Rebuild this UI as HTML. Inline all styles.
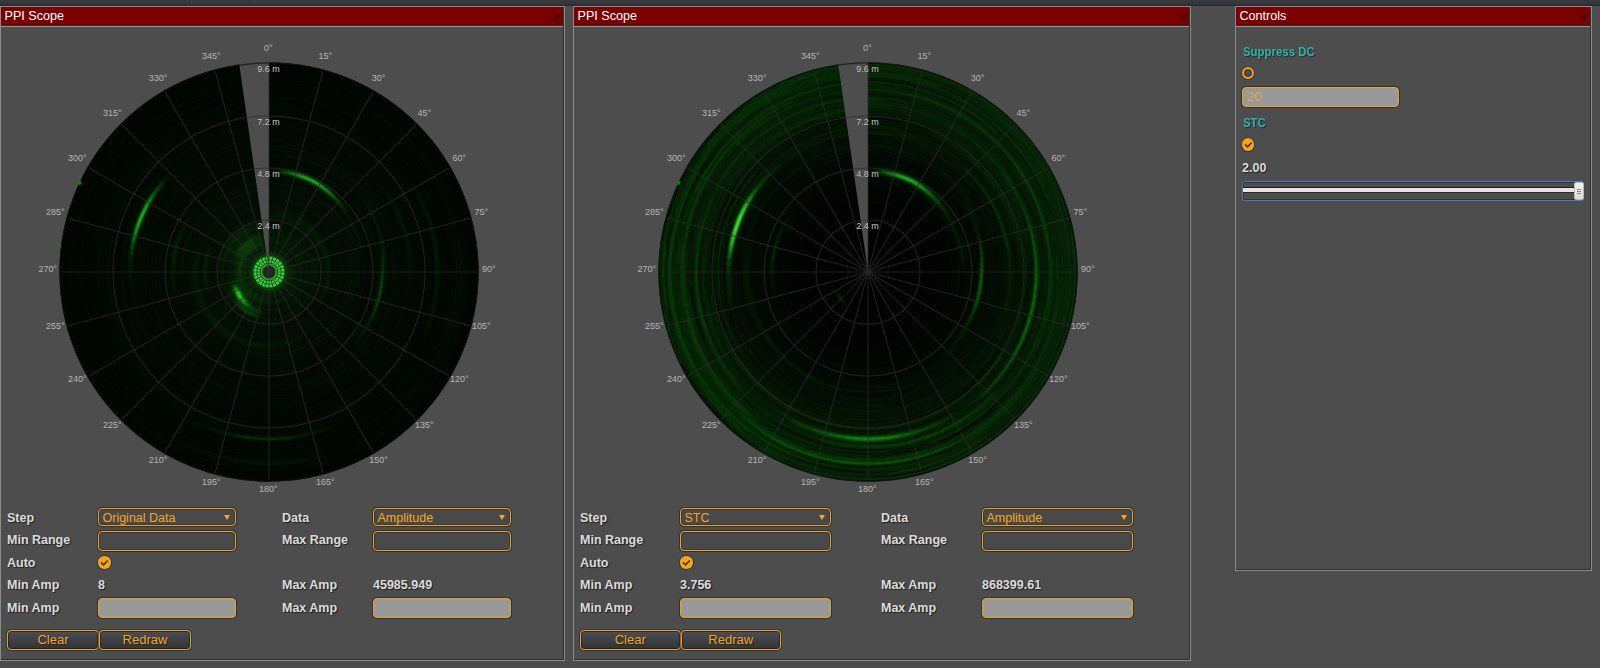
<!DOCTYPE html>
<html><head><meta charset="utf-8"><title>PPI Scope</title>
<style>
*{box-sizing:border-box;margin:0;padding:0}
html,body{width:1600px;height:668px;overflow:hidden;background:#4d4d4d;font-family:"Liberation Sans",sans-serif;font-size:12.5px;color:#e0e0e0}
.topbar{position:absolute;left:0;top:0;width:1600px;height:6px;background:linear-gradient(#363a3e 0,#32363a 65%,#24272a 100%)}
.topbar i{position:absolute;top:0;width:1px;height:4px;background:#454a4f}
.topbar u{position:absolute;top:0;width:1px;height:4px;background:#2a2d30}
.panel{position:absolute;border:1px solid #8c8c8c;background:#4d4d4d;box-shadow:inset -1px -1px 0 #303030}
.title{position:absolute;left:0;top:0;right:1px;height:20px;background:#7a0000;border-bottom:1px solid #969696;box-shadow:inset 0 -1px 0 #3c2020;color:#fff;font-size:12.6px;line-height:18px;padding-left:3.5px}
.title svg{position:absolute;right:0.3px;top:5.8px}
.lbl,.val{position:absolute;font-weight:bold;font-size:12.5px;color:#dcdcdc;text-shadow:1px 1px 1px #1e1e1e;white-space:nowrap;line-height:14px}
.sel{position:absolute;height:18px;border:1px solid #f5a31a;border-radius:4px;background:#494949;color:#f5a623;font-size:12.5px;line-height:16px;padding:1px 0 0 3.5px;box-shadow:0 0 0 1px rgba(20,25,40,.55),inset 0 0 0 1px rgba(20,25,40,.35);white-space:nowrap}
.sel:after{content:"";position:absolute;right:5.1px;top:5.7px;border:3px solid transparent;border-top:5px solid #f5a623;border-bottom:0}
.inp{position:absolute;height:20px;border:1px solid #f5a31a;border-radius:4px;background:#494949;box-shadow:0 0 0 1px rgba(20,25,40,.55),inset 0 0 0 1px rgba(20,25,40,.35);color:#eba24c;line-height:18px;font-size:13px;padding-left:4px}
.inp.dis{background:#999;box-shadow:0 0 0 1px rgba(20,25,40,.55)}
.btn{position:absolute;height:20px;border:1px solid #f5a31a;border-radius:4px;background:linear-gradient(#4b4f55,#303337);color:#f5a623;font-size:13px;text-align:center;line-height:18px;box-shadow:0 0 0 1px rgba(20,25,40,.45),inset 0 0 0 1px rgba(10,20,45,.6);text-shadow:1px 1px 1px #222}
.chk{position:absolute;width:12.4px;height:12.4px;border-radius:50%;background:#f7a41d;box-shadow:0 0 0 1px rgba(20,25,40,.4)}
.chk svg{position:absolute;left:0;top:0}
.rad{position:absolute;width:12.4px;height:12.4px;border-radius:50%;border:2px solid #f7a41d;box-shadow:0 0 0 1px rgba(20,25,40,.4),inset 0 0 0 1px rgba(20,25,40,.4)}
.teal{position:absolute;font-weight:bold;font-size:12.8px;color:#2cb5ac;text-shadow:1px 1px 1px #2a2a2a;line-height:14px;transform:scaleX(.893);transform-origin:0 0;white-space:nowrap}
</style></head><body>
<div class="topbar"><u style="left:190px"></u><i style="left:191px"></i><u style="left:252px"></u><i style="left:253px"></i><u style="left:1193px"></u><i style="left:1194px"></i></div>

<!-- Panel 1 -->
<div class="panel" style="left:0;top:6px;width:565px;height:655px">
  <div class="title">PPI Scope<svg width="11" height="9" viewBox="0 0 11 9"><path d="M2.6 0.9L7 8M9.6 0.8L0.8 7.8" stroke="#560000" stroke-width="2" fill="none"/></svg></div>
</div>
<div style="position:absolute;left:28.5px;top:30.5px;width:480px;height:470px"><svg class="radar" width="480" height="470" viewBox="-240 -241 480 470">
<defs><filter id="b1a" x="-20%" y="-20%" width="140%" height="140%"><feGaussianBlur stdDeviation="1.0"/></filter><filter id="b2a" x="-20%" y="-20%" width="140%" height="140%"><feGaussianBlur stdDeviation="2.6"/></filter><filter id="b0a" x="-20%" y="-20%" width="140%" height="140%"><feGaussianBlur stdDeviation="0.55"/></filter><clipPath id="ca"><circle r="209.5"/></clipPath>
<radialGradient id="ga" gradientUnits="userSpaceOnUse" cx="0" cy="0" r="209.5"><stop offset="0" stop-color="#092609"/><stop offset="0.1" stop-color="#061c06"/><stop offset="0.25" stop-color="#030f03"/><stop offset="0.5" stop-color="#020902"/><stop offset="1" stop-color="#010601"/></radialGradient>
</defs>
<circle r="209.5" fill="url(#ga)"/>
<g clip-path="url(#ca)" fill="none">
<g filter="url(#b0a)">
<path d="M-100.2 -35.3A106.2 106.2 0 0 1 -32.9 -101.0" stroke="#0f6a0f" stroke-width="1.6" stroke-opacity="0.04"/>
<path d="M-103.0 -40.5A110.7 110.7 0 0 1 -56.0 -95.5" stroke="#1a8a1a" stroke-width="1.0" stroke-opacity="0.03"/>
<path d="M-100.7 113.4A151.7 151.7 0 0 1 -48.3 -143.8" stroke="#000" stroke-width="1.8" stroke-opacity="0.39"/>
<path d="M50.6 -2.6A50.6 50.6 0 0 1 32.8 38.6" stroke="#000" stroke-width="0.8" stroke-opacity="0.26"/>
<path d="M25.6 7.3A26.6 26.6 0 0 1 7.0 25.7" stroke="#0f6a0f" stroke-width="0.9" stroke-opacity="0.05"/>
<path d="M-9.1 -19.8A21.8 21.8 0 0 1 21.5 -3.7" stroke="#000" stroke-width="1.1" stroke-opacity="0.30"/>
<path d="M-14.2 33.8A36.6 36.6 0 0 1 -28.9 22.5" stroke="#000" stroke-width="1.3" stroke-opacity="0.33"/>
<path d="M-37.9 16.4A41.3 41.3 0 0 1 -41.2 -2.9" stroke="#000" stroke-width="0.8" stroke-opacity="0.19"/>
<path d="M27.1 -54.9A61.2 61.2 0 0 1 57.9 19.8" stroke="#1a8a1a" stroke-width="1.8" stroke-opacity="0.05"/>
<path d="M74.8 117.9A139.6 139.6 0 0 1 12.6 139.1" stroke="#0f6a0f" stroke-width="1.0" stroke-opacity="0.04"/>
<path d="M16.1 194.3A195.0 195.0 0 0 1 -194.8 7.9" stroke="#000" stroke-width="0.7" stroke-opacity="0.31"/>
<path d="M72.7 130.7A149.6 149.6 0 0 1 -142.6 -45.0" stroke="#000" stroke-width="1.8" stroke-opacity="0.25"/>
<path d="M-14.7 -92.1A93.3 93.3 0 0 1 58.4 72.8" stroke="#000" stroke-width="0.7" stroke-opacity="0.40"/>
<path d="M-103.2 83.4A132.7 132.7 0 0 1 45.3 -124.8" stroke="#1a8a1a" stroke-width="1.1" stroke-opacity="0.03"/>
<path d="M-34.9 -19.3A39.9 39.9 0 0 1 31.6 -24.3" stroke="#1a8a1a" stroke-width="0.7" stroke-opacity="0.04"/>
<path d="M68.9 63.6A93.8 93.8 0 0 1 32.1 88.1" stroke="#000" stroke-width="1.4" stroke-opacity="0.16"/>
<path d="M90.7 104.3A138.3 138.3 0 0 1 -8.9 138.0" stroke="#000" stroke-width="1.6" stroke-opacity="0.28"/>
<path d="M116.8 -75.7A139.2 139.2 0 0 1 -17.5 138.1" stroke="#000" stroke-width="1.4" stroke-opacity="0.17"/>
<path d="M84.7 -110.9A139.5 139.5 0 0 1 116.4 77.0" stroke="#0f6a0f" stroke-width="1.4" stroke-opacity="0.07"/>
<path d="M-15.9 -23.3A28.2 28.2 0 0 1 22.2 -17.5" stroke="#1a8a1a" stroke-width="1.1" stroke-opacity="0.06"/>
<path d="M-75.5 84.7A113.5 113.5 0 0 1 -36.1 -107.6" stroke="#1a8a1a" stroke-width="1.2" stroke-opacity="0.03"/>
<path d="M18.5 29.7A34.9 34.9 0 0 1 -1.9 34.9" stroke="#000" stroke-width="1.5" stroke-opacity="0.37"/>
<path d="M37.2 -56.8A67.9 67.9 0 0 1 -22.4 64.1" stroke="#000" stroke-width="1.3" stroke-opacity="0.18"/>
<path d="M36.3 -29.9A47.0 47.0 0 0 1 15.9 44.3" stroke="#0f6a0f" stroke-width="1.5" stroke-opacity="0.06"/>
<path d="M3.7 -27.3A27.6 27.6 0 0 1 3.7 27.3" stroke="#000" stroke-width="1.5" stroke-opacity="0.37"/>
<path d="M-40.2 135.0A140.9 140.9 0 0 1 -111.8 85.8" stroke="#0f6a0f" stroke-width="1.8" stroke-opacity="0.04"/>
<path d="M-146.8 63.4A159.9 159.9 0 0 1 -97.0 -127.2" stroke="#1a8a1a" stroke-width="1.7" stroke-opacity="0.06"/>
<path d="M17.4 -190.0A190.8 190.8 0 0 1 186.1 42.0" stroke="#0f6a0f" stroke-width="0.7" stroke-opacity="0.07"/>
<path d="M96.8 -109.0A145.8 145.8 0 0 1 143.5 -25.9" stroke="#000" stroke-width="0.8" stroke-opacity="0.10"/>
<path d="M18.2 67.0A69.4 69.4 0 0 1 -65.1 -24.3" stroke="#000" stroke-width="1.7" stroke-opacity="0.20"/>
<path d="M-28.6 -104.3A108.2 108.2 0 0 1 24.1 -105.4" stroke="#1a8a1a" stroke-width="0.8" stroke-opacity="0.04"/>
<path d="M-38.0 18.4A42.2 42.2 0 0 1 -31.0 -28.7" stroke="#0f6a0f" stroke-width="0.7" stroke-opacity="0.03"/>
<path d="M-37.2 -46.0A59.1 59.1 0 0 1 45.4 -37.9" stroke="#000" stroke-width="1.4" stroke-opacity="0.37"/>
<path d="M78.6 -25.4A82.6 82.6 0 0 1 -36.9 73.9" stroke="#1a8a1a" stroke-width="1.6" stroke-opacity="0.05"/>
<path d="M49.5 36.3A61.3 61.3 0 0 1 9.8 60.5" stroke="#000" stroke-width="0.9" stroke-opacity="0.38"/>
<path d="M123.6 -144.1A189.8 189.8 0 0 1 -15.8 189.2" stroke="#000" stroke-width="1.8" stroke-opacity="0.12"/>
<path d="M-107.4 23.1A109.8 109.8 0 0 1 38.1 -103.0" stroke="#0f6a0f" stroke-width="1.3" stroke-opacity="0.04"/>
<path d="M46.3 -173.6A179.7 179.7 0 0 1 42.0 174.7" stroke="#0f6a0f" stroke-width="0.7" stroke-opacity="0.02"/>
<path d="M86.7 127.9A154.6 154.6 0 0 1 -153.7 16.7" stroke="#0f6a0f" stroke-width="1.3" stroke-opacity="0.06"/>
<path d="M-41.2 39.1A56.8 56.8 0 0 1 -55.6 11.5" stroke="#0f6a0f" stroke-width="0.9" stroke-opacity="0.03"/>
<path d="M16.4 103.9A105.1 105.1 0 0 1 -74.3 74.4" stroke="#0f6a0f" stroke-width="1.5" stroke-opacity="0.07"/>
<path d="M54.1 7.6A54.6 54.6 0 0 1 28.1 46.8" stroke="#000" stroke-width="1.5" stroke-opacity="0.24"/>
<path d="M44.9 -73.5A86.1 86.1 0 0 1 -11.7 85.3" stroke="#1a8a1a" stroke-width="1.6" stroke-opacity="0.04"/>
<path d="M8.3 -196.6A196.8 196.8 0 0 1 79.8 179.9" stroke="#1a8a1a" stroke-width="0.9" stroke-opacity="0.04"/>
<path d="M-122.7 21.9A124.7 124.7 0 0 1 -88.7 -87.5" stroke="#0f6a0f" stroke-width="1.4" stroke-opacity="0.05"/>
<path d="M-24.8 -173.5A175.2 175.2 0 0 1 62.7 163.6" stroke="#1a8a1a" stroke-width="1.7" stroke-opacity="0.03"/>
<path d="M-3.6 122.1A122.2 122.2 0 0 1 -59.2 106.9" stroke="#0f6a0f" stroke-width="1.5" stroke-opacity="0.03"/>
<path d="M27.4 -5.5A28.0 28.0 0 0 1 -23.4 15.2" stroke="#000" stroke-width="1.0" stroke-opacity="0.23"/>
<path d="M-92.9 -159.4A184.5 184.5 0 0 1 184.0 13.9" stroke="#000" stroke-width="1.3" stroke-opacity="0.11"/>
<path d="M56.4 -94.0A109.7 109.7 0 0 1 -25.8 106.6" stroke="#0f6a0f" stroke-width="1.2" stroke-opacity="0.07"/>
<path d="M-5.6 62.4A62.7 62.7 0 0 1 -50.7 36.9" stroke="#0f6a0f" stroke-width="1.3" stroke-opacity="0.07"/>
<path d="M-121.9 148.4A192.0 192.0 0 0 1 35.2 -188.8" stroke="#000" stroke-width="1.8" stroke-opacity="0.30"/>
<path d="M41.5 66.4A78.4 78.4 0 0 1 -71.1 32.9" stroke="#000" stroke-width="1.0" stroke-opacity="0.26"/>
<path d="M-21.1 -36.9A42.5 42.5 0 0 1 1.2 -42.5" stroke="#000" stroke-width="1.3" stroke-opacity="0.21"/>
<path d="M-29.8 119.9A123.5 123.5 0 0 1 -92.5 81.9" stroke="#1a8a1a" stroke-width="1.5" stroke-opacity="0.05"/>
<path d="M40.1 90.5A99.0 99.0 0 0 1 -33.1 93.3" stroke="#0f6a0f" stroke-width="1.2" stroke-opacity="0.03"/>
<path d="M32.1 -171.8A174.8 174.8 0 0 1 173.7 19.5" stroke="#0f6a0f" stroke-width="0.8" stroke-opacity="0.05"/>
<path d="M68.4 14.9A70.0 70.0 0 0 1 54.4 44.0" stroke="#1a8a1a" stroke-width="0.9" stroke-opacity="0.02"/>
<path d="M-126.2 -94.0A157.4 157.4 0 0 1 130.7 -87.7" stroke="#000" stroke-width="1.2" stroke-opacity="0.25"/>
<path d="M-92.1 103.4A138.5 138.5 0 0 1 15.3 -137.7" stroke="#0f6a0f" stroke-width="1.4" stroke-opacity="0.02"/>
<path d="M-95.9 -76.1A122.4 122.4 0 0 1 108.2 -57.2" stroke="#1a8a1a" stroke-width="1.6" stroke-opacity="0.05"/>
<path d="M-30.2 -57.3A64.8 64.8 0 0 1 44.1 -47.5" stroke="#0f6a0f" stroke-width="1.0" stroke-opacity="0.07"/>
<path d="M62.0 3.7A62.1 62.1 0 0 1 -42.9 44.8" stroke="#1a8a1a" stroke-width="1.0" stroke-opacity="0.03"/>
<path d="M-28.3 27.2A39.2 39.2 0 0 1 -38.6 -6.9" stroke="#0f6a0f" stroke-width="1.5" stroke-opacity="0.05"/>
<path d="M131.3 110.5A171.6 171.6 0 0 1 -171.1 -12.3" stroke="#000" stroke-width="1.1" stroke-opacity="0.27"/>
<path d="M66.0 -139.0A153.8 153.8 0 0 1 150.4 -32.5" stroke="#0f6a0f" stroke-width="1.5" stroke-opacity="0.05"/>
<path d="M32.6 -24.8A41.0 41.0 0 0 1 13.9 38.6" stroke="#000" stroke-width="1.3" stroke-opacity="0.27"/>
<path d="M31.4 -46.1A55.7 55.7 0 0 1 -13.2 54.2" stroke="#000" stroke-width="1.8" stroke-opacity="0.35"/>
<path d="M14.5 29.2A32.6 32.6 0 0 1 -26.8 18.6" stroke="#0f6a0f" stroke-width="0.8" stroke-opacity="0.02"/>
<path d="M83.6 -27.0A87.8 87.8 0 0 1 85.5 19.8" stroke="#000" stroke-width="1.4" stroke-opacity="0.21"/>
<path d="M54.9 -81.0A97.9 97.9 0 0 1 53.5 81.9" stroke="#000" stroke-width="1.7" stroke-opacity="0.21"/>
<path d="M-92.4 -143.1A170.3 170.3 0 0 1 148.8 82.9" stroke="#000" stroke-width="1.6" stroke-opacity="0.13"/>
<path d="M197.8 10.3A198.1 198.1 0 0 1 -161.6 114.6" stroke="#1a8a1a" stroke-width="1.8" stroke-opacity="0.05"/>
<path d="M-132.1 -140.4A192.8 192.8 0 0 1 179.1 71.4" stroke="#1a8a1a" stroke-width="1.1" stroke-opacity="0.06"/>
<path d="M127.4 82.8A152.0 152.0 0 0 1 56.3 141.1" stroke="#1a8a1a" stroke-width="1.5" stroke-opacity="0.04"/>
<path d="M108.7 -12.3A109.3 109.3 0 0 1 -35.7 103.4" stroke="#000" stroke-width="1.4" stroke-opacity="0.21"/>
<path d="M92.4 -176.3A199.1 199.1 0 0 1 195.4 -37.8" stroke="#0f6a0f" stroke-width="1.1" stroke-opacity="0.03"/>
<path d="M16.9 -116.8A118.0 118.0 0 0 1 9.6 117.6" stroke="#1a8a1a" stroke-width="1.5" stroke-opacity="0.06"/>
<path d="M-109.8 81.9A137.0 137.0 0 0 1 20.7 -135.4" stroke="#0f6a0f" stroke-width="1.3" stroke-opacity="0.04"/>
<path d="M11.6 19.8A23.0 23.0 0 0 1 -22.0 6.7" stroke="#000" stroke-width="1.1" stroke-opacity="0.18"/>
<path d="M-68.5 97.4A119.1 119.1 0 0 1 -112.7 38.5" stroke="#1a8a1a" stroke-width="1.6" stroke-opacity="0.06"/>
<path d="M143.4 -79.9A164.1 164.1 0 0 1 71.2 147.9" stroke="#000" stroke-width="0.9" stroke-opacity="0.38"/>
<path d="M68.1 91.9A114.4 114.4 0 0 1 -56.7 99.3" stroke="#1a8a1a" stroke-width="1.2" stroke-opacity="0.04"/>
<path d="M-78.1 16.6A79.9 79.9 0 0 1 -46.8 -64.7" stroke="#0f6a0f" stroke-width="1.3" stroke-opacity="0.06"/>
<path d="M-76.7 -2.2A76.8 76.8 0 0 1 -50.0 -58.3" stroke="#000" stroke-width="0.7" stroke-opacity="0.17"/>
<path d="M42.1 -84.6A94.5 94.5 0 0 1 -13.8 93.5" stroke="#0f6a0f" stroke-width="1.8" stroke-opacity="0.02"/>
<path d="M-28.0 189.6A191.7 191.7 0 0 1 -178.7 69.5" stroke="#000" stroke-width="1.8" stroke-opacity="0.24"/>
<path d="M-190.3 53.5A197.7 197.7 0 0 1 -140.1 -139.4" stroke="#0f6a0f" stroke-width="1.8" stroke-opacity="0.03"/>
<path d="M25.2 -17.2A30.5 30.5 0 0 1 22.5 20.5" stroke="#000" stroke-width="1.6" stroke-opacity="0.14"/>
<path d="M-81.4 37.1A89.5 89.5 0 0 1 5.1 -89.3" stroke="#000" stroke-width="1.4" stroke-opacity="0.23"/>
<path d="M58.8 -67.6A89.6 89.6 0 0 1 88.1 16.4" stroke="#1a8a1a" stroke-width="1.5" stroke-opacity="0.07"/>
<path d="M-179.6 59.6A189.3 189.3 0 0 1 70.3 -175.7" stroke="#0f6a0f" stroke-width="1.4" stroke-opacity="0.04"/>
<path d="M-46.5 32.5A56.8 56.8 0 0 1 -25.9 -50.5" stroke="#000" stroke-width="1.7" stroke-opacity="0.17"/>
<path d="M13.7 -56.3A57.9 57.9 0 0 1 39.2 -42.6" stroke="#1a8a1a" stroke-width="1.0" stroke-opacity="0.02"/>
<path d="M62.6 -6.0A62.9 62.9 0 0 1 46.1 42.8" stroke="#000" stroke-width="1.7" stroke-opacity="0.33"/>
<path d="M-174.9 -108.8A206.0 206.0 0 0 1 198.9 -53.7" stroke="#0f6a0f" stroke-width="1.1" stroke-opacity="0.03"/>
<path d="M34.0 -8.0A35.0 35.0 0 0 1 -19.2 29.3" stroke="#000" stroke-width="1.4" stroke-opacity="0.34"/>
<path d="M-6.9 -100.7A101.0 101.0 0 0 1 90.8 44.1" stroke="#000" stroke-width="1.1" stroke-opacity="0.34"/>
<path d="M-58.1 -58.3A82.3 82.3 0 0 1 -8.4 -81.9" stroke="#1a8a1a" stroke-width="1.1" stroke-opacity="0.04"/>
<path d="M34.1 10.8A35.8 35.8 0 0 1 -28.2 22.0" stroke="#000" stroke-width="1.2" stroke-opacity="0.27"/>
<path d="M157.7 55.4A167.2 167.2 0 0 1 93.0 138.9" stroke="#000" stroke-width="1.4" stroke-opacity="0.16"/>
<path d="M139.5 73.4A157.6 157.6 0 0 1 -133.8 83.4" stroke="#0f6a0f" stroke-width="0.9" stroke-opacity="0.07"/>
<path d="M-177.0 73.9A191.8 191.8 0 0 1 131.3 -139.9" stroke="#000" stroke-width="1.4" stroke-opacity="0.23"/>
<path d="M-73.0 9.3A73.6 73.6 0 0 1 68.3 -27.5" stroke="#0f6a0f" stroke-width="0.9" stroke-opacity="0.05"/>
<path d="M-60.1 101.9A118.3 118.3 0 0 1 -52.4 -106.0" stroke="#000" stroke-width="0.7" stroke-opacity="0.35"/>
<path d="M-65.7 157.9A171.1 171.1 0 0 1 -33.0 -167.8" stroke="#0f6a0f" stroke-width="1.3" stroke-opacity="0.06"/>
<path d="M45.6 -29.4A54.2 54.2 0 0 1 54.2 0.5" stroke="#0f6a0f" stroke-width="0.9" stroke-opacity="0.06"/>
<path d="M72.1 26.2A76.7 76.7 0 0 1 -48.7 59.3" stroke="#000" stroke-width="1.2" stroke-opacity="0.35"/>
<path d="M20.1 -122.2A123.8 123.8 0 0 1 121.9 -21.8" stroke="#000" stroke-width="0.8" stroke-opacity="0.18"/>
<path d="M9.9 143.8A144.2 144.2 0 0 1 -119.1 -81.3" stroke="#000" stroke-width="1.2" stroke-opacity="0.34"/>
<path d="M166.6 95.7A192.1 192.1 0 0 1 -190.2 27.0" stroke="#000" stroke-width="1.1" stroke-opacity="0.24"/>
<path d="M-41.5 -21.5A46.7 46.7 0 0 1 17.5 -43.3" stroke="#1a8a1a" stroke-width="1.7" stroke-opacity="0.06"/>
<path d="M-113.2 93.3A146.7 146.7 0 0 1 82.8 -121.0" stroke="#0f6a0f" stroke-width="1.7" stroke-opacity="0.07"/>
<path d="M-119.5 6.6A119.7 119.7 0 0 1 -87.5 -81.7" stroke="#1a8a1a" stroke-width="1.2" stroke-opacity="0.04"/>
<path d="M200.6 54.2A207.8 207.8 0 0 1 -42.3 203.5" stroke="#000" stroke-width="0.9" stroke-opacity="0.15"/>
<path d="M-201.1 -33.1A203.8 203.8 0 0 1 126.3 -159.9" stroke="#000" stroke-width="0.8" stroke-opacity="0.19"/>
<path d="M12.4 -53.4A54.8 54.8 0 0 1 9.6 53.9" stroke="#000" stroke-width="1.3" stroke-opacity="0.24"/>
<path d="M-23.2 34.3A41.4 41.4 0 0 1 -12.0 -39.7" stroke="#000" stroke-width="1.0" stroke-opacity="0.17"/>
<path d="M58.5 23.9A63.2 63.2 0 0 1 -58.2 24.6" stroke="#000" stroke-width="0.9" stroke-opacity="0.18"/>
<path d="M-34.2 -119.5A124.3 124.3 0 0 1 114.8 -47.7" stroke="#0f6a0f" stroke-width="1.2" stroke-opacity="0.07"/>
<path d="M-47.1 -137.6A145.4 145.4 0 0 1 33.5 -141.5" stroke="#1a8a1a" stroke-width="0.9" stroke-opacity="0.05"/>
<path d="M-10.5 -171.7A172.1 172.1 0 0 1 150.9 -82.6" stroke="#000" stroke-width="1.3" stroke-opacity="0.26"/>
<path d="M-138.7 -42.0A144.9 144.9 0 0 1 14.4 -144.2" stroke="#000" stroke-width="1.2" stroke-opacity="0.10"/>
<path d="M-84.8 -130.2A155.4 155.4 0 0 1 34.7 -151.5" stroke="#1a8a1a" stroke-width="1.5" stroke-opacity="0.04"/>
<path d="M56.7 -164.2A173.7 173.7 0 0 1 152.1 83.9" stroke="#000" stroke-width="1.4" stroke-opacity="0.32"/>
<path d="M93.0 -89.1A128.8 128.8 0 0 1 128.6 6.4" stroke="#000" stroke-width="1.7" stroke-opacity="0.16"/>
<path d="M-87.3 0.8A87.3 87.3 0 0 1 -70.1 -51.9" stroke="#1a8a1a" stroke-width="1.5" stroke-opacity="0.07"/>
<path d="M66.7 -103.8A123.4 123.4 0 0 1 -22.9 121.3" stroke="#1a8a1a" stroke-width="1.2" stroke-opacity="0.06"/>
<path d="M-153.8 -87.1A176.8 176.8 0 0 1 -38.7 -172.5" stroke="#000" stroke-width="1.3" stroke-opacity="0.26"/>
<path d="M-77.8 17.3A79.7 79.7 0 0 1 -13.6 -78.5" stroke="#000" stroke-width="1.0" stroke-opacity="0.12"/>
<path d="M-86.7 -19.0A88.8 88.8 0 0 1 73.3 -50.1" stroke="#1a8a1a" stroke-width="1.4" stroke-opacity="0.06"/>
<path d="M42.3 11.9A43.9 43.9 0 0 1 -14.7 41.4" stroke="#000" stroke-width="1.5" stroke-opacity="0.36"/>
<path d="M-16.2 -39.1A42.3 42.3 0 0 1 42.2 2.6" stroke="#1a8a1a" stroke-width="0.9" stroke-opacity="0.07"/>
<path d="M113.6 115.9A162.3 162.3 0 0 1 -22.3 160.8" stroke="#0f6a0f" stroke-width="0.8" stroke-opacity="0.05"/>
<path d="M13.6 39.3A41.6 41.6 0 0 1 -41.1 -6.3" stroke="#000" stroke-width="1.2" stroke-opacity="0.18"/>
<path d="M84.0 -40.0A93.1 93.1 0 0 1 -1.5 93.0" stroke="#000" stroke-width="0.8" stroke-opacity="0.29"/>
<path d="M11.6 -56.2A57.4 57.4 0 0 1 44.7 -35.9" stroke="#000" stroke-width="1.5" stroke-opacity="0.24"/>
<path d="M-91.8 -185.7A207.1 207.1 0 0 1 182.8 97.4" stroke="#000" stroke-width="1.1" stroke-opacity="0.33"/>
<path d="M-22.4 -41.5A47.2 47.2 0 0 1 43.3 -18.7" stroke="#000" stroke-width="1.5" stroke-opacity="0.14"/>
<path d="M-87.3 107.4A138.4 138.4 0 0 1 -47.7 -129.9" stroke="#0f6a0f" stroke-width="1.6" stroke-opacity="0.07"/>
<path d="M17.0 17.6A24.4 24.4 0 0 1 1.6 24.4" stroke="#000" stroke-width="1.4" stroke-opacity="0.20"/>
<path d="M-67.0 -95.9A117.0 117.0 0 0 1 114.8 22.8" stroke="#1a8a1a" stroke-width="0.9" stroke-opacity="0.05"/>
<path d="M-10.3 -123.9A124.3 124.3 0 0 1 103.4 69.0" stroke="#000" stroke-width="0.9" stroke-opacity="0.25"/>
<path d="M-116.6 -19.7A118.2 118.2 0 0 1 76.3 -90.3" stroke="#1a8a1a" stroke-width="0.7" stroke-opacity="0.05"/>
<path d="M35.7 30.0A46.6 46.6 0 0 1 -43.9 -15.8" stroke="#0f6a0f" stroke-width="1.1" stroke-opacity="0.06"/>
<path d="M-29.2 104.3A108.3 108.3 0 0 1 -15.6 -107.1" stroke="#000" stroke-width="0.8" stroke-opacity="0.39"/>
<path d="M109.2 64.3A126.7 126.7 0 0 1 -126.1 -12.3" stroke="#0f6a0f" stroke-width="1.5" stroke-opacity="0.03"/>
<path d="M-21.6 43.3A48.4 48.4 0 0 1 -48.3 3.0" stroke="#1a8a1a" stroke-width="1.7" stroke-opacity="0.04"/>
<path d="M160.7 -75.5A177.6 177.6 0 0 1 177.0 13.8" stroke="#000" stroke-width="0.8" stroke-opacity="0.26"/>
<path d="M140.2 152.4A207.1 207.1 0 0 1 -207.0 2.3" stroke="#1a8a1a" stroke-width="1.4" stroke-opacity="0.04"/>
<path d="M-23.1 130.5A132.6 132.6 0 0 1 -84.9 101.8" stroke="#1a8a1a" stroke-width="1.2" stroke-opacity="0.03"/>
<path d="M-18.0 -39.3A43.3 43.3 0 0 1 25.3 -35.1" stroke="#000" stroke-width="0.8" stroke-opacity="0.20"/>
<path d="M25.6 17.5A31.0 31.0 0 0 1 8.4 29.9" stroke="#1a8a1a" stroke-width="1.2" stroke-opacity="0.04"/>
<path d="M-161.6 -100.0A190.0 190.0 0 0 1 177.4 68.1" stroke="#0f6a0f" stroke-width="1.2" stroke-opacity="0.06"/>
<path d="M-29.6 179.7A182.2 182.2 0 0 1 -45.3 -176.5" stroke="#000" stroke-width="1.3" stroke-opacity="0.23"/>
<path d="M-118.5 18.3A119.9 119.9 0 0 1 -109.5 -49.0" stroke="#000" stroke-width="1.1" stroke-opacity="0.37"/>
<path d="M81.0 -172.6A190.7 190.7 0 0 1 132.0 137.6" stroke="#0f6a0f" stroke-width="1.0" stroke-opacity="0.06"/>
<path d="M-41.8 15.1A44.4 44.4 0 0 1 -43.3 -9.8" stroke="#000" stroke-width="1.1" stroke-opacity="0.25"/>
<path d="M50.1 -109.2A120.2 120.2 0 0 1 119.5 -12.9" stroke="#000" stroke-width="1.1" stroke-opacity="0.19"/>
<path d="M189.8 -34.0A192.8 192.8 0 0 1 -128.0 144.2" stroke="#0f6a0f" stroke-width="1.2" stroke-opacity="0.07"/>
<path d="M-37.8 157.2A161.7 161.7 0 0 1 -134.8 89.3" stroke="#1a8a1a" stroke-width="1.6" stroke-opacity="0.03"/>
<path d="M76.8 -184.9A200.3 200.3 0 0 1 199.6 16.2" stroke="#000" stroke-width="1.0" stroke-opacity="0.17"/>
<path d="M178.0 65.6A189.7 189.7 0 0 1 37.2 186.1" stroke="#0f6a0f" stroke-width="1.5" stroke-opacity="0.03"/>
<path d="M-105.2 -17.7A106.7 106.7 0 0 1 89.7 -57.9" stroke="#000" stroke-width="0.9" stroke-opacity="0.20"/>
<path d="M170.9 75.1A186.6 186.6 0 0 1 100.9 157.0" stroke="#000" stroke-width="1.5" stroke-opacity="0.36"/>
<path d="M174.7 -54.3A182.9 182.9 0 0 1 -161.6 85.7" stroke="#1a8a1a" stroke-width="1.7" stroke-opacity="0.03"/>
<path d="M-138.6 21.3A140.2 140.2 0 0 1 -119.3 -73.6" stroke="#000" stroke-width="0.8" stroke-opacity="0.36"/>
<path d="M-30.5 -73.9A80.0 80.0 0 0 1 77.7 18.7" stroke="#0f6a0f" stroke-width="0.8" stroke-opacity="0.06"/>
<path d="M99.0 -34.6A104.9 104.9 0 0 1 -33.7 99.3" stroke="#000" stroke-width="1.0" stroke-opacity="0.17"/>
<path d="M-46.9 28.9A55.1 55.1 0 0 1 -37.3 -40.5" stroke="#000" stroke-width="1.6" stroke-opacity="0.30"/>
<path d="M185.6 -28.3A187.7 187.7 0 0 1 138.3 126.9" stroke="#1a8a1a" stroke-width="1.7" stroke-opacity="0.07"/>
<path d="M-8.8 45.1A45.9 45.9 0 0 1 -42.4 -17.7" stroke="#0f6a0f" stroke-width="1.2" stroke-opacity="0.07"/>
<path d="M25.3 -15.1A29.5 29.5 0 0 1 6.8 28.7" stroke="#0f6a0f" stroke-width="1.2" stroke-opacity="0.05"/>
<path d="M-200.7 -52.0A207.3 207.3 0 0 1 -149.8 -143.3" stroke="#000" stroke-width="1.5" stroke-opacity="0.15"/>
<path d="M-31.1 -38.4A49.4 49.4 0 0 1 -11.7 -48.0" stroke="#0f6a0f" stroke-width="1.3" stroke-opacity="0.07"/>
<path d="M3.3 32.1A32.3 32.3 0 0 1 -29.4 13.4" stroke="#000" stroke-width="1.7" stroke-opacity="0.33"/>
<path d="M-27.0 1.0A27.0 27.0 0 0 1 26.1 -6.7" stroke="#000" stroke-width="1.4" stroke-opacity="0.35"/>
<path d="M-35.9 115.8A121.2 121.2 0 0 1 -79.3 -91.7" stroke="#1a8a1a" stroke-width="1.2" stroke-opacity="0.03"/>
<path d="M-41.9 55.2A69.2 69.2 0 0 1 7.0 -68.9" stroke="#1a8a1a" stroke-width="1.3" stroke-opacity="0.03"/>
<path d="M-47.9 -51.4A70.2 70.2 0 0 1 51.4 -47.8" stroke="#000" stroke-width="0.8" stroke-opacity="0.39"/>
<path d="M-64.4 -51.1A82.2 82.2 0 0 1 80.5 -16.7" stroke="#0f6a0f" stroke-width="1.3" stroke-opacity="0.06"/>
<path d="M-26.4 4.7A26.8 26.8 0 0 1 4.2 -26.5" stroke="#000" stroke-width="1.4" stroke-opacity="0.15"/>
<path d="M-138.1 10.0A138.5 138.5 0 0 1 105.6 -89.6" stroke="#000" stroke-width="1.5" stroke-opacity="0.23"/>
<path d="M168.1 5.1A168.2 168.2 0 0 1 104.4 131.8" stroke="#0f6a0f" stroke-width="1.6" stroke-opacity="0.02"/>
<path d="M49.9 -10.7A51.1 51.1 0 0 1 21.0 46.6" stroke="#0f6a0f" stroke-width="1.2" stroke-opacity="0.02"/>
<path d="M160.8 -125.4A203.9 203.9 0 0 1 -131.2 156.1" stroke="#000" stroke-width="1.5" stroke-opacity="0.25"/>
<path d="M58.0 -89.7A106.8 106.8 0 0 1 76.7 74.4" stroke="#1a8a1a" stroke-width="1.2" stroke-opacity="0.02"/>
<path d="M-18.8 -124.4A125.8 125.8 0 0 1 108.6 63.6" stroke="#1a8a1a" stroke-width="1.4" stroke-opacity="0.07"/>
<path d="M70.2 -117.0A136.4 136.4 0 0 1 122.0 61.1" stroke="#000" stroke-width="1.6" stroke-opacity="0.14"/>
<path d="M54.0 -34.0A63.8 63.8 0 0 1 58.1 26.4" stroke="#000" stroke-width="1.7" stroke-opacity="0.38"/>
<path d="M-60.4 -116.6A131.3 131.3 0 0 1 106.4 76.9" stroke="#0f6a0f" stroke-width="1.7" stroke-opacity="0.05"/>
<path d="M44.5 31.2A54.4 54.4 0 0 1 -1.2 54.4" stroke="#1a8a1a" stroke-width="1.6" stroke-opacity="0.04"/>
<path d="M-55.5 -3.3A55.6 55.6 0 0 1 23.1 -50.5" stroke="#1a8a1a" stroke-width="1.1" stroke-opacity="0.05"/>
<path d="M48.6 -98.7A110.1 110.1 0 0 1 105.4 31.7" stroke="#1a8a1a" stroke-width="0.9" stroke-opacity="0.07"/>
<path d="M150.9 11.7A151.3 151.3 0 0 1 85.0 125.2" stroke="#000" stroke-width="0.7" stroke-opacity="0.18"/>
<path d="M-36.8 -87.6A95.0 95.0 0 0 1 39.3 -86.5" stroke="#1a8a1a" stroke-width="1.1" stroke-opacity="0.03"/>
<path d="M44.3 -76.9A88.8 88.8 0 0 1 83.1 31.4" stroke="#1a8a1a" stroke-width="1.1" stroke-opacity="0.02"/>
<path d="M115.8 147.3A187.3 187.3 0 0 1 17.0 186.6" stroke="#000" stroke-width="1.3" stroke-opacity="0.33"/>
<path d="M60.9 25.1A65.9 65.9 0 0 1 40.5 51.9" stroke="#000" stroke-width="1.4" stroke-opacity="0.15"/>
<path d="M30.2 96.3A100.9 100.9 0 0 1 -80.7 60.6" stroke="#1a8a1a" stroke-width="1.3" stroke-opacity="0.05"/>
</g>
<g filter="url(#b2a)"><path d="M5.0 -100.9A101.0 101.0 0 0 1 10.8 -100.4" stroke="#1a9a1a" stroke-width="6" stroke-opacity="0.04"/><path d="M10.3 -100.5A101.0 101.0 0 0 1 16.1 -99.7" stroke="#1a9a1a" stroke-width="6" stroke-opacity="0.07"/><path d="M15.5 -99.8A101.0 101.0 0 0 1 21.3 -98.7" stroke="#1a9a1a" stroke-width="6" stroke-opacity="0.10"/><path d="M20.7 -98.8A101.0 101.0 0 0 1 26.4 -97.5" stroke="#1a9a1a" stroke-width="6" stroke-opacity="0.12"/><path d="M25.9 -97.6A101.0 101.0 0 0 1 31.5 -96.0" stroke="#1a9a1a" stroke-width="6" stroke-opacity="0.15"/><path d="M31.0 -96.1A101.0 101.0 0 0 1 36.4 -94.2" stroke="#1a9a1a" stroke-width="6" stroke-opacity="0.18"/><path d="M35.9 -94.4A101.0 101.0 0 0 1 41.3 -92.2" stroke="#1a9a1a" stroke-width="6" stroke-opacity="0.19"/><path d="M40.8 -92.4A101.0 101.0 0 0 1 46.1 -89.9" stroke="#1a9a1a" stroke-width="6" stroke-opacity="0.20"/><path d="M45.6 -90.1A100.8 100.8 0 0 1 50.5 -87.0" stroke="#1a9a1a" stroke-width="6" stroke-opacity="0.20"/><path d="M50.1 -87.3A100.4 100.4 0 0 1 54.8 -83.9" stroke="#1a9a1a" stroke-width="6" stroke-opacity="0.18"/><path d="M54.4 -84.2A100.0 100.0 0 0 1 58.9 -80.6" stroke="#1a9a1a" stroke-width="6" stroke-opacity="0.16"/><path d="M58.5 -80.9A99.6 99.6 0 0 1 62.8 -77.1" stroke="#1a9a1a" stroke-width="6" stroke-opacity="0.13"/><path d="M62.4 -77.4A99.2 99.2 0 0 1 66.4 -73.4" stroke="#1a9a1a" stroke-width="6" stroke-opacity="0.10"/><path d="M66.1 -73.8A98.8 98.8 0 0 1 69.9 -69.5" stroke="#1a9a1a" stroke-width="6" stroke-opacity="0.08"/><path d="M69.6 -69.9A98.4 98.4 0 0 1 73.2 -65.5" stroke="#1a9a1a" stroke-width="6" stroke-opacity="0.05"/><path d="M72.8 -65.9A98.0 98.0 0 0 1 76.2 -61.4" stroke="#1a9a1a" stroke-width="6" stroke-opacity="0.04"/><path d="M75.9 -61.8A97.6 97.6 0 0 1 79.0 -57.1" stroke="#1a9a1a" stroke-width="6" stroke-opacity="0.02"/><path d="M-138.7 -9.3A139.0 139.0 0 0 1 -137.9 -17.3" stroke="#1a9a1a" stroke-width="6" stroke-opacity="0.03"/><path d="M-138.0 -16.6A139.0 139.0 0 0 1 -136.8 -24.5" stroke="#1a9a1a" stroke-width="6" stroke-opacity="0.05"/><path d="M-137.0 -23.8A139.0 139.0 0 0 1 -135.4 -31.6" stroke="#1a9a1a" stroke-width="6" stroke-opacity="0.08"/><path d="M-135.5 -30.9A139.0 139.0 0 0 1 -133.5 -38.7" stroke="#1a9a1a" stroke-width="6" stroke-opacity="0.12"/><path d="M-133.7 -38.0A139.0 139.0 0 0 1 -131.3 -45.6" stroke="#1a9a1a" stroke-width="6" stroke-opacity="0.16"/><path d="M-131.5 -44.9A139.0 139.0 0 0 1 -128.7 -52.4" stroke="#1a9a1a" stroke-width="6" stroke-opacity="0.19"/><path d="M-129.0 -51.7A139.0 139.0 0 0 1 -125.8 -59.1" stroke="#1a9a1a" stroke-width="6" stroke-opacity="0.20"/><path d="M-126.1 -58.4A139.0 139.0 0 0 1 -122.6 -65.6" stroke="#1a9a1a" stroke-width="6" stroke-opacity="0.19"/><path d="M-122.9 -64.9A139.0 139.0 0 0 1 -119.0 -71.9" stroke="#1a9a1a" stroke-width="6" stroke-opacity="0.17"/><path d="M-119.3 -71.3A139.0 139.0 0 0 1 -115.0 -78.0" stroke="#1a9a1a" stroke-width="6" stroke-opacity="0.13"/><path d="M-115.4 -77.4A139.0 139.0 0 0 1 -110.8 -83.9" stroke="#1a9a1a" stroke-width="6" stroke-opacity="0.09"/><path d="M-111.2 -83.4A139.0 139.0 0 0 1 -106.2 -89.6" stroke="#1a9a1a" stroke-width="6" stroke-opacity="0.06"/><path d="M-106.7 -89.1A139.0 139.0 0 0 1 -101.4 -95.1" stroke="#1a9a1a" stroke-width="6" stroke-opacity="0.02"/><path d="M-5.7 41.3A41.6 41.6 0 0 1 -8.0 40.7" stroke="#1a9a1a" stroke-width="9" stroke-opacity="0.02"/><path d="M-7.8 40.7A41.3 41.3 0 0 1 -10.1 39.9" stroke="#1a9a1a" stroke-width="9" stroke-opacity="0.03"/><path d="M-9.9 40.0A41.0 41.0 0 0 1 -12.1 39.1" stroke="#1a9a1a" stroke-width="9" stroke-opacity="0.05"/><path d="M-11.9 39.2A40.8 40.8 0 0 1 -14.0 38.1" stroke="#1a9a1a" stroke-width="9" stroke-opacity="0.07"/><path d="M-13.8 38.2A40.5 40.5 0 0 1 -15.9 37.1" stroke="#1a9a1a" stroke-width="9" stroke-opacity="0.11"/><path d="M-15.7 37.2A40.2 40.2 0 0 1 -17.7 36.0" stroke="#1a9a1a" stroke-width="9" stroke-opacity="0.14"/><path d="M-17.5 36.1A40.0 40.0 0 0 1 -19.4 34.8" stroke="#1a9a1a" stroke-width="9" stroke-opacity="0.19"/><path d="M-19.2 34.9A39.7 39.7 0 0 1 -21.0 33.5" stroke="#1a9a1a" stroke-width="9" stroke-opacity="0.24"/><path d="M-20.9 33.6A39.4 39.4 0 0 1 -22.6 32.1" stroke="#1a9a1a" stroke-width="9" stroke-opacity="0.29"/><path d="M-22.4 32.2A39.1 39.1 0 0 1 -24.1 30.7" stroke="#1a9a1a" stroke-width="9" stroke-opacity="0.34"/><path d="M-23.9 30.8A38.9 38.9 0 0 1 -25.5 29.2" stroke="#1a9a1a" stroke-width="9" stroke-opacity="0.39"/><path d="M-25.3 29.3A38.6 38.6 0 0 1 -26.8 27.6" stroke="#1a9a1a" stroke-width="9" stroke-opacity="0.42"/><path d="M-26.6 27.7A38.3 38.3 0 0 1 -28.0 26.0" stroke="#1a9a1a" stroke-width="9" stroke-opacity="0.44"/><path d="M-27.9 26.1A38.0 38.0 0 0 1 -29.1 24.3" stroke="#1a9a1a" stroke-width="9" stroke-opacity="0.45"/><path d="M-29.0 24.5A37.8 37.8 0 0 1 -30.1 22.6" stroke="#1a9a1a" stroke-width="9" stroke-opacity="0.44"/><path d="M-30.0 22.7A37.5 37.5 0 0 1 -31.0 20.8" stroke="#1a9a1a" stroke-width="9" stroke-opacity="0.41"/><path d="M-30.9 21.0A37.2 37.2 0 0 1 -31.8 19.0" stroke="#1a9a1a" stroke-width="9" stroke-opacity="0.37"/><path d="M-31.8 19.2A37.0 37.0 0 0 1 -32.7 17.3" stroke="#1a9a1a" stroke-width="9" stroke-opacity="0.33"/><path d="M-32.6 17.5A37.0 37.0 0 0 1 -33.6 15.5" stroke="#1a9a1a" stroke-width="9" stroke-opacity="0.27"/><path d="M-33.5 15.7A37.0 37.0 0 0 1 -34.3 13.8" stroke="#1a9a1a" stroke-width="9" stroke-opacity="0.22"/><path d="M-34.3 14.0A37.0 37.0 0 0 1 -35.0 12.0" stroke="#1a9a1a" stroke-width="9" stroke-opacity="0.17"/><path d="M-35.0 12.1A37.0 37.0 0 0 1 -35.6 10.1" stroke="#1a9a1a" stroke-width="9" stroke-opacity="0.13"/><path d="M-35.5 10.3A37.0 37.0 0 0 1 -36.1 8.2" stroke="#1a9a1a" stroke-width="9" stroke-opacity="0.09"/><path d="M-36.0 8.4A37.0 37.0 0 0 1 -36.5 6.3" stroke="#1a9a1a" stroke-width="9" stroke-opacity="0.04"/><path d="M-34.8 -9.2A36.0 36.0 0 0 1 -34.2 -11.2" stroke="#1a9a1a" stroke-width="5" stroke-opacity="0.03"/><path d="M-34.3 -11.0A36.0 36.0 0 0 1 -33.6 -13.0" stroke="#1a9a1a" stroke-width="5" stroke-opacity="0.11"/><path d="M-33.6 -12.8A36.0 36.0 0 0 1 -32.8 -14.7" stroke="#1a9a1a" stroke-width="5" stroke-opacity="0.17"/><path d="M-32.9 -14.6A36.0 36.0 0 0 1 -32.0 -16.4" stroke="#1a9a1a" stroke-width="5" stroke-opacity="0.20"/><path d="M-32.1 -16.3A36.0 36.0 0 0 1 -31.1 -18.1" stroke="#1a9a1a" stroke-width="5" stroke-opacity="0.24"/><path d="M-31.2 -17.9A36.0 36.0 0 0 1 -30.1 -19.7" stroke="#1a9a1a" stroke-width="5" stroke-opacity="0.28"/><path d="M-30.2 -19.5A36.0 36.0 0 0 1 -29.1 -21.2" stroke="#1a9a1a" stroke-width="5" stroke-opacity="0.31"/><path d="M-29.2 -21.1A36.0 36.0 0 0 1 -27.9 -22.7" stroke="#1a9a1a" stroke-width="5" stroke-opacity="0.35"/><path d="M-28.0 -22.6A36.0 36.0 0 0 1 -26.7 -24.2" stroke="#1a9a1a" stroke-width="5" stroke-opacity="0.38"/><path d="M-26.8 -24.0A36.0 36.0 0 0 1 -25.4 -25.5" stroke="#1a9a1a" stroke-width="5" stroke-opacity="0.41"/><path d="M-25.5 -25.4A36.0 36.0 0 0 1 -24.0 -26.8" stroke="#1a9a1a" stroke-width="5" stroke-opacity="0.42"/><path d="M-24.2 -26.7A36.0 36.0 0 0 1 -22.6 -28.0" stroke="#1a9a1a" stroke-width="5" stroke-opacity="0.42"/><path d="M-22.7 -27.9A36.0 36.0 0 0 1 -21.1 -29.2" stroke="#1a9a1a" stroke-width="5" stroke-opacity="0.41"/><path d="M-21.2 -29.1A36.0 36.0 0 0 1 -19.5 -30.2" stroke="#1a9a1a" stroke-width="5" stroke-opacity="0.38"/><path d="M-19.7 -30.1A36.0 36.0 0 0 1 -17.9 -31.2" stroke="#1a9a1a" stroke-width="5" stroke-opacity="0.35"/><path d="M-18.1 -31.1A36.0 36.0 0 0 1 -16.3 -32.1" stroke="#1a9a1a" stroke-width="5" stroke-opacity="0.31"/><path d="M-16.4 -32.0A36.0 36.0 0 0 1 -14.6 -32.9" stroke="#1a9a1a" stroke-width="5" stroke-opacity="0.28"/><path d="M-14.7 -32.8A36.0 36.0 0 0 1 -12.8 -33.6" stroke="#1a9a1a" stroke-width="5" stroke-opacity="0.24"/><path d="M-13.0 -33.6A36.0 36.0 0 0 1 -11.0 -34.3" stroke="#1a9a1a" stroke-width="5" stroke-opacity="0.20"/><path d="M-11.2 -34.2A36.0 36.0 0 0 1 -9.2 -34.8" stroke="#1a9a1a" stroke-width="5" stroke-opacity="0.17"/><path d="M-9.4 -34.7A36.0 36.0 0 0 1 -7.4 -35.2" stroke="#1a9a1a" stroke-width="5" stroke-opacity="0.13"/><path d="M-7.6 -35.2A36.0 36.0 0 0 1 -5.5 -35.6" stroke="#1a9a1a" stroke-width="5" stroke-opacity="0.05"/><path d="M0.1 29.0A29.0 29.0 0 0 1 -1.6 29.0" stroke="#1a9a1a" stroke-width="5" stroke-opacity="0.03"/><path d="M-1.4 29.0A29.0 29.0 0 0 1 -3.1 28.8" stroke="#1a9a1a" stroke-width="5" stroke-opacity="0.09"/><path d="M-3.0 28.8A29.0 29.0 0 0 1 -4.6 28.6" stroke="#1a9a1a" stroke-width="5" stroke-opacity="0.13"/><path d="M-4.5 28.7A29.0 29.0 0 0 1 -6.1 28.4" stroke="#1a9a1a" stroke-width="5" stroke-opacity="0.13"/><path d="M-6.0 28.4A29.0 29.0 0 0 1 -7.6 28.0" stroke="#1a9a1a" stroke-width="5" stroke-opacity="0.13"/><path d="M-7.4 28.0A29.0 29.0 0 0 1 -9.0 27.6" stroke="#1a9a1a" stroke-width="5" stroke-opacity="0.13"/><path d="M-8.9 27.6A29.0 29.0 0 0 1 -10.5 27.0" stroke="#1a9a1a" stroke-width="5" stroke-opacity="0.13"/><path d="M-10.3 27.1A29.0 29.0 0 0 1 -11.9 26.5" stroke="#1a9a1a" stroke-width="5" stroke-opacity="0.13"/><path d="M-11.7 26.5A29.0 29.0 0 0 1 -13.2 25.8" stroke="#1a9a1a" stroke-width="5" stroke-opacity="0.14"/><path d="M-13.1 25.9A29.0 29.0 0 0 1 -14.6 25.1" stroke="#1a9a1a" stroke-width="5" stroke-opacity="0.14"/><path d="M-14.4 25.2A29.0 29.0 0 0 1 -15.9 24.3" stroke="#1a9a1a" stroke-width="5" stroke-opacity="0.14"/><path d="M-15.7 24.4A29.0 29.0 0 0 1 -17.1 23.4" stroke="#1a9a1a" stroke-width="5" stroke-opacity="0.14"/><path d="M-17.0 23.5A29.0 29.0 0 0 1 -18.3 22.5" stroke="#1a9a1a" stroke-width="5" stroke-opacity="0.15"/><path d="M-18.2 22.6A29.0 29.0 0 0 1 -19.5 21.5" stroke="#1a9a1a" stroke-width="5" stroke-opacity="0.15"/><path d="M-19.3 21.6A29.0 29.0 0 0 1 -20.6 20.5" stroke="#1a9a1a" stroke-width="5" stroke-opacity="0.16"/><path d="M-20.5 20.6A29.0 29.0 0 0 1 -21.6 19.3" stroke="#1a9a1a" stroke-width="5" stroke-opacity="0.16"/><path d="M-21.5 19.5A29.0 29.0 0 0 1 -22.6 18.2" stroke="#1a9a1a" stroke-width="5" stroke-opacity="0.17"/><path d="M-22.5 18.3A29.0 29.0 0 0 1 -23.5 17.0" stroke="#1a9a1a" stroke-width="5" stroke-opacity="0.17"/><path d="M-23.4 17.1A29.0 29.0 0 0 1 -24.4 15.7" stroke="#1a9a1a" stroke-width="5" stroke-opacity="0.18"/><path d="M-24.3 15.9A29.0 29.0 0 0 1 -25.2 14.4" stroke="#1a9a1a" stroke-width="5" stroke-opacity="0.18"/><path d="M-25.1 14.6A29.0 29.0 0 0 1 -25.9 13.1" stroke="#1a9a1a" stroke-width="5" stroke-opacity="0.19"/><path d="M-25.8 13.2A29.0 29.0 0 0 1 -26.5 11.7" stroke="#1a9a1a" stroke-width="5" stroke-opacity="0.20"/><path d="M-26.5 11.9A29.0 29.0 0 0 1 -27.1 10.3" stroke="#1a9a1a" stroke-width="5" stroke-opacity="0.20"/><path d="M-27.0 10.5A29.0 29.0 0 0 1 -27.6 8.9" stroke="#1a9a1a" stroke-width="5" stroke-opacity="0.21"/><path d="M-27.6 9.0A29.0 29.0 0 0 1 -28.0 7.4" stroke="#1a9a1a" stroke-width="5" stroke-opacity="0.22"/><path d="M-28.0 7.6A29.0 29.0 0 0 1 -28.4 6.0" stroke="#1a9a1a" stroke-width="5" stroke-opacity="0.23"/><path d="M-28.4 6.1A29.0 29.0 0 0 1 -28.7 4.5" stroke="#1a9a1a" stroke-width="5" stroke-opacity="0.23"/><path d="M-28.6 4.6A29.0 29.0 0 0 1 -28.8 3.0" stroke="#1a9a1a" stroke-width="5" stroke-opacity="0.24"/><path d="M-28.8 3.1A29.0 29.0 0 0 1 -29.0 1.4" stroke="#1a9a1a" stroke-width="5" stroke-opacity="0.25"/><path d="M-29.0 1.6A29.0 29.0 0 0 1 -29.0 -0.1" stroke="#1a9a1a" stroke-width="5" stroke-opacity="0.26"/><path d="M-29.0 0.1A29.0 29.0 0 0 1 -29.0 -1.6" stroke="#1a9a1a" stroke-width="5" stroke-opacity="0.26"/><path d="M-29.0 -1.4A29.0 29.0 0 0 1 -28.8 -3.1" stroke="#1a9a1a" stroke-width="5" stroke-opacity="0.27"/><path d="M-28.8 -3.0A29.0 29.0 0 0 1 -28.6 -4.6" stroke="#1a9a1a" stroke-width="5" stroke-opacity="0.28"/><path d="M-28.7 -4.5A29.0 29.0 0 0 1 -28.4 -6.1" stroke="#1a9a1a" stroke-width="5" stroke-opacity="0.28"/><path d="M-28.4 -6.0A29.0 29.0 0 0 1 -28.0 -7.6" stroke="#1a9a1a" stroke-width="5" stroke-opacity="0.29"/><path d="M-28.0 -7.4A29.0 29.0 0 0 1 -27.6 -9.0" stroke="#1a9a1a" stroke-width="5" stroke-opacity="0.29"/><path d="M-27.6 -8.9A29.0 29.0 0 0 1 -27.0 -10.5" stroke="#1a9a1a" stroke-width="5" stroke-opacity="0.29"/><path d="M-27.1 -10.3A29.0 29.0 0 0 1 -26.5 -11.9" stroke="#1a9a1a" stroke-width="5" stroke-opacity="0.30"/><path d="M-26.5 -11.7A29.0 29.0 0 0 1 -25.8 -13.2" stroke="#1a9a1a" stroke-width="5" stroke-opacity="0.30"/><path d="M-25.9 -13.1A29.0 29.0 0 0 1 -25.1 -14.6" stroke="#1a9a1a" stroke-width="5" stroke-opacity="0.30"/><path d="M-25.2 -14.4A29.0 29.0 0 0 1 -24.3 -15.9" stroke="#1a9a1a" stroke-width="5" stroke-opacity="0.30"/><path d="M-24.4 -15.7A29.0 29.0 0 0 1 -23.4 -17.1" stroke="#1a9a1a" stroke-width="5" stroke-opacity="0.30"/><path d="M-23.5 -17.0A29.0 29.0 0 0 1 -22.5 -18.3" stroke="#1a9a1a" stroke-width="5" stroke-opacity="0.30"/><path d="M-22.6 -18.2A29.0 29.0 0 0 1 -21.5 -19.5" stroke="#1a9a1a" stroke-width="5" stroke-opacity="0.29"/><path d="M-21.6 -19.3A29.0 29.0 0 0 1 -20.5 -20.6" stroke="#1a9a1a" stroke-width="5" stroke-opacity="0.29"/><path d="M-20.6 -20.5A29.0 29.0 0 0 1 -19.3 -21.6" stroke="#1a9a1a" stroke-width="5" stroke-opacity="0.29"/><path d="M-19.5 -21.5A29.0 29.0 0 0 1 -18.2 -22.6" stroke="#1a9a1a" stroke-width="5" stroke-opacity="0.28"/><path d="M-18.3 -22.5A29.0 29.0 0 0 1 -17.0 -23.5" stroke="#1a9a1a" stroke-width="5" stroke-opacity="0.28"/><path d="M-17.1 -23.4A29.0 29.0 0 0 1 -15.7 -24.4" stroke="#1a9a1a" stroke-width="5" stroke-opacity="0.27"/><path d="M-15.9 -24.3A29.0 29.0 0 0 1 -14.4 -25.2" stroke="#1a9a1a" stroke-width="5" stroke-opacity="0.26"/><path d="M-14.6 -25.1A29.0 29.0 0 0 1 -13.1 -25.9" stroke="#1a9a1a" stroke-width="5" stroke-opacity="0.26"/><path d="M-13.2 -25.8A29.0 29.0 0 0 1 -11.7 -26.5" stroke="#1a9a1a" stroke-width="5" stroke-opacity="0.25"/><path d="M-11.9 -26.5A29.0 29.0 0 0 1 -10.3 -27.1" stroke="#1a9a1a" stroke-width="5" stroke-opacity="0.24"/><path d="M-10.5 -27.0A29.0 29.0 0 0 1 -8.9 -27.6" stroke="#1a9a1a" stroke-width="5" stroke-opacity="0.23"/><path d="M-9.0 -27.6A29.0 29.0 0 0 1 -7.4 -28.0" stroke="#1a9a1a" stroke-width="5" stroke-opacity="0.23"/><path d="M-7.6 -28.0A29.0 29.0 0 0 1 -6.0 -28.4" stroke="#1a9a1a" stroke-width="5" stroke-opacity="0.20"/><path d="M-6.1 -28.4A29.0 29.0 0 0 1 -4.5 -28.7" stroke="#1a9a1a" stroke-width="5" stroke-opacity="0.09"/><path d="M-4.6 -28.6A29.0 29.0 0 0 1 -4.0 -28.7" stroke="#1a9a1a" stroke-width="5" stroke-opacity="0.02"/><path d="M-47.0 0.1A47.0 47.0 0 0 1 -46.9 -2.6" stroke="#1a9a1a" stroke-width="4" stroke-opacity="0.02"/><path d="M-46.9 -2.3A47.0 47.0 0 0 1 -46.7 -5.0" stroke="#1a9a1a" stroke-width="4" stroke-opacity="0.06"/><path d="M-46.8 -4.8A47.0 47.0 0 0 1 -46.4 -7.5" stroke="#1a9a1a" stroke-width="4" stroke-opacity="0.08"/><path d="M-46.4 -7.2A47.0 47.0 0 0 1 -45.9 -9.9" stroke="#1a9a1a" stroke-width="4" stroke-opacity="0.09"/><path d="M-46.0 -9.7A47.0 47.0 0 0 1 -45.4 -12.3" stroke="#1a9a1a" stroke-width="4" stroke-opacity="0.10"/><path d="M-45.4 -12.0A47.0 47.0 0 0 1 -44.7 -14.6" stroke="#1a9a1a" stroke-width="4" stroke-opacity="0.11"/><path d="M-44.7 -14.4A47.0 47.0 0 0 1 -43.8 -17.0" stroke="#1a9a1a" stroke-width="4" stroke-opacity="0.12"/><path d="M-43.9 -16.7A47.0 47.0 0 0 1 -42.9 -19.2" stroke="#1a9a1a" stroke-width="4" stroke-opacity="0.13"/><path d="M-43.0 -19.0A47.0 47.0 0 0 1 -41.8 -21.4" stroke="#1a9a1a" stroke-width="4" stroke-opacity="0.15"/><path d="M-41.9 -21.2A47.0 47.0 0 0 1 -40.6 -23.6" stroke="#1a9a1a" stroke-width="4" stroke-opacity="0.17"/><path d="M-40.8 -23.4A47.0 47.0 0 0 1 -39.4 -25.7" stroke="#1a9a1a" stroke-width="4" stroke-opacity="0.18"/><path d="M-39.5 -25.5A47.0 47.0 0 0 1 -38.0 -27.7" stroke="#1a9a1a" stroke-width="4" stroke-opacity="0.20"/><path d="M-38.1 -27.5A47.0 47.0 0 0 1 -36.4 -29.7" stroke="#1a9a1a" stroke-width="4" stroke-opacity="0.21"/><path d="M-36.6 -29.5A47.0 47.0 0 0 1 -34.8 -31.5" stroke="#1a9a1a" stroke-width="4" stroke-opacity="0.22"/><path d="M-35.0 -31.4A47.0 47.0 0 0 1 -33.1 -33.3" stroke="#1a9a1a" stroke-width="4" stroke-opacity="0.22"/><path d="M-33.3 -33.1A47.0 47.0 0 0 1 -31.4 -35.0" stroke="#1a9a1a" stroke-width="4" stroke-opacity="0.22"/><path d="M-31.5 -34.8A47.0 47.0 0 0 1 -29.5 -36.6" stroke="#1a9a1a" stroke-width="4" stroke-opacity="0.22"/><path d="M-29.7 -36.4A47.0 47.0 0 0 1 -27.5 -38.1" stroke="#1a9a1a" stroke-width="4" stroke-opacity="0.21"/><path d="M-27.7 -38.0A47.0 47.0 0 0 1 -25.5 -39.5" stroke="#1a9a1a" stroke-width="4" stroke-opacity="0.20"/><path d="M-25.7 -39.4A47.0 47.0 0 0 1 -23.4 -40.8" stroke="#1a9a1a" stroke-width="4" stroke-opacity="0.18"/><path d="M-23.6 -40.6A47.0 47.0 0 0 1 -21.2 -41.9" stroke="#1a9a1a" stroke-width="4" stroke-opacity="0.17"/><path d="M-21.4 -41.8A47.0 47.0 0 0 1 -19.0 -43.0" stroke="#1a9a1a" stroke-width="4" stroke-opacity="0.15"/><path d="M-19.2 -42.9A47.0 47.0 0 0 1 -16.7 -43.9" stroke="#1a9a1a" stroke-width="4" stroke-opacity="0.13"/><path d="M-17.0 -43.8A47.0 47.0 0 0 1 -14.4 -44.7" stroke="#1a9a1a" stroke-width="4" stroke-opacity="0.12"/><path d="M-14.6 -44.7A47.0 47.0 0 0 1 -12.0 -45.4" stroke="#1a9a1a" stroke-width="4" stroke-opacity="0.11"/><path d="M-12.3 -45.4A47.0 47.0 0 0 1 -9.7 -46.0" stroke="#1a9a1a" stroke-width="4" stroke-opacity="0.06"/><path d="M-9.9 -45.9A47.0 47.0 0 0 1 -8.0 -46.3" stroke="#1a9a1a" stroke-width="4" stroke-opacity="0.02"/><path d="M-0.2 -58.0A58.0 58.0 0 0 1 3.2 -57.9" stroke="#1a9a1a" stroke-width="4" stroke-opacity="0.02"/><path d="M2.9 -57.9A58.0 58.0 0 0 1 6.2 -57.7" stroke="#1a9a1a" stroke-width="4" stroke-opacity="0.06"/><path d="M5.9 -57.7A58.0 58.0 0 0 1 9.2 -57.3" stroke="#1a9a1a" stroke-width="4" stroke-opacity="0.09"/><path d="M8.9 -57.3A58.0 58.0 0 0 1 12.2 -56.7" stroke="#1a9a1a" stroke-width="4" stroke-opacity="0.09"/><path d="M11.9 -56.8A58.0 58.0 0 0 1 15.2 -56.0" stroke="#1a9a1a" stroke-width="4" stroke-opacity="0.10"/><path d="M14.9 -56.1A58.0 58.0 0 0 1 18.1 -55.1" stroke="#1a9a1a" stroke-width="4" stroke-opacity="0.10"/><path d="M17.8 -55.2A58.0 58.0 0 0 1 20.9 -54.1" stroke="#1a9a1a" stroke-width="4" stroke-opacity="0.11"/><path d="M20.6 -54.2A58.0 58.0 0 0 1 23.7 -52.9" stroke="#1a9a1a" stroke-width="4" stroke-opacity="0.11"/><path d="M23.5 -53.0A58.0 58.0 0 0 1 26.5 -51.6" stroke="#1a9a1a" stroke-width="4" stroke-opacity="0.12"/><path d="M26.2 -51.7A58.0 58.0 0 0 1 29.1 -50.2" stroke="#1a9a1a" stroke-width="4" stroke-opacity="0.12"/><path d="M28.9 -50.3A58.0 58.0 0 0 1 31.7 -48.6" stroke="#1a9a1a" stroke-width="4" stroke-opacity="0.13"/><path d="M31.5 -48.7A58.0 58.0 0 0 1 34.2 -46.8" stroke="#1a9a1a" stroke-width="4" stroke-opacity="0.13"/><path d="M34.0 -47.0A58.0 58.0 0 0 1 36.6 -45.0" stroke="#1a9a1a" stroke-width="4" stroke-opacity="0.13"/><path d="M36.4 -45.2A58.0 58.0 0 0 1 38.9 -43.0" stroke="#1a9a1a" stroke-width="4" stroke-opacity="0.14"/><path d="M38.7 -43.2A58.0 58.0 0 0 1 41.1 -40.9" stroke="#1a9a1a" stroke-width="4" stroke-opacity="0.14"/><path d="M40.9 -41.1A58.0 58.0 0 0 1 43.2 -38.7" stroke="#1a9a1a" stroke-width="4" stroke-opacity="0.14"/><path d="M43.0 -38.9A58.0 58.0 0 0 1 45.2 -36.4" stroke="#1a9a1a" stroke-width="4" stroke-opacity="0.14"/><path d="M45.0 -36.6A58.0 58.0 0 0 1 47.0 -34.0" stroke="#1a9a1a" stroke-width="4" stroke-opacity="0.14"/><path d="M46.8 -34.2A58.0 58.0 0 0 1 48.7 -31.5" stroke="#1a9a1a" stroke-width="4" stroke-opacity="0.14"/><path d="M48.6 -31.7A58.0 58.0 0 0 1 50.3 -28.9" stroke="#1a9a1a" stroke-width="4" stroke-opacity="0.14"/><path d="M50.2 -29.1A58.0 58.0 0 0 1 51.7 -26.2" stroke="#1a9a1a" stroke-width="4" stroke-opacity="0.13"/><path d="M51.6 -26.5A58.0 58.0 0 0 1 53.0 -23.5" stroke="#1a9a1a" stroke-width="4" stroke-opacity="0.13"/><path d="M52.9 -23.7A58.0 58.0 0 0 1 54.2 -20.6" stroke="#1a9a1a" stroke-width="4" stroke-opacity="0.13"/><path d="M54.1 -20.9A58.0 58.0 0 0 1 55.2 -17.8" stroke="#1a9a1a" stroke-width="4" stroke-opacity="0.12"/><path d="M55.1 -18.1A58.0 58.0 0 0 1 56.1 -14.9" stroke="#1a9a1a" stroke-width="4" stroke-opacity="0.12"/><path d="M56.0 -15.2A58.0 58.0 0 0 1 56.8 -11.9" stroke="#1a9a1a" stroke-width="4" stroke-opacity="0.12"/><path d="M56.7 -12.2A58.0 58.0 0 0 1 57.3 -8.9" stroke="#1a9a1a" stroke-width="4" stroke-opacity="0.11"/><path d="M57.3 -9.2A58.0 58.0 0 0 1 57.7 -5.9" stroke="#1a9a1a" stroke-width="4" stroke-opacity="0.11"/><path d="M57.7 -6.2A58.0 58.0 0 0 1 57.9 -2.9" stroke="#1a9a1a" stroke-width="4" stroke-opacity="0.10"/><path d="M57.9 -3.2A58.0 58.0 0 0 1 58.0 0.2" stroke="#1a9a1a" stroke-width="4" stroke-opacity="0.10"/><path d="M58.0 -0.2A58.0 58.0 0 0 1 57.9 3.2" stroke="#1a9a1a" stroke-width="4" stroke-opacity="0.09"/><path d="M57.9 2.9A58.0 58.0 0 0 1 57.7 6.2" stroke="#1a9a1a" stroke-width="4" stroke-opacity="0.09"/><path d="M57.7 5.9A58.0 58.0 0 0 1 57.3 9.2" stroke="#1a9a1a" stroke-width="4" stroke-opacity="0.08"/><path d="M57.3 8.9A58.0 58.0 0 0 1 56.7 12.2" stroke="#1a9a1a" stroke-width="4" stroke-opacity="0.08"/><path d="M56.8 11.9A58.0 58.0 0 0 1 56.0 15.2" stroke="#1a9a1a" stroke-width="4" stroke-opacity="0.07"/><path d="M56.1 14.9A58.0 58.0 0 0 1 55.1 18.1" stroke="#1a9a1a" stroke-width="4" stroke-opacity="0.07"/><path d="M55.2 17.8A58.0 58.0 0 0 1 54.1 20.9" stroke="#1a9a1a" stroke-width="4" stroke-opacity="0.07"/><path d="M54.2 20.6A58.0 58.0 0 0 1 52.9 23.7" stroke="#1a9a1a" stroke-width="4" stroke-opacity="0.06"/><path d="M53.0 23.5A58.0 58.0 0 0 1 51.6 26.5" stroke="#1a9a1a" stroke-width="4" stroke-opacity="0.04"/><path d="M33.8 65.8A74.0 74.0 0 0 1 29.9 67.7" stroke="#1a9a1a" stroke-width="5" stroke-opacity="0.05"/><path d="M30.3 67.5A74.0 74.0 0 0 1 26.3 69.2" stroke="#1a9a1a" stroke-width="5" stroke-opacity="0.06"/><path d="M26.7 69.0A74.0 74.0 0 0 1 22.7 70.4" stroke="#1a9a1a" stroke-width="5" stroke-opacity="0.07"/><path d="M23.1 70.3A74.0 74.0 0 0 1 19.0 71.5" stroke="#1a9a1a" stroke-width="5" stroke-opacity="0.07"/><path d="M19.3 71.4A74.0 74.0 0 0 1 15.2 72.4" stroke="#1a9a1a" stroke-width="5" stroke-opacity="0.07"/><path d="M15.6 72.3A74.0 74.0 0 0 1 11.4 73.1" stroke="#1a9a1a" stroke-width="5" stroke-opacity="0.07"/><path d="M11.8 73.1A74.0 74.0 0 0 1 7.5 73.6" stroke="#1a9a1a" stroke-width="5" stroke-opacity="0.08"/><path d="M7.9 73.6A74.0 74.0 0 0 1 3.7 73.9" stroke="#1a9a1a" stroke-width="5" stroke-opacity="0.08"/><path d="M4.1 73.9A74.0 74.0 0 0 1 -0.2 74.0" stroke="#1a9a1a" stroke-width="5" stroke-opacity="0.08"/><path d="M0.2 74.0A74.0 74.0 0 0 1 -4.1 73.9" stroke="#1a9a1a" stroke-width="5" stroke-opacity="0.09"/><path d="M-3.7 73.9A74.0 74.0 0 0 1 -7.9 73.6" stroke="#1a9a1a" stroke-width="5" stroke-opacity="0.09"/><path d="M-7.5 73.6A74.0 74.0 0 0 1 -11.8 73.1" stroke="#1a9a1a" stroke-width="5" stroke-opacity="0.10"/><path d="M-11.4 73.1A74.0 74.0 0 0 1 -15.6 72.3" stroke="#1a9a1a" stroke-width="5" stroke-opacity="0.10"/><path d="M-15.2 72.4A74.0 74.0 0 0 1 -19.3 71.4" stroke="#1a9a1a" stroke-width="5" stroke-opacity="0.10"/><path d="M-19.0 71.5A74.0 74.0 0 0 1 -23.1 70.3" stroke="#1a9a1a" stroke-width="5" stroke-opacity="0.11"/><path d="M-22.7 70.4A74.0 74.0 0 0 1 -26.7 69.0" stroke="#1a9a1a" stroke-width="5" stroke-opacity="0.11"/><path d="M-26.3 69.2A74.0 74.0 0 0 1 -30.3 67.5" stroke="#1a9a1a" stroke-width="5" stroke-opacity="0.11"/><path d="M-29.9 67.7A74.0 74.0 0 0 1 -33.8 65.8" stroke="#1a9a1a" stroke-width="5" stroke-opacity="0.11"/><path d="M-33.4 66.0A74.0 74.0 0 0 1 -37.2 64.0" stroke="#1a9a1a" stroke-width="5" stroke-opacity="0.12"/><path d="M-36.8 64.2A74.0 74.0 0 0 1 -40.5 62.0" stroke="#1a9a1a" stroke-width="5" stroke-opacity="0.12"/><path d="M-40.1 62.2A74.0 74.0 0 0 1 -43.7 59.8" stroke="#1a9a1a" stroke-width="5" stroke-opacity="0.12"/><path d="M-43.3 60.0A74.0 74.0 0 0 1 -46.7 57.4" stroke="#1a9a1a" stroke-width="5" stroke-opacity="0.12"/><path d="M-46.4 57.6A74.0 74.0 0 0 1 -49.7 54.9" stroke="#1a9a1a" stroke-width="5" stroke-opacity="0.12"/><path d="M-49.4 55.1A74.0 74.0 0 0 1 -52.5 52.2" stroke="#1a9a1a" stroke-width="5" stroke-opacity="0.12"/><path d="M-52.2 52.5A74.0 74.0 0 0 1 -55.1 49.4" stroke="#1a9a1a" stroke-width="5" stroke-opacity="0.12"/><path d="M-54.9 49.7A74.0 74.0 0 0 1 -57.6 46.4" stroke="#1a9a1a" stroke-width="5" stroke-opacity="0.12"/><path d="M-57.4 46.7A74.0 74.0 0 0 1 -60.0 43.3" stroke="#1a9a1a" stroke-width="5" stroke-opacity="0.12"/><path d="M-59.8 43.7A74.0 74.0 0 0 1 -62.2 40.1" stroke="#1a9a1a" stroke-width="5" stroke-opacity="0.11"/><path d="M-62.0 40.5A74.0 74.0 0 0 1 -64.2 36.8" stroke="#1a9a1a" stroke-width="5" stroke-opacity="0.11"/><path d="M-64.0 37.2A74.0 74.0 0 0 1 -66.0 33.4" stroke="#1a9a1a" stroke-width="5" stroke-opacity="0.11"/><path d="M-65.8 33.8A74.0 74.0 0 0 1 -67.7 29.9" stroke="#1a9a1a" stroke-width="5" stroke-opacity="0.10"/><path d="M-67.5 30.3A74.0 74.0 0 0 1 -69.2 26.3" stroke="#1a9a1a" stroke-width="5" stroke-opacity="0.10"/><path d="M-69.0 26.7A74.0 74.0 0 0 1 -70.4 22.7" stroke="#1a9a1a" stroke-width="5" stroke-opacity="0.10"/><path d="M-70.3 23.1A74.0 74.0 0 0 1 -71.5 19.0" stroke="#1a9a1a" stroke-width="5" stroke-opacity="0.09"/><path d="M-71.4 19.3A74.0 74.0 0 0 1 -72.4 15.2" stroke="#1a9a1a" stroke-width="5" stroke-opacity="0.09"/><path d="M-72.3 15.6A74.0 74.0 0 0 1 -73.1 11.4" stroke="#1a9a1a" stroke-width="5" stroke-opacity="0.09"/><path d="M-73.1 11.8A74.0 74.0 0 0 1 -73.6 7.5" stroke="#1a9a1a" stroke-width="5" stroke-opacity="0.08"/><path d="M-73.6 7.9A74.0 74.0 0 0 1 -73.9 3.7" stroke="#1a9a1a" stroke-width="5" stroke-opacity="0.08"/><path d="M-73.9 4.1A74.0 74.0 0 0 1 -74.0 -0.2" stroke="#1a9a1a" stroke-width="5" stroke-opacity="0.08"/><path d="M-74.0 0.2A74.0 74.0 0 0 1 -73.9 -4.1" stroke="#1a9a1a" stroke-width="5" stroke-opacity="0.07"/><path d="M-73.9 -3.7A74.0 74.0 0 0 1 -73.6 -7.9" stroke="#1a9a1a" stroke-width="5" stroke-opacity="0.07"/><path d="M-73.6 -7.5A74.0 74.0 0 0 1 -73.1 -11.8" stroke="#1a9a1a" stroke-width="5" stroke-opacity="0.07"/><path d="M-73.1 -11.4A74.0 74.0 0 0 1 -72.3 -15.6" stroke="#1a9a1a" stroke-width="5" stroke-opacity="0.06"/><path d="M-72.4 -15.2A74.0 74.0 0 0 1 -71.4 -19.3" stroke="#1a9a1a" stroke-width="5" stroke-opacity="0.06"/><path d="M-71.5 -19.0A74.0 74.0 0 0 1 -70.3 -23.1" stroke="#1a9a1a" stroke-width="5" stroke-opacity="0.04"/></g>
<g filter="url(#b1a)"><path d="M3.3 -100.9A101.0 101.0 0 0 1 9.1 -100.6" stroke="#22cc22" stroke-width="3.0" stroke-opacity="0.04"/><path d="M8.5 -100.6A101.0 101.0 0 0 1 14.3 -100.0" stroke="#22cc22" stroke-width="3.0" stroke-opacity="0.18"/><path d="M13.8 -100.1A101.0 101.0 0 0 1 19.5 -99.1" stroke="#22cc22" stroke-width="3.0" stroke-opacity="0.33"/><path d="M19.0 -99.2A101.0 101.0 0 0 1 24.7 -97.9" stroke="#22cc22" stroke-width="3.0" stroke-opacity="0.43"/><path d="M24.2 -98.1A101.0 101.0 0 0 1 29.8 -96.5" stroke="#22cc22" stroke-width="3.0" stroke-opacity="0.55"/><path d="M29.3 -96.7A101.0 101.0 0 0 1 34.8 -94.8" stroke="#22cc22" stroke-width="3.0" stroke-opacity="0.65"/><path d="M34.3 -95.0A101.0 101.0 0 0 1 39.7 -92.9" stroke="#22cc22" stroke-width="3.0" stroke-opacity="0.72"/><path d="M39.2 -93.1A101.0 101.0 0 0 1 44.5 -90.7" stroke="#22cc22" stroke-width="3.0" stroke-opacity="0.75"/><path d="M44.0 -90.9A100.9 100.9 0 0 1 49.1 -88.0" stroke="#22cc22" stroke-width="3.0" stroke-opacity="0.73"/><path d="M48.6 -88.3A100.5 100.5 0 0 1 53.4 -84.9" stroke="#22cc22" stroke-width="3.0" stroke-opacity="0.67"/><path d="M53.0 -85.3A100.1 100.1 0 0 1 57.5 -81.7" stroke="#22cc22" stroke-width="3.0" stroke-opacity="0.58"/><path d="M57.1 -82.0A99.8 99.8 0 0 1 61.5 -78.3" stroke="#22cc22" stroke-width="3.0" stroke-opacity="0.47"/><path d="M61.1 -78.6A99.4 99.4 0 0 1 65.2 -74.6" stroke="#22cc22" stroke-width="3.0" stroke-opacity="0.36"/><path d="M64.9 -75.0A99.0 99.0 0 0 1 68.8 -70.9" stroke="#22cc22" stroke-width="3.0" stroke-opacity="0.27"/><path d="M68.4 -71.2A98.6 98.6 0 0 1 72.1 -66.9" stroke="#22cc22" stroke-width="3.0" stroke-opacity="0.19"/><path d="M71.8 -67.3A98.2 98.2 0 0 1 75.2 -62.8" stroke="#22cc22" stroke-width="3.0" stroke-opacity="0.14"/><path d="M74.9 -63.2A97.8 97.8 0 0 1 78.1 -58.5" stroke="#22cc22" stroke-width="3.0" stroke-opacity="0.10"/><path d="M77.8 -58.9A97.4 97.4 0 0 1 80.7 -54.1" stroke="#22cc22" stroke-width="3.0" stroke-opacity="0.08"/><path d="M80.4 -54.6A97.0 97.0 0 0 1 83.1 -49.6" stroke="#22cc22" stroke-width="3.0" stroke-opacity="0.07"/><path d="M82.9 -50.1A96.6 96.6 0 0 1 85.2 -45.0" stroke="#22cc22" stroke-width="3.0" stroke-opacity="0.07"/><path d="M85.0 -45.5A96.2 96.2 0 0 1 87.1 -40.3" stroke="#22cc22" stroke-width="3.0" stroke-opacity="0.06"/><path d="M86.9 -40.8A96.0 96.0 0 0 1 89.0 -35.7" stroke="#22cc22" stroke-width="3.0" stroke-opacity="0.06"/><path d="M88.8 -36.2A95.9 95.9 0 0 1 90.7 -31.0" stroke="#22cc22" stroke-width="3.0" stroke-opacity="0.06"/><path d="M90.5 -31.4A95.8 95.8 0 0 1 92.1 -26.1" stroke="#22cc22" stroke-width="3.0" stroke-opacity="0.06"/><path d="M92.0 -26.6A95.7 95.7 0 0 1 93.3 -21.3" stroke="#22cc22" stroke-width="3.0" stroke-opacity="0.03"/><path d="M-138.4 12.5A139.0 139.0 0 0 1 -138.9 4.5" stroke="#22cc22" stroke-width="3.2" stroke-opacity="0.04"/><path d="M-138.9 5.2A139.0 139.0 0 0 1 -139.0 -2.8" stroke="#22cc22" stroke-width="3.2" stroke-opacity="0.06"/><path d="M-139.0 -2.1A139.0 139.0 0 0 1 -138.6 -10.1" stroke="#22cc22" stroke-width="3.2" stroke-opacity="0.08"/><path d="M-138.7 -9.3A139.0 139.0 0 0 1 -137.9 -17.3" stroke="#22cc22" stroke-width="3.2" stroke-opacity="0.13"/><path d="M-138.0 -16.6A139.0 139.0 0 0 1 -136.8 -24.5" stroke="#22cc22" stroke-width="3.2" stroke-opacity="0.21"/><path d="M-137.0 -23.8A139.0 139.0 0 0 1 -135.4 -31.6" stroke="#22cc22" stroke-width="3.2" stroke-opacity="0.33"/><path d="M-135.5 -30.9A139.0 139.0 0 0 1 -133.5 -38.7" stroke="#22cc22" stroke-width="3.2" stroke-opacity="0.47"/><path d="M-133.7 -38.0A139.0 139.0 0 0 1 -131.3 -45.6" stroke="#22cc22" stroke-width="3.2" stroke-opacity="0.62"/><path d="M-131.5 -44.9A139.0 139.0 0 0 1 -128.7 -52.4" stroke="#22cc22" stroke-width="3.2" stroke-opacity="0.72"/><path d="M-129.0 -51.7A139.0 139.0 0 0 1 -125.8 -59.1" stroke="#22cc22" stroke-width="3.2" stroke-opacity="0.75"/><path d="M-126.1 -58.4A139.0 139.0 0 0 1 -122.6 -65.6" stroke="#22cc22" stroke-width="3.2" stroke-opacity="0.69"/><path d="M-122.9 -64.9A139.0 139.0 0 0 1 -119.0 -71.9" stroke="#22cc22" stroke-width="3.2" stroke-opacity="0.57"/><path d="M-119.3 -71.3A139.0 139.0 0 0 1 -115.0 -78.0" stroke="#22cc22" stroke-width="3.2" stroke-opacity="0.42"/><path d="M-115.4 -77.4A139.0 139.0 0 0 1 -110.8 -83.9" stroke="#22cc22" stroke-width="3.2" stroke-opacity="0.28"/><path d="M-111.2 -83.4A139.0 139.0 0 0 1 -106.2 -89.6" stroke="#22cc22" stroke-width="3.2" stroke-opacity="0.18"/><path d="M-106.7 -89.1A139.0 139.0 0 0 1 -101.4 -95.1" stroke="#22cc22" stroke-width="3.2" stroke-opacity="0.08"/><path d="M-101.9 -94.5A139.0 139.0 0 0 1 -96.3 -100.2" stroke="#22cc22" stroke-width="3.2" stroke-opacity="0.02"/><path d="M-5.7 41.3A41.6 41.6 0 0 1 -8.0 40.7" stroke="#22cc22" stroke-width="3.8" stroke-opacity="0.03"/><path d="M-7.8 40.7A41.3 41.3 0 0 1 -10.1 39.9" stroke="#22cc22" stroke-width="3.8" stroke-opacity="0.10"/><path d="M-9.9 40.0A41.0 41.0 0 0 1 -12.1 39.1" stroke="#22cc22" stroke-width="3.8" stroke-opacity="0.13"/><path d="M-11.9 39.2A40.8 40.8 0 0 1 -14.0 38.1" stroke="#22cc22" stroke-width="3.8" stroke-opacity="0.13"/><path d="M-13.8 38.2A40.5 40.5 0 0 1 -15.9 37.1" stroke="#22cc22" stroke-width="3.8" stroke-opacity="0.13"/><path d="M-15.7 37.2A40.2 40.2 0 0 1 -17.7 36.0" stroke="#22cc22" stroke-width="3.8" stroke-opacity="0.14"/><path d="M-17.5 36.1A40.0 40.0 0 0 1 -19.4 34.8" stroke="#22cc22" stroke-width="3.8" stroke-opacity="0.16"/><path d="M-19.2 34.9A39.7 39.7 0 0 1 -21.0 33.5" stroke="#22cc22" stroke-width="3.8" stroke-opacity="0.19"/><path d="M-20.9 33.6A39.4 39.4 0 0 1 -22.6 32.1" stroke="#22cc22" stroke-width="3.8" stroke-opacity="0.25"/><path d="M-22.4 32.2A39.1 39.1 0 0 1 -24.1 30.7" stroke="#22cc22" stroke-width="3.8" stroke-opacity="0.34"/><path d="M-23.9 30.8A38.9 38.9 0 0 1 -25.5 29.2" stroke="#22cc22" stroke-width="3.8" stroke-opacity="0.46"/><path d="M-25.3 29.3A38.6 38.6 0 0 1 -26.8 27.6" stroke="#22cc22" stroke-width="3.8" stroke-opacity="0.60"/><path d="M-26.6 27.7A38.3 38.3 0 0 1 -28.0 26.0" stroke="#22cc22" stroke-width="3.8" stroke-opacity="0.73"/><path d="M-27.9 26.1A38.0 38.0 0 0 1 -29.1 24.3" stroke="#22cc22" stroke-width="3.8" stroke-opacity="0.82"/><path d="M-29.0 24.5A37.8 37.8 0 0 1 -30.1 22.6" stroke="#22cc22" stroke-width="3.8" stroke-opacity="0.85"/><path d="M-30.0 22.7A37.5 37.5 0 0 1 -31.0 20.8" stroke="#22cc22" stroke-width="3.8" stroke-opacity="0.80"/><path d="M-30.9 21.0A37.2 37.2 0 0 1 -31.8 19.0" stroke="#22cc22" stroke-width="3.8" stroke-opacity="0.69"/><path d="M-31.8 19.2A37.0 37.0 0 0 1 -32.7 17.3" stroke="#22cc22" stroke-width="3.8" stroke-opacity="0.55"/><path d="M-32.6 17.5A37.0 37.0 0 0 1 -33.6 15.5" stroke="#22cc22" stroke-width="3.8" stroke-opacity="0.41"/><path d="M-33.5 15.7A37.0 37.0 0 0 1 -34.3 13.8" stroke="#22cc22" stroke-width="3.8" stroke-opacity="0.28"/><path d="M-34.3 14.0A37.0 37.0 0 0 1 -35.0 12.0" stroke="#22cc22" stroke-width="3.8" stroke-opacity="0.09"/><path d="M-35.0 12.1A37.0 37.0 0 0 1 -35.2 11.3" stroke="#22cc22" stroke-width="3.8" stroke-opacity="0.02"/><path d="M-6.2 45.1A45.5 45.5 0 0 1 -8.8 44.6" stroke="#1a9a1a" stroke-width="2.2" stroke-opacity="0.03"/><path d="M-8.6 44.7A45.5 45.5 0 0 1 -11.1 44.1" stroke="#1a9a1a" stroke-width="2.2" stroke-opacity="0.12"/><path d="M-10.9 44.2A45.5 45.5 0 0 1 -13.4 43.5" stroke="#1a9a1a" stroke-width="2.2" stroke-opacity="0.21"/><path d="M-13.2 43.5A45.5 45.5 0 0 1 -15.7 42.7" stroke="#1a9a1a" stroke-width="2.2" stroke-opacity="0.27"/><path d="M-15.4 42.8A45.5 45.5 0 0 1 -17.9 41.8" stroke="#1a9a1a" stroke-width="2.2" stroke-opacity="0.32"/><path d="M-17.7 41.9A45.5 45.5 0 0 1 -20.1 40.8" stroke="#1a9a1a" stroke-width="2.2" stroke-opacity="0.36"/><path d="M-19.8 40.9A45.5 45.5 0 0 1 -22.2 39.7" stroke="#1a9a1a" stroke-width="2.2" stroke-opacity="0.39"/><path d="M-22.0 39.9A45.5 45.5 0 0 1 -24.2 38.5" stroke="#1a9a1a" stroke-width="2.2" stroke-opacity="0.40"/><path d="M-24.0 38.6A45.5 45.5 0 0 1 -26.2 37.2" stroke="#1a9a1a" stroke-width="2.2" stroke-opacity="0.39"/><path d="M-26.0 37.3A45.5 45.5 0 0 1 -28.1 35.8" stroke="#1a9a1a" stroke-width="2.2" stroke-opacity="0.35"/><path d="M-27.9 35.9A45.5 45.5 0 0 1 -29.9 34.3" stroke="#1a9a1a" stroke-width="2.2" stroke-opacity="0.30"/><path d="M-29.8 34.4A45.5 45.5 0 0 1 -31.7 32.6" stroke="#1a9a1a" stroke-width="2.2" stroke-opacity="0.25"/><path d="M-31.5 32.8A45.5 45.5 0 0 1 -33.4 30.9" stroke="#1a9a1a" stroke-width="2.2" stroke-opacity="0.19"/><path d="M-33.2 31.1A45.5 45.5 0 0 1 -34.9 29.2" stroke="#1a9a1a" stroke-width="2.2" stroke-opacity="0.14"/><path d="M-34.8 29.3A45.5 45.5 0 0 1 -36.4 27.3" stroke="#1a9a1a" stroke-width="2.2" stroke-opacity="0.06"/><path d="M92.2 -77.8A120.3 120.3 0 0 1 96.1 -72.0" stroke="#1a9a1a" stroke-width="2.4" stroke-opacity="0.02"/><path d="M95.7 -72.5A119.8 119.8 0 0 1 99.3 -66.6" stroke="#1a9a1a" stroke-width="2.4" stroke-opacity="0.06"/><path d="M99.0 -67.1A119.3 119.3 0 0 1 102.1 -61.0" stroke="#1a9a1a" stroke-width="2.4" stroke-opacity="0.09"/><path d="M101.9 -61.6A118.7 118.7 0 0 1 104.7 -55.3" stroke="#1a9a1a" stroke-width="2.4" stroke-opacity="0.09"/><path d="M104.5 -55.9A118.2 118.2 0 0 1 107.0 -49.6" stroke="#1a9a1a" stroke-width="2.4" stroke-opacity="0.09"/><path d="M106.8 -50.1A117.7 117.7 0 0 1 109.0 -43.7" stroke="#1a9a1a" stroke-width="2.4" stroke-opacity="0.09"/><path d="M108.8 -44.3A117.1 117.1 0 0 1 110.6 -37.8" stroke="#1a9a1a" stroke-width="2.4" stroke-opacity="0.10"/><path d="M110.4 -38.3A116.6 116.6 0 0 1 111.9 -31.8" stroke="#1a9a1a" stroke-width="2.4" stroke-opacity="0.11"/><path d="M111.8 -32.4A116.1 116.1 0 0 1 112.9 -25.8" stroke="#1a9a1a" stroke-width="2.4" stroke-opacity="0.13"/><path d="M112.8 -26.4A115.5 115.5 0 0 1 113.6 -19.7" stroke="#1a9a1a" stroke-width="2.4" stroke-opacity="0.16"/><path d="M113.5 -20.3A115.0 115.0 0 0 1 113.9 -13.7" stroke="#1a9a1a" stroke-width="2.4" stroke-opacity="0.21"/><path d="M113.9 -14.3A114.5 114.5 0 0 1 113.9 -7.7" stroke="#1a9a1a" stroke-width="2.4" stroke-opacity="0.26"/><path d="M113.9 -8.3A113.9 113.9 0 0 1 113.6 -1.7" stroke="#1a9a1a" stroke-width="2.4" stroke-opacity="0.32"/><path d="M113.7 -2.3A113.5 113.5 0 0 1 113.3 4.3" stroke="#1a9a1a" stroke-width="2.4" stroke-opacity="0.38"/><path d="M113.4 3.7A113.3 113.3 0 0 1 112.8 10.2" stroke="#1a9a1a" stroke-width="2.4" stroke-opacity="0.44"/><path d="M112.9 9.6A113.2 113.2 0 0 1 112.0 16.0" stroke="#1a9a1a" stroke-width="2.4" stroke-opacity="0.47"/><path d="M112.1 15.5A113.1 113.1 0 0 1 110.9 21.9" stroke="#1a9a1a" stroke-width="2.4" stroke-opacity="0.48"/><path d="M111.0 21.3A113.0 113.0 0 0 1 109.5 27.6" stroke="#1a9a1a" stroke-width="2.4" stroke-opacity="0.46"/><path d="M109.6 27.0A112.8 112.8 0 0 1 107.8 33.3" stroke="#1a9a1a" stroke-width="2.4" stroke-opacity="0.42"/><path d="M107.9 32.7A112.7 112.7 0 0 1 105.7 38.8" stroke="#1a9a1a" stroke-width="2.4" stroke-opacity="0.36"/><path d="M106.0 38.3A112.6 112.6 0 0 1 103.4 44.2" stroke="#1a9a1a" stroke-width="2.4" stroke-opacity="0.30"/><path d="M103.7 43.7A112.5 112.5 0 0 1 100.9 49.5" stroke="#1a9a1a" stroke-width="2.4" stroke-opacity="0.24"/><path d="M101.1 49.0A112.3 112.3 0 0 1 98.0 54.7" stroke="#1a9a1a" stroke-width="2.4" stroke-opacity="0.19"/><path d="M98.3 54.2A112.2 112.2 0 0 1 94.9 59.7" stroke="#1a9a1a" stroke-width="2.4" stroke-opacity="0.15"/><path d="M95.3 59.2A112.1 112.1 0 0 1 91.6 64.5" stroke="#1a9a1a" stroke-width="2.4" stroke-opacity="0.12"/><path d="M91.9 64.0A112.0 112.0 0 0 1 88.1 69.2" stroke="#1a9a1a" stroke-width="2.4" stroke-opacity="0.06"/><path d="M88.4 68.7A112.0 112.0 0 0 1 85.6 72.2" stroke="#1a9a1a" stroke-width="2.4" stroke-opacity="0.02"/><path d="M71.0 151.2A167.0 167.0 0 0 1 62.2 155.0" stroke="#1a9a1a" stroke-width="2.4" stroke-opacity="0.02"/><path d="M63.0 154.7A167.0 167.0 0 0 1 54.0 158.0" stroke="#1a9a1a" stroke-width="2.4" stroke-opacity="0.06"/><path d="M54.8 157.8A167.0 167.0 0 0 1 45.6 160.7" stroke="#1a9a1a" stroke-width="2.4" stroke-opacity="0.10"/><path d="M46.5 160.4A167.0 167.0 0 0 1 37.1 162.8" stroke="#1a9a1a" stroke-width="2.4" stroke-opacity="0.13"/><path d="M38.0 162.6A167.0 167.0 0 0 1 28.6 164.5" stroke="#1a9a1a" stroke-width="2.4" stroke-opacity="0.17"/><path d="M29.4 164.4A167.0 167.0 0 0 1 19.9 165.8" stroke="#1a9a1a" stroke-width="2.4" stroke-opacity="0.21"/><path d="M20.8 165.7A167.0 167.0 0 0 1 11.2 166.6" stroke="#1a9a1a" stroke-width="2.4" stroke-opacity="0.25"/><path d="M12.1 166.6A167.0 167.0 0 0 1 2.5 167.0" stroke="#1a9a1a" stroke-width="2.4" stroke-opacity="0.29"/><path d="M3.4 167.0A167.0 167.0 0 0 1 -6.3 166.9" stroke="#1a9a1a" stroke-width="2.4" stroke-opacity="0.30"/><path d="M-5.4 166.9A167.0 167.0 0 0 1 -15.0 166.3" stroke="#1a9a1a" stroke-width="2.4" stroke-opacity="0.29"/><path d="M-14.1 166.4A167.0 167.0 0 0 1 -23.7 165.3" stroke="#1a9a1a" stroke-width="2.4" stroke-opacity="0.27"/><path d="M-22.8 165.4A167.0 167.0 0 0 1 -32.3 163.8" stroke="#1a9a1a" stroke-width="2.4" stroke-opacity="0.23"/><path d="M-31.4 164.0A167.0 167.0 0 0 1 -40.8 161.9" stroke="#1a9a1a" stroke-width="2.4" stroke-opacity="0.18"/><path d="M-40.0 162.1A167.0 167.0 0 0 1 -49.2 159.6" stroke="#1a9a1a" stroke-width="2.4" stroke-opacity="0.14"/><path d="M-48.4 159.8A167.0 167.0 0 0 1 -57.5 156.8" stroke="#1a9a1a" stroke-width="2.4" stroke-opacity="0.11"/><path d="M-56.7 157.1A167.0 167.0 0 0 1 -65.7 153.6" stroke="#1a9a1a" stroke-width="2.4" stroke-opacity="0.09"/><path d="M-64.8 153.9A167.0 167.0 0 0 1 -73.6 149.9" stroke="#1a9a1a" stroke-width="2.4" stroke-opacity="0.07"/><path d="M-72.8 150.3A167.0 167.0 0 0 1 -81.3 145.8" stroke="#1a9a1a" stroke-width="2.4" stroke-opacity="0.03"/><path d="M56.3 182.5A191.0 191.0 0 0 1 45.7 185.4" stroke="#1a9a1a" stroke-width="2.2" stroke-opacity="0.05"/><path d="M46.7 185.2A191.0 191.0 0 0 1 36.0 187.6" stroke="#1a9a1a" stroke-width="2.2" stroke-opacity="0.08"/><path d="M36.9 187.4A191.0 191.0 0 0 1 26.1 189.2" stroke="#1a9a1a" stroke-width="2.2" stroke-opacity="0.09"/><path d="M27.1 189.1A191.0 191.0 0 0 1 16.1 190.3" stroke="#1a9a1a" stroke-width="2.2" stroke-opacity="0.11"/><path d="M17.1 190.2A191.0 191.0 0 0 1 6.2 190.9" stroke="#1a9a1a" stroke-width="2.2" stroke-opacity="0.12"/><path d="M7.2 190.9A191.0 191.0 0 0 1 -3.8 191.0" stroke="#1a9a1a" stroke-width="2.2" stroke-opacity="0.13"/><path d="M-2.8 191.0A191.0 191.0 0 0 1 -13.8 190.5" stroke="#1a9a1a" stroke-width="2.2" stroke-opacity="0.14"/><path d="M-12.8 190.6A191.0 191.0 0 0 1 -23.8 189.5" stroke="#1a9a1a" stroke-width="2.2" stroke-opacity="0.14"/><path d="M-22.8 189.6A191.0 191.0 0 0 1 -33.7 188.0" stroke="#1a9a1a" stroke-width="2.2" stroke-opacity="0.14"/><path d="M-32.7 188.2A191.0 191.0 0 0 1 -43.5 186.0" stroke="#1a9a1a" stroke-width="2.2" stroke-opacity="0.13"/><path d="M-42.5 186.2A191.0 191.0 0 0 1 -53.1 183.5" stroke="#1a9a1a" stroke-width="2.2" stroke-opacity="0.12"/><path d="M-52.2 183.7A191.0 191.0 0 0 1 -62.7 180.4" stroke="#1a9a1a" stroke-width="2.2" stroke-opacity="0.10"/><path d="M-61.7 180.8A191.0 191.0 0 0 1 -72.0 176.9" stroke="#1a9a1a" stroke-width="2.2" stroke-opacity="0.09"/><path d="M-71.1 177.3A191.0 191.0 0 0 1 -81.2 172.9" stroke="#1a9a1a" stroke-width="2.2" stroke-opacity="0.08"/><path d="M-80.3 173.3A191.0 191.0 0 0 1 -90.1 168.4" stroke="#1a9a1a" stroke-width="2.2" stroke-opacity="0.07"/><path d="M-89.2 168.9A191.0 191.0 0 0 1 -98.8 163.5" stroke="#1a9a1a" stroke-width="2.2" stroke-opacity="0.05"/><path d="M-97.9 164.0A191.0 191.0 0 0 1 -107.2 158.1" stroke="#1a9a1a" stroke-width="2.2" stroke-opacity="0.02"/><path d="M137.7 -97.0A168.4 168.4 0 0 1 143.0 -88.9" stroke="#1a9a1a" stroke-width="2.2" stroke-opacity="0.02"/><path d="M142.6 -89.6A168.4 168.4 0 0 1 147.5 -81.3" stroke="#1a9a1a" stroke-width="2.2" stroke-opacity="0.07"/><path d="M147.1 -82.0A168.4 168.4 0 0 1 151.5 -73.4" stroke="#1a9a1a" stroke-width="2.2" stroke-opacity="0.10"/><path d="M151.2 -74.2A168.4 168.4 0 0 1 155.2 -65.4" stroke="#1a9a1a" stroke-width="2.2" stroke-opacity="0.11"/><path d="M154.8 -66.2A168.4 168.4 0 0 1 158.4 -57.2" stroke="#1a9a1a" stroke-width="2.2" stroke-opacity="0.12"/><path d="M158.1 -58.0A168.4 168.4 0 0 1 161.2 -48.8" stroke="#1a9a1a" stroke-width="2.2" stroke-opacity="0.13"/><path d="M160.9 -49.7A168.4 168.4 0 0 1 163.5 -40.3" stroke="#1a9a1a" stroke-width="2.2" stroke-opacity="0.14"/><path d="M163.3 -41.2A168.4 168.4 0 0 1 165.4 -31.7" stroke="#1a9a1a" stroke-width="2.2" stroke-opacity="0.15"/><path d="M165.2 -32.6A168.4 168.4 0 0 1 166.8 -23.0" stroke="#1a9a1a" stroke-width="2.2" stroke-opacity="0.16"/><path d="M166.7 -23.9A168.4 168.4 0 0 1 167.8 -14.2" stroke="#1a9a1a" stroke-width="2.2" stroke-opacity="0.16"/><path d="M167.7 -15.1A168.4 168.4 0 0 1 168.3 -5.4" stroke="#1a9a1a" stroke-width="2.2" stroke-opacity="0.16"/><path d="M168.3 -6.3A168.4 168.4 0 0 1 168.4 3.4" stroke="#1a9a1a" stroke-width="2.2" stroke-opacity="0.16"/><path d="M168.4 2.5A168.4 168.4 0 0 1 168.0 12.2" stroke="#1a9a1a" stroke-width="2.2" stroke-opacity="0.15"/><path d="M168.0 11.3A168.4 168.4 0 0 1 167.1 21.0" stroke="#1a9a1a" stroke-width="2.2" stroke-opacity="0.14"/><path d="M167.2 20.1A168.4 168.4 0 0 1 165.8 29.7" stroke="#1a9a1a" stroke-width="2.2" stroke-opacity="0.13"/><path d="M165.9 28.8A168.4 168.4 0 0 1 164.0 38.3" stroke="#1a9a1a" stroke-width="2.2" stroke-opacity="0.12"/><path d="M164.2 37.5A168.4 168.4 0 0 1 161.8 46.8" stroke="#1a9a1a" stroke-width="2.2" stroke-opacity="0.11"/><path d="M162.0 46.0A168.4 168.4 0 0 1 159.1 55.2" stroke="#1a9a1a" stroke-width="2.2" stroke-opacity="0.10"/><path d="M159.4 54.4A168.4 168.4 0 0 1 156.0 63.5" stroke="#1a9a1a" stroke-width="2.2" stroke-opacity="0.07"/><path d="M156.3 62.7A168.4 168.4 0 0 1 152.4 71.6" stroke="#1a9a1a" stroke-width="2.2" stroke-opacity="0.02"/><path d="M113.2 -85.8A142.0 142.0 0 0 1 117.9 -79.1" stroke="#1a9a1a" stroke-width="2.2" stroke-opacity="0.05"/><path d="M117.5 -79.7A142.0 142.0 0 0 1 121.9 -72.8" stroke="#1a9a1a" stroke-width="2.2" stroke-opacity="0.08"/><path d="M121.5 -73.5A142.0 142.0 0 0 1 125.6 -66.3" stroke="#1a9a1a" stroke-width="2.2" stroke-opacity="0.09"/><path d="M125.2 -67.0A142.0 142.0 0 0 1 128.9 -59.7" stroke="#1a9a1a" stroke-width="2.2" stroke-opacity="0.10"/><path d="M128.5 -60.3A142.0 142.0 0 0 1 131.8 -52.8" stroke="#1a9a1a" stroke-width="2.2" stroke-opacity="0.11"/><path d="M131.5 -53.5A142.0 142.0 0 0 1 134.4 -45.9" stroke="#1a9a1a" stroke-width="2.2" stroke-opacity="0.11"/><path d="M134.1 -46.6A142.0 142.0 0 0 1 136.6 -38.8" stroke="#1a9a1a" stroke-width="2.2" stroke-opacity="0.12"/><path d="M136.4 -39.5A142.0 142.0 0 0 1 138.4 -31.6" stroke="#1a9a1a" stroke-width="2.2" stroke-opacity="0.12"/><path d="M138.3 -32.3A142.0 142.0 0 0 1 139.9 -24.3" stroke="#1a9a1a" stroke-width="2.2" stroke-opacity="0.12"/><path d="M139.8 -25.0A142.0 142.0 0 0 1 141.0 -16.9" stroke="#1a9a1a" stroke-width="2.2" stroke-opacity="0.11"/><path d="M140.9 -17.7A142.0 142.0 0 0 1 141.7 -9.5" stroke="#1a9a1a" stroke-width="2.2" stroke-opacity="0.10"/><path d="M141.6 -10.3A142.0 142.0 0 0 1 142.0 -2.1" stroke="#1a9a1a" stroke-width="2.2" stroke-opacity="0.09"/><path d="M142.0 -2.8A142.0 142.0 0 0 1 141.9 5.3" stroke="#1a9a1a" stroke-width="2.2" stroke-opacity="0.08"/><path d="M141.9 4.6A142.0 142.0 0 0 1 141.4 12.7" stroke="#1a9a1a" stroke-width="2.2" stroke-opacity="0.07"/><path d="M141.5 12.0A142.0 142.0 0 0 1 140.6 20.1" stroke="#1a9a1a" stroke-width="2.2" stroke-opacity="0.04"/><path d="M-92.7 25.1A96.0 96.0 0 0 1 -94.0 19.7" stroke="#1a9a1a" stroke-width="2.5" stroke-opacity="0.02"/><path d="M-93.8 20.2A96.0 96.0 0 0 1 -94.9 14.8" stroke="#1a9a1a" stroke-width="2.5" stroke-opacity="0.06"/><path d="M-94.8 15.3A96.0 96.0 0 0 1 -95.5 9.8" stroke="#1a9a1a" stroke-width="2.5" stroke-opacity="0.09"/><path d="M-95.4 10.3A96.0 96.0 0 0 1 -95.9 4.8" stroke="#1a9a1a" stroke-width="2.5" stroke-opacity="0.11"/><path d="M-95.9 5.3A96.0 96.0 0 0 1 -96.0 -0.3" stroke="#1a9a1a" stroke-width="2.5" stroke-opacity="0.13"/><path d="M-96.0 0.3A96.0 96.0 0 0 1 -95.9 -5.3" stroke="#1a9a1a" stroke-width="2.5" stroke-opacity="0.15"/><path d="M-95.9 -4.8A96.0 96.0 0 0 1 -95.4 -10.3" stroke="#1a9a1a" stroke-width="2.5" stroke-opacity="0.17"/><path d="M-95.5 -9.8A96.0 96.0 0 0 1 -94.8 -15.3" stroke="#1a9a1a" stroke-width="2.5" stroke-opacity="0.19"/><path d="M-94.9 -14.8A96.0 96.0 0 0 1 -93.8 -20.2" stroke="#1a9a1a" stroke-width="2.5" stroke-opacity="0.20"/><path d="M-94.0 -19.7A96.0 96.0 0 0 1 -92.7 -25.1" stroke="#1a9a1a" stroke-width="2.5" stroke-opacity="0.20"/><path d="M-92.8 -24.6A96.0 96.0 0 0 1 -91.2 -29.9" stroke="#1a9a1a" stroke-width="2.5" stroke-opacity="0.19"/><path d="M-91.4 -29.4A96.0 96.0 0 0 1 -89.5 -34.6" stroke="#1a9a1a" stroke-width="2.5" stroke-opacity="0.17"/><path d="M-89.7 -34.2A96.0 96.0 0 0 1 -87.6 -39.3" stroke="#1a9a1a" stroke-width="2.5" stroke-opacity="0.15"/><path d="M-87.8 -38.8A96.0 96.0 0 0 1 -85.4 -43.8" stroke="#1a9a1a" stroke-width="2.5" stroke-opacity="0.13"/><path d="M-85.7 -43.4A96.0 96.0 0 0 1 -83.0 -48.2" stroke="#1a9a1a" stroke-width="2.5" stroke-opacity="0.11"/><path d="M-83.3 -47.8A96.0 96.0 0 0 1 -80.4 -52.5" stroke="#1a9a1a" stroke-width="2.5" stroke-opacity="0.09"/><path d="M-80.6 -52.1A96.0 96.0 0 0 1 -77.5 -56.6" stroke="#1a9a1a" stroke-width="2.5" stroke-opacity="0.07"/><path d="M-77.8 -56.2A96.0 96.0 0 0 1 -74.4 -60.6" stroke="#1a9a1a" stroke-width="2.5" stroke-opacity="0.03"/><path d="M-61.2 18.9A64.0 64.0 0 0 1 -62.1 15.3" stroke="#1a9a1a" stroke-width="2.5" stroke-opacity="0.05"/><path d="M-62.1 15.6A64.0 64.0 0 0 1 -62.9 12.0" stroke="#1a9a1a" stroke-width="2.5" stroke-opacity="0.08"/><path d="M-62.8 12.4A64.0 64.0 0 0 1 -63.4 8.7" stroke="#1a9a1a" stroke-width="2.5" stroke-opacity="0.09"/><path d="M-63.4 9.1A64.0 64.0 0 0 1 -63.8 5.4" stroke="#1a9a1a" stroke-width="2.5" stroke-opacity="0.11"/><path d="M-63.7 5.7A64.0 64.0 0 0 1 -64.0 2.1" stroke="#1a9a1a" stroke-width="2.5" stroke-opacity="0.13"/><path d="M-64.0 2.4A64.0 64.0 0 0 1 -64.0 -1.3" stroke="#1a9a1a" stroke-width="2.5" stroke-opacity="0.14"/><path d="M-64.0 -0.9A64.0 64.0 0 0 1 -63.8 -4.6" stroke="#1a9a1a" stroke-width="2.5" stroke-opacity="0.15"/><path d="M-63.9 -4.3A64.0 64.0 0 0 1 -63.5 -8.0" stroke="#1a9a1a" stroke-width="2.5" stroke-opacity="0.15"/><path d="M-63.5 -7.6A64.0 64.0 0 0 1 -63.0 -11.3" stroke="#1a9a1a" stroke-width="2.5" stroke-opacity="0.15"/><path d="M-63.1 -10.9A64.0 64.0 0 0 1 -62.3 -14.6" stroke="#1a9a1a" stroke-width="2.5" stroke-opacity="0.14"/><path d="M-62.4 -14.2A64.0 64.0 0 0 1 -61.5 -17.8" stroke="#1a9a1a" stroke-width="2.5" stroke-opacity="0.12"/><path d="M-61.6 -17.5A64.0 64.0 0 0 1 -60.5 -21.0" stroke="#1a9a1a" stroke-width="2.5" stroke-opacity="0.10"/><path d="M-60.6 -20.7A64.0 64.0 0 0 1 -59.3 -24.1" stroke="#1a9a1a" stroke-width="2.5" stroke-opacity="0.09"/><path d="M-59.4 -23.8A64.0 64.0 0 0 1 -57.9 -27.2" stroke="#1a9a1a" stroke-width="2.5" stroke-opacity="0.07"/><path d="M-58.1 -26.9A64.0 64.0 0 0 1 -56.4 -30.2" stroke="#1a9a1a" stroke-width="2.5" stroke-opacity="0.03"/><path d="M13.8 -100.1A101.0 101.0 0 0 1 19.5 -99.1" stroke="#3cf03c" stroke-width="1.6" stroke-opacity="0.03"/><path d="M19.0 -99.2A101.0 101.0 0 0 1 24.7 -97.9" stroke="#3cf03c" stroke-width="1.6" stroke-opacity="0.14"/><path d="M24.2 -98.1A101.0 101.0 0 0 1 29.8 -96.5" stroke="#3cf03c" stroke-width="1.6" stroke-opacity="0.29"/><path d="M29.3 -96.7A101.0 101.0 0 0 1 34.8 -94.8" stroke="#3cf03c" stroke-width="1.6" stroke-opacity="0.41"/><path d="M34.3 -95.0A101.0 101.0 0 0 1 39.7 -92.9" stroke="#3cf03c" stroke-width="1.6" stroke-opacity="0.51"/><path d="M39.2 -93.1A101.0 101.0 0 0 1 44.5 -90.7" stroke="#3cf03c" stroke-width="1.6" stroke-opacity="0.55"/><path d="M44.0 -90.9A100.9 100.9 0 0 1 49.1 -88.0" stroke="#3cf03c" stroke-width="1.6" stroke-opacity="0.53"/><path d="M48.6 -88.3A100.5 100.5 0 0 1 53.4 -84.9" stroke="#3cf03c" stroke-width="1.6" stroke-opacity="0.45"/><path d="M53.0 -85.3A100.1 100.1 0 0 1 57.5 -81.7" stroke="#3cf03c" stroke-width="1.6" stroke-opacity="0.33"/><path d="M57.1 -82.0A99.8 99.8 0 0 1 61.5 -78.3" stroke="#3cf03c" stroke-width="1.6" stroke-opacity="0.22"/><path d="M61.1 -78.6A99.4 99.4 0 0 1 65.2 -74.6" stroke="#3cf03c" stroke-width="1.6" stroke-opacity="0.13"/><path d="M64.9 -75.0A99.0 99.0 0 0 1 68.8 -70.9" stroke="#3cf03c" stroke-width="1.6" stroke-opacity="0.06"/><path d="M-136.8 -26.2A139.3 139.3 0 0 1 -135.1 -34.1" stroke="#3cf03c" stroke-width="1.6" stroke-opacity="0.05"/><path d="M-135.2 -33.3A139.3 139.3 0 0 1 -133.1 -41.1" stroke="#3cf03c" stroke-width="1.6" stroke-opacity="0.18"/><path d="M-133.3 -40.4A139.3 139.3 0 0 1 -130.8 -48.0" stroke="#3cf03c" stroke-width="1.6" stroke-opacity="0.34"/><path d="M-131.0 -47.3A139.3 139.3 0 0 1 -128.1 -54.8" stroke="#3cf03c" stroke-width="1.6" stroke-opacity="0.50"/><path d="M-128.4 -54.1A139.3 139.3 0 0 1 -125.0 -61.4" stroke="#3cf03c" stroke-width="1.6" stroke-opacity="0.55"/><path d="M-125.4 -60.7A139.3 139.3 0 0 1 -121.7 -67.9" stroke="#3cf03c" stroke-width="1.6" stroke-opacity="0.45"/><path d="M-122.0 -67.2A139.3 139.3 0 0 1 -117.9 -74.1" stroke="#3cf03c" stroke-width="1.6" stroke-opacity="0.28"/><path d="M-118.3 -73.5A139.3 139.3 0 0 1 -113.9 -80.2" stroke="#3cf03c" stroke-width="1.6" stroke-opacity="0.10"/><path d="M-22.4 32.2A39.1 39.1 0 0 1 -24.1 30.7" stroke="#3cf03c" stroke-width="2.0" stroke-opacity="0.02"/><path d="M-23.9 30.8A38.9 38.9 0 0 1 -25.5 29.2" stroke="#3cf03c" stroke-width="2.0" stroke-opacity="0.08"/><path d="M-25.3 29.3A38.6 38.6 0 0 1 -26.8 27.6" stroke="#3cf03c" stroke-width="2.0" stroke-opacity="0.21"/><path d="M-26.6 27.7A38.3 38.3 0 0 1 -28.0 26.0" stroke="#3cf03c" stroke-width="2.0" stroke-opacity="0.40"/><path d="M-27.9 26.1A38.0 38.0 0 0 1 -29.1 24.3" stroke="#3cf03c" stroke-width="2.0" stroke-opacity="0.62"/><path d="M-29.0 24.5A37.8 37.8 0 0 1 -30.1 22.6" stroke="#3cf03c" stroke-width="2.0" stroke-opacity="0.78"/><path d="M-30.0 22.7A37.5 37.5 0 0 1 -31.0 20.8" stroke="#3cf03c" stroke-width="2.0" stroke-opacity="0.78"/><path d="M-30.9 21.0A37.2 37.2 0 0 1 -31.8 19.0" stroke="#3cf03c" stroke-width="2.0" stroke-opacity="0.62"/><path d="M-31.8 19.2A37.0 37.0 0 0 1 -32.7 17.3" stroke="#3cf03c" stroke-width="2.0" stroke-opacity="0.40"/><path d="M-32.6 17.5A37.0 37.0 0 0 1 -33.6 15.5" stroke="#3cf03c" stroke-width="2.0" stroke-opacity="0.15"/><path d="M-33.5 15.7A37.0 37.0 0 0 1 -34.3 13.8" stroke="#3cf03c" stroke-width="2.0" stroke-opacity="0.02"/></g>
<circle r="18" fill="#168016" fill-opacity="0.45" filter="url(#b2a)"/>
<circle r="11" stroke="#2ad82a" stroke-width="9" stroke-opacity="0.97" filter="url(#b0a)"/>
<circle r="11" stroke="#55f555" stroke-width="4" stroke-opacity="0.5" filter="url(#b1a)"/>
<circle r="9.0" stroke="#0c3a0c" stroke-width="0.9" stroke-opacity="0.85"/>
<circle r="12.2" stroke="#0c3a0c" stroke-width="0.9" stroke-opacity="0.85"/>
<circle r="5.8" fill="#12240f"/>
<circle r="2.6" fill="#333"/>
</g>
<circle r="208.9" fill="none" stroke="#000" stroke-opacity="0.55" stroke-width="1.4"/>
<path d="M0 0L-29.76 -207.78A209.5 209.5 0 0 1 -0.00 -209.90Z" fill="#4d4d4d"/>
<g stroke="#2b2b2b" stroke-opacity="0.72" stroke-width="1.05" fill="none">
<path d="M0 0L0.00 -208.00"/>
<path d="M0 0L53.83 -200.91"/>
<path d="M0 0L104.00 -180.13"/>
<path d="M0 0L147.08 -147.08"/>
<path d="M0 0L180.13 -104.00"/>
<path d="M0 0L200.91 -53.83"/>
<path d="M0 0L208.00 -0.00"/>
<path d="M0 0L200.91 53.83"/>
<path d="M0 0L180.13 104.00"/>
<path d="M0 0L147.08 147.08"/>
<path d="M0 0L104.00 180.13"/>
<path d="M0 0L53.83 200.91"/>
<path d="M0 0L0.00 208.00"/>
<path d="M0 0L-53.83 200.91"/>
<path d="M0 0L-104.00 180.13"/>
<path d="M0 0L-147.08 147.08"/>
<path d="M0 0L-180.13 104.00"/>
<path d="M0 0L-200.91 53.83"/>
<path d="M0 0L-208.00 0.00"/>
<path d="M0 0L-200.91 -53.83"/>
<path d="M0 0L-180.13 -104.00"/>
<path d="M0 0L-147.08 -147.08"/>
<path d="M0 0L-104.00 -180.13"/>
<path d="M0 0L-53.83 -200.91"/>
<circle r="52.00"/>
<circle r="104.00"/>
<circle r="156.00"/>
</g>
<circle r="209.1" fill="none" stroke="#141414" stroke-opacity="0.75" stroke-width="1.2"/>
<circle cx="-189.6" cy="-89.2" r="2.1" fill="#0b820b"/>
<g font-family="Liberation Sans, sans-serif" font-size="9" fill="#b6b6b6" text-anchor="middle">
<text x="-0.7" y="-220.9">0°</text>
<text x="56.4" y="-213.4">15°</text>
<text x="109.5" y="-191.4">30°</text>
<text x="155.2" y="-156.3">45°</text>
<text x="190.3" y="-110.7">60°</text>
<text x="212.3" y="-57.5">75°</text>
<text x="219.8" y="-0.4">90°</text>
<text x="212.3" y="56.7">105°</text>
<text x="190.3" y="109.8">120°</text>
<text x="155.2" y="155.5">135°</text>
<text x="109.5" y="190.6">150°</text>
<text x="56.4" y="212.6">165°</text>
<text x="-0.7" y="220.1">180°</text>
<text x="-57.8" y="212.6">195°</text>
<text x="-111.0" y="190.6">210°</text>
<text x="-156.6" y="155.5">225°</text>
<text x="-191.7" y="109.9">240°</text>
<text x="-213.7" y="56.7">255°</text>
<text x="-221.2" y="-0.4">270°</text>
<text x="-213.7" y="-57.5">285°</text>
<text x="-191.7" y="-110.7">300°</text>
<text x="-156.6" y="-156.3">315°</text>
<text x="-111.0" y="-191.4">330°</text>
<text x="-57.8" y="-213.4">345°</text>
</g>
<g font-family="Liberation Sans, sans-serif" font-size="9" fill="#c8c8c8" text-anchor="middle">
<text x="-0.5" y="-42.7" stroke="#1a1a1a" stroke-width="1" stroke-opacity="0.3" paint-order="stroke">2.4 m</text>
<text x="-0.5" y="-94.7" stroke="#1a1a1a" stroke-width="1" stroke-opacity="0.3" paint-order="stroke">4.8 m</text>
<text x="-0.5" y="-146.7" stroke="#1a1a1a" stroke-width="1" stroke-opacity="0.3" paint-order="stroke">7.2 m</text>
<text x="-0.5" y="-199.7" stroke="#1a1a1a" stroke-width="1" stroke-opacity="0.3" paint-order="stroke">9.6 m</text>
</g>
</svg></div>

<div class="lbl" style="left:7px;top:511px">Step</div>
<div class="sel" style="left:98px;top:508px;width:138px">Original Data</div>
<div class="lbl" style="left:282px;top:511px">Data</div>
<div class="sel" style="left:373px;top:508px;width:138px">Amplitude</div>
<div class="lbl" style="left:7px;top:533px">Min Range</div>
<div class="inp" style="left:98px;top:531px;width:138px"></div>
<div class="lbl" style="left:282px;top:533px">Max Range</div>
<div class="inp" style="left:373px;top:531px;width:138px"></div>
<div class="lbl" style="left:7px;top:556px">Auto</div>
<div class="chk" style="left:98.3px;top:556.3px"><svg width="12.4" height="12.4" viewBox="0 0 12.4 12.4"><path d="M3 6.4L5.6 8.9L9.7 4.5" stroke="#4a3826" stroke-width="1.7" fill="none"/></svg></div>
<div class="lbl" style="left:7px;top:578px">Min Amp</div>
<div class="val" style="left:98px;top:578px">8</div>
<div class="lbl" style="left:282px;top:578px">Max Amp</div>
<div class="val" style="left:373px;top:578px">45985.949</div>
<div class="lbl" style="left:7px;top:601px">Min Amp</div>
<div class="inp dis" style="left:98px;top:598px;width:138px"></div>
<div class="lbl" style="left:282px;top:601px">Max Amp</div>
<div class="inp dis" style="left:373px;top:598px;width:138px"></div>
<div class="btn" style="left:7px;top:630px;width:92px">Clear</div>
<div class="btn" style="left:99px;top:630px;width:92px">Redraw</div>

<!-- Panel 2 -->
<div class="panel" style="left:573px;top:6px;width:618px;height:655px">
  <div class="title">PPI Scope<svg width="11" height="9" viewBox="0 0 11 9"><path d="M2.6 0.9L7 8M9.6 0.8L0.8 7.8" stroke="#560000" stroke-width="2" fill="none"/></svg></div>
</div>
<div style="position:absolute;left:628px;top:30.5px;width:480px;height:470px"><svg class="radar" width="480" height="470" viewBox="-240 -241 480 470">
<defs><filter id="b1b" x="-20%" y="-20%" width="140%" height="140%"><feGaussianBlur stdDeviation="1.0"/></filter><filter id="b2b" x="-20%" y="-20%" width="140%" height="140%"><feGaussianBlur stdDeviation="2.6"/></filter><filter id="b0b" x="-20%" y="-20%" width="140%" height="140%"><feGaussianBlur stdDeviation="0.55"/></filter><clipPath id="cb"><circle r="209.5"/></clipPath>
<radialGradient id="gb" gradientUnits="userSpaceOnUse" cx="0" cy="0" r="209.5"><stop offset="0" stop-color="#000100"/><stop offset="0.3" stop-color="#010301"/><stop offset="0.55" stop-color="#020902"/><stop offset="0.8" stop-color="#041704"/><stop offset="1" stop-color="#062406"/></radialGradient>
</defs>
<circle r="209.5" fill="url(#gb)"/>
<g clip-path="url(#cb)" fill="none">
<g filter="url(#b0b)">
<path d="M157.1 126.8A201.9 201.9 0 0 1 -30.8 199.5" stroke="#1a8a1a" stroke-width="1.0" stroke-opacity="0.05"/>
<path d="M111.2 -141.7A180.2 180.2 0 0 1 170.8 -57.4" stroke="#000" stroke-width="1.5" stroke-opacity="0.20"/>
<path d="M-205.9 -27.0A207.6 207.6 0 0 1 -156.5 -136.5" stroke="#000" stroke-width="1.0" stroke-opacity="0.21"/>
<path d="M-103.3 9.6A103.8 103.8 0 0 1 -102.7 -14.9" stroke="#000" stroke-width="0.8" stroke-opacity="0.33"/>
<path d="M-147.6 -63.1A160.5 160.5 0 0 1 158.0 -28.3" stroke="#168016" stroke-width="1.2" stroke-opacity="0.07"/>
<path d="M-93.4 -29.7A98.0 98.0 0 0 1 -58.5 -78.6" stroke="#000" stroke-width="0.8" stroke-opacity="0.48"/>
<path d="M37.9 -151.7A156.3 156.3 0 0 1 117.8 -102.8" stroke="#168016" stroke-width="0.7" stroke-opacity="0.05"/>
<path d="M110.1 39.5A117.0 117.0 0 0 1 4.5 116.9" stroke="#168016" stroke-width="0.9" stroke-opacity="0.04"/>
<path d="M-179.4 49.5A186.1 186.1 0 0 1 -185.4 15.3" stroke="#000" stroke-width="1.4" stroke-opacity="0.29"/>
<path d="M-64.4 -180.5A191.7 191.7 0 0 1 86.4 -171.1" stroke="#000" stroke-width="1.2" stroke-opacity="0.39"/>
<path d="M94.6 -14.6A95.8 95.8 0 0 1 44.4 84.8" stroke="#1a8a1a" stroke-width="0.8" stroke-opacity="0.04"/>
<path d="M17.7 49.1A52.2 52.2 0 0 1 10.2 51.2" stroke="#000" stroke-width="1.5" stroke-opacity="0.46"/>
<path d="M77.6 7.0A77.9 77.9 0 0 1 65.5 42.1" stroke="#000" stroke-width="0.6" stroke-opacity="0.48"/>
<path d="M-28.7 155.7A158.3 158.3 0 0 1 -135.0 82.7" stroke="#0f6a0f" stroke-width="0.7" stroke-opacity="0.14"/>
<path d="M-56.2 -78.2A96.3 96.3 0 0 1 -30.6 -91.3" stroke="#000" stroke-width="1.0" stroke-opacity="0.48"/>
<path d="M-133.1 54.9A144.0 144.0 0 0 1 -135.8 -47.8" stroke="#000" stroke-width="1.5" stroke-opacity="0.51"/>
<path d="M132.8 42.1A139.3 139.3 0 0 1 -44.3 132.1" stroke="#168016" stroke-width="1.0" stroke-opacity="0.10"/>
<path d="M169.5 96.7A195.1 195.1 0 0 1 86.1 175.1" stroke="#1a8a1a" stroke-width="1.2" stroke-opacity="0.18"/>
<path d="M-148.0 60.2A159.7 159.7 0 0 1 -17.4 -158.8" stroke="#1a8a1a" stroke-width="0.9" stroke-opacity="0.05"/>
<path d="M70.8 43.8A83.3 83.3 0 0 1 -83.3 -0.3" stroke="#0f6a0f" stroke-width="0.9" stroke-opacity="0.04"/>
<path d="M50.0 -26.2A56.4 56.4 0 0 1 53.4 18.2" stroke="#168016" stroke-width="1.3" stroke-opacity="0.02"/>
<path d="M-134.2 54.1A144.7 144.7 0 0 1 -139.9 -37.0" stroke="#000" stroke-width="1.1" stroke-opacity="0.23"/>
<path d="M155.4 -23.1A157.1 157.1 0 0 1 109.0 113.1" stroke="#168016" stroke-width="1.6" stroke-opacity="0.09"/>
<path d="M66.8 17.9A69.2 69.2 0 0 1 -37.2 58.3" stroke="#0f6a0f" stroke-width="1.2" stroke-opacity="0.03"/>
<path d="M80.9 94.8A124.6 124.6 0 0 1 -16.8 123.5" stroke="#000" stroke-width="0.9" stroke-opacity="0.31"/>
<path d="M-130.8 50.8A140.3 140.3 0 0 1 56.2 -128.6" stroke="#0f6a0f" stroke-width="1.1" stroke-opacity="0.10"/>
<path d="M92.9 -97.8A134.9 134.9 0 0 1 131.9 -28.3" stroke="#1a8a1a" stroke-width="1.1" stroke-opacity="0.07"/>
<path d="M160.6 -2.4A160.6 160.6 0 0 1 154.0 45.7" stroke="#000" stroke-width="1.5" stroke-opacity="0.50"/>
<path d="M-82.8 190.5A207.8 207.8 0 0 1 -167.8 122.6" stroke="#1a8a1a" stroke-width="0.8" stroke-opacity="0.13"/>
<path d="M161.6 44.8A167.7 167.7 0 0 1 8.9 167.5" stroke="#1a8a1a" stroke-width="1.3" stroke-opacity="0.13"/>
<path d="M-73.9 2.0A73.9 73.9 0 0 1 -67.6 -29.8" stroke="#168016" stroke-width="0.7" stroke-opacity="0.03"/>
<path d="M-125.8 -165.7A208.1 208.1 0 0 1 35.5 -205.0" stroke="#000" stroke-width="0.9" stroke-opacity="0.44"/>
<path d="M106.6 55.9A120.4 120.4 0 0 1 -70.8 97.3" stroke="#1a8a1a" stroke-width="1.2" stroke-opacity="0.08"/>
<path d="M80.6 35.9A88.2 88.2 0 0 1 68.5 55.6" stroke="#000" stroke-width="1.0" stroke-opacity="0.50"/>
<path d="M-136.2 97.4A167.4 167.4 0 0 1 -164.7 30.2" stroke="#000" stroke-width="1.0" stroke-opacity="0.50"/>
<path d="M-139.2 117.8A182.3 182.3 0 0 1 -75.6 -166.0" stroke="#0f6a0f" stroke-width="1.6" stroke-opacity="0.11"/>
<path d="M-128.9 21.1A130.6 130.6 0 0 1 -125.7 -35.6" stroke="#0f6a0f" stroke-width="1.0" stroke-opacity="0.09"/>
<path d="M168.4 73.7A183.9 183.9 0 0 1 124.1 135.7" stroke="#000" stroke-width="0.7" stroke-opacity="0.27"/>
<path d="M30.9 -138.1A141.5 141.5 0 0 1 139.4 -23.9" stroke="#168016" stroke-width="1.6" stroke-opacity="0.12"/>
<path d="M-27.3 117.5A120.6 120.6 0 0 1 -114.8 -37.1" stroke="#0f6a0f" stroke-width="1.6" stroke-opacity="0.08"/>
<path d="M-142.3 89.1A167.9 167.9 0 0 1 -162.6 -41.7" stroke="#000" stroke-width="1.6" stroke-opacity="0.41"/>
<path d="M49.8 -132.9A141.9 141.9 0 0 1 98.2 -102.4" stroke="#000" stroke-width="1.0" stroke-opacity="0.49"/>
<path d="M-52.4 29.5A60.1 60.1 0 0 1 -59.4 -9.6" stroke="#000" stroke-width="1.3" stroke-opacity="0.54"/>
<path d="M-10.6 116.0A116.5 116.5 0 0 1 -28.2 113.0" stroke="#000" stroke-width="1.2" stroke-opacity="0.41"/>
<path d="M-122.3 99.3A157.5 157.5 0 0 1 -153.9 33.4" stroke="#000" stroke-width="0.7" stroke-opacity="0.22"/>
<path d="M100.7 70.5A122.9 122.9 0 0 1 -68.9 101.8" stroke="#168016" stroke-width="0.8" stroke-opacity="0.07"/>
<path d="M-200.5 -52.5A207.3 207.3 0 0 1 -153.1 -139.7" stroke="#000" stroke-width="1.1" stroke-opacity="0.30"/>
<path d="M-45.8 111.4A120.4 120.4 0 0 1 -93.2 -76.3" stroke="#1a8a1a" stroke-width="1.4" stroke-opacity="0.04"/>
<path d="M-13.2 -68.3A69.5 69.5 0 0 1 27.9 -63.7" stroke="#1a8a1a" stroke-width="1.5" stroke-opacity="0.03"/>
<path d="M12.0 81.7A82.6 82.6 0 0 1 -56.6 -60.1" stroke="#1a8a1a" stroke-width="0.6" stroke-opacity="0.04"/>
<path d="M-152.5 134.1A203.1 203.1 0 0 1 -199.1 40.1" stroke="#000" stroke-width="1.0" stroke-opacity="0.29"/>
<path d="M36.7 -33.7A49.8 49.8 0 0 1 20.7 45.3" stroke="#168016" stroke-width="1.3" stroke-opacity="0.02"/>
<path d="M-85.7 -172.3A192.4 192.4 0 0 1 62.8 -181.9" stroke="#000" stroke-width="0.9" stroke-opacity="0.46"/>
<path d="M46.8 -158.2A165.0 165.0 0 0 1 136.5 -92.6" stroke="#000" stroke-width="1.0" stroke-opacity="0.22"/>
<path d="M-19.2 50.7A54.2 54.2 0 0 1 -44.5 30.9" stroke="#000" stroke-width="1.5" stroke-opacity="0.20"/>
<path d="M-202.9 41.2A207.1 207.1 0 0 1 -200.4 -52.2" stroke="#000" stroke-width="0.9" stroke-opacity="0.37"/>
<path d="M50.4 -33.1A60.3 60.3 0 0 1 59.4 10.2" stroke="#000" stroke-width="0.7" stroke-opacity="0.31"/>
<path d="M-177.6 -69.7A190.8 190.8 0 0 1 23.5 -189.3" stroke="#1a8a1a" stroke-width="1.1" stroke-opacity="0.14"/>
<path d="M-131.2 -82.3A154.8 154.8 0 0 1 -29.3 -152.0" stroke="#000" stroke-width="1.4" stroke-opacity="0.41"/>
<path d="M82.9 -80.2A115.3 115.3 0 0 1 -19.4 113.7" stroke="#168016" stroke-width="1.5" stroke-opacity="0.07"/>
<path d="M-151.9 -17.5A152.9 152.9 0 0 1 -125.9 -86.9" stroke="#000" stroke-width="1.6" stroke-opacity="0.27"/>
<path d="M67.0 -42.8A79.5 79.5 0 0 1 77.7 17.0" stroke="#000" stroke-width="1.1" stroke-opacity="0.33"/>
<path d="M-156.4 -25.7A158.5 158.5 0 0 1 -118.9 -104.9" stroke="#000" stroke-width="1.6" stroke-opacity="0.21"/>
<path d="M59.6 171.3A181.4 181.4 0 0 1 -46.4 175.3" stroke="#000" stroke-width="1.4" stroke-opacity="0.40"/>
<path d="M-58.9 30.7A66.5 66.5 0 0 1 -62.7 -21.9" stroke="#0f6a0f" stroke-width="1.3" stroke-opacity="0.02"/>
<path d="M84.3 87.3A121.4 121.4 0 0 1 22.0 119.4" stroke="#0f6a0f" stroke-width="1.1" stroke-opacity="0.08"/>
<path d="M38.1 -165.8A170.1 170.1 0 0 1 125.4 -115.0" stroke="#000" stroke-width="0.7" stroke-opacity="0.40"/>
<path d="M-166.6 114.4A202.1 202.1 0 0 1 -199.6 -31.6" stroke="#000" stroke-width="1.3" stroke-opacity="0.25"/>
<path d="M104.4 163.4A193.9 193.9 0 0 1 -50.7 187.2" stroke="#000" stroke-width="1.3" stroke-opacity="0.34"/>
<path d="M-36.7 78.5A86.7 86.7 0 0 1 -73.0 46.8" stroke="#000" stroke-width="1.4" stroke-opacity="0.39"/>
<path d="M-166.9 26.4A169.0 169.0 0 0 1 -168.4 -14.3" stroke="#000" stroke-width="0.9" stroke-opacity="0.44"/>
<path d="M22.9 178.8A180.3 180.3 0 0 1 -179.3 18.8" stroke="#0f6a0f" stroke-width="1.5" stroke-opacity="0.15"/>
<path d="M160.6 -79.1A179.0 179.0 0 0 1 174.4 40.5" stroke="#000" stroke-width="0.7" stroke-opacity="0.34"/>
<path d="M30.4 -45.5A54.7 54.7 0 0 1 10.5 53.7" stroke="#0f6a0f" stroke-width="0.8" stroke-opacity="0.01"/>
<path d="M148.6 -79.1A168.3 168.3 0 0 1 160.0 52.3" stroke="#0f6a0f" stroke-width="0.8" stroke-opacity="0.16"/>
<path d="M132.7 83.7A156.9 156.9 0 0 1 -134.8 80.3" stroke="#0f6a0f" stroke-width="1.3" stroke-opacity="0.12"/>
<path d="M-152.3 -40.7A157.6 157.6 0 0 1 -17.2 -156.7" stroke="#168016" stroke-width="0.9" stroke-opacity="0.04"/>
<path d="M-62.8 -55.8A84.0 84.0 0 0 1 -50.8 -66.9" stroke="#000" stroke-width="1.0" stroke-opacity="0.24"/>
<path d="M-130.4 1.9A130.4 130.4 0 0 1 -122.7 -44.1" stroke="#000" stroke-width="1.2" stroke-opacity="0.43"/>
<path d="M-84.7 118.5A145.6 145.6 0 0 1 -113.1 -91.7" stroke="#168016" stroke-width="1.0" stroke-opacity="0.05"/>
<path d="M-137.5 -91.0A164.9 164.9 0 0 1 150.0 -68.3" stroke="#1a8a1a" stroke-width="1.3" stroke-opacity="0.13"/>
<path d="M-189.2 27.8A191.2 191.2 0 0 1 -191.2 1.5" stroke="#000" stroke-width="1.1" stroke-opacity="0.42"/>
<path d="M-195.8 44.2A200.7 200.7 0 0 1 -42.1 -196.2" stroke="#0f6a0f" stroke-width="0.7" stroke-opacity="0.18"/>
<path d="M15.4 177.0A177.6 177.6 0 0 1 -29.6 175.1" stroke="#000" stroke-width="0.9" stroke-opacity="0.48"/>
<path d="M-161.4 -114.7A198.1 198.1 0 0 1 -90.8 -176.1" stroke="#000" stroke-width="1.1" stroke-opacity="0.29"/>
<path d="M-34.4 -205.8A208.7 208.7 0 0 1 97.1 -184.7" stroke="#000" stroke-width="1.5" stroke-opacity="0.27"/>
<path d="M-179.4 -78.9A196.0 196.0 0 0 1 -146.4 -130.3" stroke="#000" stroke-width="0.9" stroke-opacity="0.46"/>
<path d="M-23.9 -103.4A106.2 106.2 0 0 1 28.6 -102.3" stroke="#000" stroke-width="1.0" stroke-opacity="0.44"/>
<path d="M60.2 -125.4A139.1 139.1 0 0 1 128.1 -54.3" stroke="#000" stroke-width="1.5" stroke-opacity="0.54"/>
<path d="M-52.3 17.2A55.0 55.0 0 0 1 -53.6 -12.5" stroke="#000" stroke-width="1.1" stroke-opacity="0.21"/>
<path d="M-90.4 -134.4A161.9 161.9 0 0 1 42.5 -156.3" stroke="#1a8a1a" stroke-width="0.7" stroke-opacity="0.14"/>
<path d="M-39.4 -28.4A48.6 48.6 0 0 1 -3.5 -48.4" stroke="#000" stroke-width="1.5" stroke-opacity="0.24"/>
<path d="M-167.9 -54.5A176.5 176.5 0 0 1 -123.8 -125.8" stroke="#000" stroke-width="1.3" stroke-opacity="0.29"/>
<path d="M-159.2 -114.9A196.3 196.3 0 0 1 102.7 -167.3" stroke="#1a8a1a" stroke-width="1.2" stroke-opacity="0.05"/>
<path d="M-47.1 -1.2A47.1 47.1 0 0 1 -39.5 -25.7" stroke="#000" stroke-width="0.6" stroke-opacity="0.31"/>
<path d="M-186.0 -86.6A205.2 205.2 0 0 1 -77.8 -189.9" stroke="#000" stroke-width="1.4" stroke-opacity="0.43"/>
<path d="M137.8 59.3A150.0 150.0 0 0 1 60.1 137.5" stroke="#000" stroke-width="1.3" stroke-opacity="0.48"/>
<path d="M-168.7 120.0A207.0 207.0 0 0 1 -26.6 -205.3" stroke="#0f6a0f" stroke-width="1.0" stroke-opacity="0.10"/>
<path d="M33.2 50.2A60.2 60.2 0 0 1 -0.3 60.2" stroke="#000" stroke-width="1.0" stroke-opacity="0.31"/>
<path d="M-52.6 195.8A202.7 202.7 0 0 1 -177.7 97.4" stroke="#168016" stroke-width="1.3" stroke-opacity="0.08"/>
<path d="M-135.8 -49.5A144.6 144.6 0 0 1 1.2 -144.6" stroke="#0f6a0f" stroke-width="0.7" stroke-opacity="0.05"/>
<path d="M74.2 -185.1A199.5 199.5 0 0 1 116.1 -162.2" stroke="#000" stroke-width="1.3" stroke-opacity="0.48"/>
<path d="M140.2 -116.8A182.4 182.4 0 0 1 181.2 21.5" stroke="#0f6a0f" stroke-width="0.8" stroke-opacity="0.18"/>
<path d="M132.1 -85.6A157.4 157.4 0 0 1 -57.6 146.5" stroke="#0f6a0f" stroke-width="1.6" stroke-opacity="0.12"/>
<path d="M176.8 -35.7A180.4 180.4 0 0 1 171.4 56.3" stroke="#000" stroke-width="0.8" stroke-opacity="0.27"/>
<path d="M-128.4 25.1A130.8 130.8 0 0 1 -122.5 -45.8" stroke="#000" stroke-width="1.2" stroke-opacity="0.52"/>
<path d="M45.4 -89.4A100.2 100.2 0 0 1 96.6 26.7" stroke="#168016" stroke-width="1.1" stroke-opacity="0.06"/>
<path d="M-114.8 -90.2A146.0 146.0 0 0 1 31.1 -142.6" stroke="#168016" stroke-width="1.4" stroke-opacity="0.12"/>
<path d="M-180.6 98.2A205.6 205.6 0 0 1 -196.9 -59.3" stroke="#0f6a0f" stroke-width="1.0" stroke-opacity="0.21"/>
<path d="M-119.8 -1.7A119.8 119.8 0 0 1 -88.6 -80.7" stroke="#1a8a1a" stroke-width="0.6" stroke-opacity="0.03"/>
<path d="M-31.1 184.1A186.7 186.7 0 0 1 -120.3 142.7" stroke="#000" stroke-width="0.8" stroke-opacity="0.28"/>
<path d="M-50.2 118.3A128.5 128.5 0 0 1 -82.5 98.5" stroke="#000" stroke-width="0.9" stroke-opacity="0.44"/>
<path d="M15.7 203.0A203.6 203.6 0 0 1 -47.8 198.0" stroke="#000" stroke-width="0.9" stroke-opacity="0.31"/>
<path d="M-3.2 190.8A190.8 190.8 0 0 1 -83.5 171.5" stroke="#000" stroke-width="1.2" stroke-opacity="0.45"/>
<path d="M-93.6 136.3A165.3 165.3 0 0 1 -140.5 87.2" stroke="#000" stroke-width="1.4" stroke-opacity="0.42"/>
<path d="M-130.9 -45.5A138.6 138.6 0 0 1 26.0 -136.1" stroke="#1a8a1a" stroke-width="1.2" stroke-opacity="0.06"/>
<path d="M67.4 150.3A164.8 164.8 0 0 1 -160.4 37.8" stroke="#1a8a1a" stroke-width="0.6" stroke-opacity="0.07"/>
<path d="M-160.3 134.7A209.4 209.4 0 0 1 -82.2 -192.6" stroke="#0f6a0f" stroke-width="1.4" stroke-opacity="0.11"/>
<path d="M-146.4 113.6A185.3 185.3 0 0 1 -171.1 71.1" stroke="#000" stroke-width="1.0" stroke-opacity="0.32"/>
<path d="M-190.2 76.0A204.8 204.8 0 0 1 -197.6 -53.8" stroke="#000" stroke-width="1.0" stroke-opacity="0.25"/>
<path d="M-194.5 51.2A201.2 201.2 0 0 1 -195.1 -49.0" stroke="#000" stroke-width="1.6" stroke-opacity="0.34"/>
<path d="M188.4 -15.6A189.1 189.1 0 0 1 179.7 58.8" stroke="#1a8a1a" stroke-width="0.9" stroke-opacity="0.15"/>
<path d="M8.4 55.0A55.6 55.6 0 0 1 -24.5 50.0" stroke="#168016" stroke-width="1.2" stroke-opacity="0.01"/>
<path d="M4.8 -194.4A194.5 194.5 0 0 1 84.3 -175.3" stroke="#000" stroke-width="1.1" stroke-opacity="0.48"/>
<path d="M-93.7 37.0A100.8 100.8 0 0 1 -98.5 21.2" stroke="#000" stroke-width="0.8" stroke-opacity="0.37"/>
<path d="M59.4 -68.2A90.4 90.4 0 0 1 68.2 -59.4" stroke="#000" stroke-width="1.3" stroke-opacity="0.39"/>
<path d="M-200.9 38.2A204.5 204.5 0 0 1 -49.7 -198.4" stroke="#1a8a1a" stroke-width="1.5" stroke-opacity="0.20"/>
<path d="M-72.0 -75.8A104.5 104.5 0 0 1 74.7 -73.1" stroke="#1a8a1a" stroke-width="1.6" stroke-opacity="0.04"/>
<path d="M80.2 31.3A86.1 86.1 0 0 1 37.6 77.5" stroke="#000" stroke-width="0.6" stroke-opacity="0.44"/>
<path d="M-43.2 -26.7A50.8 50.8 0 0 1 -30.0 -41.0" stroke="#168016" stroke-width="0.7" stroke-opacity="0.01"/>
<path d="M108.8 153.3A188.0 188.0 0 0 1 -177.4 62.3" stroke="#168016" stroke-width="1.1" stroke-opacity="0.15"/>
<path d="M-115.4 81.7A141.4 141.4 0 0 1 -123.8 -68.3" stroke="#0f6a0f" stroke-width="1.2" stroke-opacity="0.11"/>
<path d="M142.3 -65.7A156.8 156.8 0 0 1 154.6 -26.3" stroke="#000" stroke-width="0.7" stroke-opacity="0.38"/>
<path d="M47.7 -65.1A80.7 80.7 0 0 1 80.5 -6.1" stroke="#000" stroke-width="1.4" stroke-opacity="0.29"/>
<path d="M-119.9 148.9A191.1 191.1 0 0 1 -180.1 64.0" stroke="#000" stroke-width="1.0" stroke-opacity="0.37"/>
<path d="M-32.8 101.7A106.8 106.8 0 0 1 -86.3 63.0" stroke="#000" stroke-width="1.4" stroke-opacity="0.54"/>
<path d="M-126.9 -69.3A144.6 144.6 0 0 1 91.6 -111.8" stroke="#1a8a1a" stroke-width="1.0" stroke-opacity="0.12"/>
<path d="M148.9 48.5A156.6 156.6 0 0 1 81.7 133.6" stroke="#000" stroke-width="0.7" stroke-opacity="0.26"/>
<path d="M62.8 43.8A76.6 76.6 0 0 1 56.2 52.1" stroke="#000" stroke-width="1.1" stroke-opacity="0.30"/>
<path d="M47.1 26.9A54.3 54.3 0 0 1 37.8 39.0" stroke="#000" stroke-width="1.1" stroke-opacity="0.30"/>
<path d="M66.8 -0.6A66.8 66.8 0 0 1 -17.5 64.5" stroke="#1a8a1a" stroke-width="1.2" stroke-opacity="0.01"/>
<path d="M155.7 -19.7A157.0 157.0 0 0 1 148.6 50.5" stroke="#000" stroke-width="0.6" stroke-opacity="0.30"/>
<path d="M97.4 -183.6A207.9 207.9 0 0 1 207.7 -8.8" stroke="#0f6a0f" stroke-width="0.8" stroke-opacity="0.16"/>
<path d="M102.9 69.6A124.2 124.2 0 0 1 38.7 118.0" stroke="#1a8a1a" stroke-width="1.0" stroke-opacity="0.09"/>
<path d="M-181.7 -42.2A186.5 186.5 0 0 1 -75.6 -170.5" stroke="#1a8a1a" stroke-width="1.4" stroke-opacity="0.16"/>
<path d="M-138.1 -9.4A138.4 138.4 0 0 1 108.3 -86.2" stroke="#1a8a1a" stroke-width="1.3" stroke-opacity="0.07"/>
<path d="M124.8 20.1A126.4 126.4 0 0 1 114.2 54.2" stroke="#000" stroke-width="0.6" stroke-opacity="0.34"/>
<path d="M48.0 -196.5A202.3 202.3 0 0 1 100.9 -175.3" stroke="#000" stroke-width="1.4" stroke-opacity="0.38"/>
<path d="M142.3 -56.7A153.2 153.2 0 0 1 4.8 153.1" stroke="#0f6a0f" stroke-width="0.8" stroke-opacity="0.04"/>
<path d="M22.3 117.1A119.2 119.2 0 0 1 -100.3 64.5" stroke="#0f6a0f" stroke-width="1.2" stroke-opacity="0.08"/>
<path d="M67.7 -148.3A163.0 163.0 0 0 1 113.4 -117.1" stroke="#000" stroke-width="1.2" stroke-opacity="0.50"/>
<path d="M62.4 27.3A68.1 68.1 0 0 1 -40.4 54.8" stroke="#0f6a0f" stroke-width="0.6" stroke-opacity="0.02"/>
<path d="M-68.2 -188.4A200.4 200.4 0 0 1 116.4 -163.1" stroke="#0f6a0f" stroke-width="0.9" stroke-opacity="0.15"/>
<path d="M160.7 35.2A164.5 164.5 0 0 1 5.3 164.4" stroke="#168016" stroke-width="0.8" stroke-opacity="0.04"/>
<path d="M-1.0 196.3A196.3 196.3 0 0 1 -72.3 182.5" stroke="#000" stroke-width="1.2" stroke-opacity="0.41"/>
<path d="M-161.4 -130.5A207.5 207.5 0 0 1 -120.6 -168.9" stroke="#000" stroke-width="1.4" stroke-opacity="0.45"/>
<path d="M-34.7 -154.4A158.2 158.2 0 0 1 70.1 -141.9" stroke="#000" stroke-width="0.6" stroke-opacity="0.25"/>
<path d="M183.1 -88.0A203.1 203.1 0 0 1 191.4 -68.2" stroke="#000" stroke-width="1.0" stroke-opacity="0.36"/>
<path d="M15.5 -156.6A157.4 157.4 0 0 1 122.7 -98.5" stroke="#000" stroke-width="0.7" stroke-opacity="0.50"/>
<path d="M-15.9 -181.3A182.0 182.0 0 0 1 169.6 66.1" stroke="#168016" stroke-width="1.4" stroke-opacity="0.06"/>
<path d="M-31.7 -158.7A161.9 161.9 0 0 1 38.8 -157.1" stroke="#000" stroke-width="1.3" stroke-opacity="0.30"/>
<path d="M-98.6 170.3A196.8 196.8 0 0 1 -178.0 84.0" stroke="#000" stroke-width="0.8" stroke-opacity="0.25"/>
<path d="M117.4 98.2A153.1 153.1 0 0 1 10.7 152.7" stroke="#000" stroke-width="0.9" stroke-opacity="0.32"/>
<path d="M94.4 -4.3A94.5 94.5 0 0 1 80.6 49.4" stroke="#000" stroke-width="0.6" stroke-opacity="0.25"/>
<path d="M134.4 133.5A189.4 189.4 0 0 1 -189.2 -8.4" stroke="#0f6a0f" stroke-width="1.0" stroke-opacity="0.12"/>
<path d="M130.8 -113.1A172.9 172.9 0 0 1 163.7 -55.9" stroke="#000" stroke-width="1.3" stroke-opacity="0.50"/>
<path d="M87.2 -58.4A104.9 104.9 0 0 1 103.1 -19.3" stroke="#0f6a0f" stroke-width="0.8" stroke-opacity="0.02"/>
<path d="M106.4 -129.5A167.6 167.6 0 0 1 118.5 118.5" stroke="#168016" stroke-width="1.0" stroke-opacity="0.15"/>
<path d="M155.1 -93.1A180.8 180.8 0 0 1 38.3 176.7" stroke="#0f6a0f" stroke-width="1.3" stroke-opacity="0.08"/>
<path d="M95.1 96.4A135.4 135.4 0 0 1 6.0 135.3" stroke="#000" stroke-width="0.7" stroke-opacity="0.39"/>
<path d="M30.4 199.4A201.7 201.7 0 0 1 -106.6 171.1" stroke="#000" stroke-width="1.2" stroke-opacity="0.26"/>
<path d="M-63.1 -131.6A146.0 146.0 0 0 1 -20.3 -144.6" stroke="#000" stroke-width="1.0" stroke-opacity="0.42"/>
<path d="M-147.9 31.7A151.2 151.2 0 0 1 -150.3 -16.9" stroke="#000" stroke-width="1.2" stroke-opacity="0.32"/>
<path d="M70.9 -44.4A83.7 83.7 0 0 1 79.2 -27.0" stroke="#000" stroke-width="1.2" stroke-opacity="0.34"/>
<path d="M129.9 79.6A152.4 152.4 0 0 1 94.7 119.4" stroke="#000" stroke-width="0.9" stroke-opacity="0.54"/>
<path d="M74.7 -155.2A172.3 172.3 0 0 1 153.5 -78.2" stroke="#000" stroke-width="1.1" stroke-opacity="0.28"/>
<path d="M-192.7 -19.1A193.6 193.6 0 0 1 -157.2 -113.0" stroke="#000" stroke-width="1.1" stroke-opacity="0.30"/>
<path d="M-54.2 -73.7A91.5 91.5 0 0 1 63.7 -65.7" stroke="#1a8a1a" stroke-width="0.7" stroke-opacity="0.02"/>
<path d="M40.0 -33.9A52.5 52.5 0 0 1 51.3 -11.0" stroke="#000" stroke-width="0.6" stroke-opacity="0.44"/>
<path d="M-121.2 -36.7A126.6 126.6 0 0 1 -58.2 -112.4" stroke="#000" stroke-width="1.5" stroke-opacity="0.45"/>
<path d="M192.5 5.2A192.6 192.6 0 0 1 -107.3 160.0" stroke="#168016" stroke-width="1.5" stroke-opacity="0.17"/>
<path d="M9.9 58.4A59.2 59.2 0 0 1 -19.4 55.9" stroke="#000" stroke-width="1.1" stroke-opacity="0.46"/>
<path d="M-42.7 -37.7A56.9 56.9 0 0 1 52.2 -22.8" stroke="#168016" stroke-width="1.5" stroke-opacity="0.02"/>
<path d="M-124.6 90.1A153.7 153.7 0 0 1 -152.0 22.9" stroke="#000" stroke-width="1.0" stroke-opacity="0.30"/>
<path d="M-152.1 36.2A156.4 156.4 0 0 1 -134.8 -79.2" stroke="#000" stroke-width="1.4" stroke-opacity="0.41"/>
<path d="M-43.7 -129.0A136.2 136.2 0 0 1 14.9 -135.3" stroke="#000" stroke-width="1.0" stroke-opacity="0.54"/>
<path d="M9.4 -56.6A57.4 57.4 0 0 1 46.1 -34.3" stroke="#000" stroke-width="1.3" stroke-opacity="0.49"/>
<path d="M136.6 94.4A166.1 166.1 0 0 1 90.9 139.0" stroke="#000" stroke-width="0.8" stroke-opacity="0.40"/>
<path d="M-80.5 -26.1A84.7 84.7 0 0 1 82.4 -19.3" stroke="#0f6a0f" stroke-width="1.1" stroke-opacity="0.01"/>
<path d="M-143.7 -63.1A157.0 157.0 0 0 1 -120.2 -101.0" stroke="#000" stroke-width="1.6" stroke-opacity="0.24"/>
<path d="M-21.5 118.0A120.0 120.0 0 0 1 -74.8 93.8" stroke="#000" stroke-width="0.9" stroke-opacity="0.54"/>
<path d="M58.7 -76.1A96.1 96.1 0 0 1 88.2 -38.0" stroke="#1a8a1a" stroke-width="1.4" stroke-opacity="0.04"/>
<path d="M-161.2 -29.1A163.8 163.8 0 0 1 -81.8 -141.9" stroke="#000" stroke-width="1.2" stroke-opacity="0.50"/>
<path d="M153.4 115.5A192.0 192.0 0 0 1 -91.8 168.6" stroke="#168016" stroke-width="1.2" stroke-opacity="0.14"/>
<path d="M-200.9 -28.2A202.9 202.9 0 0 1 -165.3 -117.7" stroke="#000" stroke-width="1.4" stroke-opacity="0.28"/>
<path d="M162.8 -56.9A172.4 172.4 0 0 1 153.9 77.8" stroke="#000" stroke-width="0.7" stroke-opacity="0.48"/>
<path d="M23.5 103.7A106.3 106.3 0 0 1 -28.1 102.5" stroke="#000" stroke-width="1.3" stroke-opacity="0.25"/>
<path d="M54.5 -147.5A157.2 157.2 0 0 1 116.7 105.3" stroke="#0f6a0f" stroke-width="1.1" stroke-opacity="0.14"/>
<path d="M102.4 63.2A120.3 120.3 0 0 1 41.7 112.8" stroke="#000" stroke-width="0.7" stroke-opacity="0.54"/>
<path d="M-79.6 -116.0A140.6 140.6 0 0 1 136.7 -33.1" stroke="#0f6a0f" stroke-width="1.0" stroke-opacity="0.06"/>
<path d="M66.6 136.6A151.9 151.9 0 0 1 -96.4 117.4" stroke="#168016" stroke-width="1.2" stroke-opacity="0.08"/>
<path d="M-9.5 155.2A155.4 155.4 0 0 1 -146.3 52.6" stroke="#0f6a0f" stroke-width="1.1" stroke-opacity="0.10"/>
<path d="M70.2 -114.8A134.5 134.5 0 0 1 87.1 -102.5" stroke="#000" stroke-width="0.8" stroke-opacity="0.22"/>
<path d="M16.3 132.1A133.1 133.1 0 0 1 -51.7 122.7" stroke="#0f6a0f" stroke-width="1.6" stroke-opacity="0.10"/>
<path d="M138.9 89.2A165.1 165.1 0 0 1 99.2 131.9" stroke="#1a8a1a" stroke-width="1.6" stroke-opacity="0.04"/>
<path d="M-162.2 56.1A171.7 171.7 0 0 1 -124.2 -118.5" stroke="#1a8a1a" stroke-width="1.2" stroke-opacity="0.11"/>
<path d="M-18.8 75.8A78.1 78.1 0 0 1 -69.5 35.7" stroke="#1a8a1a" stroke-width="0.9" stroke-opacity="0.01"/>
<path d="M167.6 -56.2A176.8 176.8 0 0 1 174.3 29.5" stroke="#000" stroke-width="1.6" stroke-opacity="0.23"/>
<path d="M36.2 -94.7A101.3 101.3 0 0 1 56.2 -84.3" stroke="#000" stroke-width="0.7" stroke-opacity="0.39"/>
<path d="M114.1 -18.4A115.6 115.6 0 0 1 114.5 16.1" stroke="#000" stroke-width="1.3" stroke-opacity="0.29"/>
<path d="M193.4 55.7A201.2 201.2 0 0 1 112.7 166.7" stroke="#000" stroke-width="1.3" stroke-opacity="0.32"/>
<path d="M113.6 148.8A187.2 187.2 0 0 1 -185.2 -27.5" stroke="#0f6a0f" stroke-width="1.5" stroke-opacity="0.15"/>
<path d="M-122.2 -67.4A139.6 139.6 0 0 1 -39.6 -133.8" stroke="#000" stroke-width="1.3" stroke-opacity="0.27"/>
<path d="M-33.9 -120.5A125.2 125.2 0 0 1 124.3 -14.7" stroke="#1a8a1a" stroke-width="0.8" stroke-opacity="0.05"/>
<path d="M-29.8 -40.8A50.5 50.5 0 0 1 46.5 19.7" stroke="#168016" stroke-width="1.0" stroke-opacity="0.02"/>
<path d="M-57.8 147.8A158.7 158.7 0 0 1 -157.1 22.7" stroke="#168016" stroke-width="1.3" stroke-opacity="0.13"/>
<path d="M170.4 64.4A182.2 182.2 0 0 1 61.9 171.4" stroke="#168016" stroke-width="1.5" stroke-opacity="0.18"/>
<path d="M178.0 18.9A179.0 179.0 0 0 1 168.2 61.2" stroke="#000" stroke-width="0.8" stroke-opacity="0.44"/>
<path d="M-174.7 112.3A207.7 207.7 0 0 1 -203.4 42.2" stroke="#0f6a0f" stroke-width="1.0" stroke-opacity="0.14"/>
<path d="M-166.2 11.8A166.6 166.6 0 0 1 -153.9 -63.7" stroke="#000" stroke-width="0.8" stroke-opacity="0.35"/>
<path d="M-6.2 -153.5A153.6 153.6 0 0 1 62.0 -140.6" stroke="#000" stroke-width="1.3" stroke-opacity="0.35"/>
<path d="M118.8 164.0A202.5 202.5 0 0 1 -157.4 127.4" stroke="#168016" stroke-width="0.9" stroke-opacity="0.09"/>
<path d="M-39.6 -178.4A182.7 182.7 0 0 1 174.7 53.5" stroke="#1a8a1a" stroke-width="0.9" stroke-opacity="0.07"/>
<path d="M91.5 6.3A91.8 91.8 0 0 1 63.3 66.5" stroke="#168016" stroke-width="0.7" stroke-opacity="0.04"/>
<path d="M93.5 170.0A194.0 194.0 0 0 1 -183.2 63.9" stroke="#0f6a0f" stroke-width="0.6" stroke-opacity="0.18"/>
<path d="M-6.5 -61.2A61.6 61.6 0 0 1 52.6 -31.9" stroke="#1a8a1a" stroke-width="1.6" stroke-opacity="0.02"/>
<path d="M147.0 -39.5A152.2 152.2 0 0 1 78.9 130.2" stroke="#168016" stroke-width="1.3" stroke-opacity="0.04"/>
<path d="M-110.7 119.2A162.7 162.7 0 0 1 -146.0 71.8" stroke="#000" stroke-width="0.7" stroke-opacity="0.48"/>
<path d="M95.5 40.6A103.8 103.8 0 0 1 71.8 74.9" stroke="#000" stroke-width="1.0" stroke-opacity="0.28"/>
<path d="M30.4 164.1A166.9 166.9 0 0 1 -161.8 40.9" stroke="#0f6a0f" stroke-width="1.1" stroke-opacity="0.14"/>
<path d="M72.0 126.4A145.5 145.5 0 0 1 -35.3 141.1" stroke="#000" stroke-width="0.9" stroke-opacity="0.40"/>
<path d="M-13.9 132.5A133.3 133.3 0 0 1 -92.6 95.8" stroke="#000" stroke-width="0.7" stroke-opacity="0.52"/>
<path d="M-116.3 57.0A129.5 129.5 0 0 1 -128.7 -14.4" stroke="#000" stroke-width="1.0" stroke-opacity="0.24"/>
<path d="M-82.5 -19.9A84.9 84.9 0 0 1 -57.1 -62.8" stroke="#000" stroke-width="0.7" stroke-opacity="0.36"/>
<path d="M-80.2 133.0A155.3 155.3 0 0 1 -148.4 45.7" stroke="#000" stroke-width="0.6" stroke-opacity="0.26"/>
<path d="M8.7 -122.1A122.5 122.5 0 0 1 34.1 -117.6" stroke="#000" stroke-width="0.8" stroke-opacity="0.54"/>
<path d="M115.1 -64.8A132.1 132.1 0 0 1 131.2 15.3" stroke="#000" stroke-width="1.5" stroke-opacity="0.22"/>
<path d="M-36.4 161.0A165.1 165.1 0 0 1 -77.5 -145.7" stroke="#1a8a1a" stroke-width="1.1" stroke-opacity="0.06"/>
<path d="M40.2 126.4A132.7 132.7 0 0 1 -128.0 35.0" stroke="#0f6a0f" stroke-width="1.1" stroke-opacity="0.03"/>
<path d="M11.9 98.6A99.3 99.3 0 0 1 -78.9 60.3" stroke="#1a8a1a" stroke-width="0.8" stroke-opacity="0.05"/>
<path d="M169.7 78.9A187.1 187.1 0 0 1 59.5 177.4" stroke="#000" stroke-width="1.0" stroke-opacity="0.36"/>
<path d="M99.8 71.9A123.0 123.0 0 0 1 60.6 107.0" stroke="#000" stroke-width="1.0" stroke-opacity="0.34"/>
<path d="M-63.4 62.5A89.1 89.1 0 0 1 -65.2 -60.7" stroke="#1a8a1a" stroke-width="1.1" stroke-opacity="0.02"/>
<path d="M-147.2 -84.9A169.9 169.9 0 0 1 144.4 -89.6" stroke="#1a8a1a" stroke-width="1.0" stroke-opacity="0.09"/>
<path d="M71.0 -185.0A198.1 198.1 0 0 1 143.6 -136.5" stroke="#000" stroke-width="1.2" stroke-opacity="0.43"/>
<path d="M155.9 -71.1A171.3 171.3 0 0 1 126.2 115.8" stroke="#0f6a0f" stroke-width="0.9" stroke-opacity="0.16"/>
<path d="M-112.7 162.1A197.4 197.4 0 0 1 -190.7 51.1" stroke="#1a8a1a" stroke-width="0.9" stroke-opacity="0.07"/>
<path d="M-63.5 123.6A138.9 138.9 0 0 1 -128.8 52.0" stroke="#000" stroke-width="0.7" stroke-opacity="0.22"/>
<path d="M132.0 -146.6A197.2 197.2 0 0 1 160.3 -114.9" stroke="#000" stroke-width="1.0" stroke-opacity="0.40"/>
<path d="M117.9 116.8A166.0 166.0 0 0 1 -134.4 97.5" stroke="#0f6a0f" stroke-width="0.8" stroke-opacity="0.09"/>
<path d="M-25.6 -194.1A195.8 195.8 0 0 1 110.6 -161.6" stroke="#168016" stroke-width="0.7" stroke-opacity="0.17"/>
<path d="M64.2 187.4A198.1 198.1 0 0 1 -36.6 194.7" stroke="#000" stroke-width="0.7" stroke-opacity="0.39"/>
<path d="M92.4 178.3A200.8 200.8 0 0 1 -47.9 195.0" stroke="#000" stroke-width="0.6" stroke-opacity="0.50"/>
<path d="M-173.5 23.4A175.1 175.1 0 0 1 -142.4 -101.9" stroke="#000" stroke-width="1.0" stroke-opacity="0.53"/>
<path d="M11.4 -191.7A192.0 192.0 0 0 1 149.5 -120.5" stroke="#000" stroke-width="0.6" stroke-opacity="0.41"/>
<path d="M-201.7 -11.2A202.0 202.0 0 0 1 -177.4 -96.6" stroke="#000" stroke-width="0.9" stroke-opacity="0.32"/>
<path d="M120.1 -81.1A144.9 144.9 0 0 1 -36.7 140.2" stroke="#168016" stroke-width="1.1" stroke-opacity="0.06"/>
<path d="M-103.6 18.0A105.2 105.2 0 0 1 -105.0 6.7" stroke="#000" stroke-width="0.8" stroke-opacity="0.49"/>
<path d="M67.5 -34.8A76.0 76.0 0 0 1 -4.2 75.9" stroke="#0f6a0f" stroke-width="0.8" stroke-opacity="0.04"/>
<path d="M55.2 -117.9A130.2 130.2 0 0 1 112.0 -66.4" stroke="#000" stroke-width="1.1" stroke-opacity="0.52"/>
<path d="M-14.3 -170.4A170.9 170.9 0 0 1 145.6 -89.6" stroke="#1a8a1a" stroke-width="1.1" stroke-opacity="0.15"/>
<path d="M-170.7 -60.7A181.1 181.1 0 0 1 -158.3 -88.0" stroke="#000" stroke-width="0.9" stroke-opacity="0.37"/>
<path d="M46.5 86.4A98.2 98.2 0 0 1 -71.9 66.8" stroke="#1a8a1a" stroke-width="0.7" stroke-opacity="0.06"/>
<path d="M-82.9 149.9A171.3 171.3 0 0 1 -165.0 45.9" stroke="#1a8a1a" stroke-width="0.9" stroke-opacity="0.04"/>
<path d="M-28.0 -157.8A160.3 160.3 0 0 1 100.6 -124.8" stroke="#000" stroke-width="0.8" stroke-opacity="0.24"/>
<path d="M50.4 -125.6A135.4 135.4 0 0 1 91.0 -100.2" stroke="#1a8a1a" stroke-width="1.2" stroke-opacity="0.11"/>
<path d="M-30.1 135.7A139.0 139.0 0 0 1 -116.7 75.5" stroke="#000" stroke-width="1.4" stroke-opacity="0.24"/>
<path d="M-32.4 -89.3A95.0 95.0 0 0 1 16.8 -93.5" stroke="#000" stroke-width="1.3" stroke-opacity="0.28"/>
<path d="M89.9 66.2A111.7 111.7 0 0 1 11.9 111.0" stroke="#000" stroke-width="1.4" stroke-opacity="0.27"/>
<path d="M102.8 97.9A142.0 142.0 0 0 1 -140.8 -18.5" stroke="#168016" stroke-width="0.9" stroke-opacity="0.06"/>
<path d="M120.0 64.1A136.0 136.0 0 0 1 43.6 128.9" stroke="#000" stroke-width="1.3" stroke-opacity="0.27"/>
<path d="M68.9 90.2A113.5 113.5 0 0 1 -3.8 113.5" stroke="#000" stroke-width="1.4" stroke-opacity="0.30"/>
<path d="M-147.2 106.8A181.8 181.8 0 0 1 -169.8 65.0" stroke="#000" stroke-width="1.3" stroke-opacity="0.44"/>
<path d="M-80.1 -36.5A88.0 88.0 0 0 1 -49.2 -73.0" stroke="#000" stroke-width="1.2" stroke-opacity="0.46"/>
<path d="M87.0 37.0A94.5 94.5 0 0 1 77.6 53.9" stroke="#000" stroke-width="1.3" stroke-opacity="0.50"/>
<path d="M-4.9 -130.9A131.0 131.0 0 0 1 130.3 13.6" stroke="#0f6a0f" stroke-width="0.9" stroke-opacity="0.08"/>
<path d="M98.7 55.6A113.3 113.3 0 0 1 -110.2 26.0" stroke="#0f6a0f" stroke-width="0.8" stroke-opacity="0.02"/>
<path d="M129.9 -144.8A194.5 194.5 0 0 1 180.6 -72.2" stroke="#1a8a1a" stroke-width="1.1" stroke-opacity="0.15"/>
<path d="M175.9 -18.7A176.9 176.9 0 0 1 -78.9 158.3" stroke="#0f6a0f" stroke-width="1.1" stroke-opacity="0.09"/>
<path d="M-165.5 65.7A178.0 178.0 0 0 1 -166.9 -61.9" stroke="#000" stroke-width="0.6" stroke-opacity="0.53"/>
<path d="M121.3 -79.5A145.1 145.1 0 0 1 145.1 -2.6" stroke="#000" stroke-width="0.6" stroke-opacity="0.37"/>
<path d="M133.4 128.0A184.8 184.8 0 0 1 71.7 170.4" stroke="#000" stroke-width="1.3" stroke-opacity="0.50"/>
<path d="M-40.9 35.4A54.1 54.1 0 0 1 -15.3 -51.9" stroke="#0f6a0f" stroke-width="0.9" stroke-opacity="0.01"/>
<path d="M58.6 -72.2A93.0 93.0 0 0 1 78.6 -49.8" stroke="#000" stroke-width="0.7" stroke-opacity="0.27"/>
<path d="M33.1 89.1A95.1 95.1 0 0 1 13.7 94.1" stroke="#000" stroke-width="1.5" stroke-opacity="0.34"/>
<path d="M132.2 79.1A154.1 154.1 0 0 1 52.8 144.8" stroke="#000" stroke-width="1.2" stroke-opacity="0.45"/>
<path d="M-155.0 103.7A186.5 186.5 0 0 1 -170.3 76.0" stroke="#000" stroke-width="1.6" stroke-opacity="0.22"/>
<path d="M-194.1 56.8A202.2 202.2 0 0 1 -193.1 -60.1" stroke="#000" stroke-width="1.4" stroke-opacity="0.47"/>
<path d="M178.7 95.5A202.6 202.6 0 0 1 118.3 164.4" stroke="#000" stroke-width="1.0" stroke-opacity="0.34"/>
<path d="M-4.4 199.7A199.7 199.7 0 0 1 -121.5 158.5" stroke="#000" stroke-width="1.5" stroke-opacity="0.38"/>
<path d="M-11.8 64.1A65.1 65.1 0 0 1 -42.4 49.5" stroke="#000" stroke-width="1.6" stroke-opacity="0.37"/>
<path d="M-52.7 -107.1A119.4 119.4 0 0 1 -3.0 -119.3" stroke="#000" stroke-width="0.8" stroke-opacity="0.34"/>
<path d="M-131.6 95.8A162.8 162.8 0 0 1 -5.3 -162.7" stroke="#0f6a0f" stroke-width="1.6" stroke-opacity="0.12"/>
<path d="M3.9 174.1A174.2 174.2 0 0 1 -169.0 -42.1" stroke="#168016" stroke-width="1.5" stroke-opacity="0.06"/>
<path d="M33.2 47.1A57.6 57.6 0 0 1 -55.1 -17.0" stroke="#0f6a0f" stroke-width="1.2" stroke-opacity="0.02"/>
<path d="M149.3 -29.3A152.1 152.1 0 0 1 129.5 79.8" stroke="#000" stroke-width="0.8" stroke-opacity="0.23"/>
<path d="M-119.3 -40.6A126.1 126.1 0 0 1 49.8 -115.8" stroke="#0f6a0f" stroke-width="1.1" stroke-opacity="0.09"/>
<path d="M16.6 138.1A139.1 139.1 0 0 1 -49.4 130.0" stroke="#168016" stroke-width="0.6" stroke-opacity="0.03"/>
<path d="M-66.3 -62.9A91.4 91.4 0 0 1 -1.4 -91.4" stroke="#000" stroke-width="1.6" stroke-opacity="0.24"/>
<path d="M-39.1 205.5A209.2 209.2 0 0 1 -197.1 70.0" stroke="#0f6a0f" stroke-width="1.5" stroke-opacity="0.07"/>
<path d="M54.3 141.0A151.1 151.1 0 0 1 -3.4 151.1" stroke="#000" stroke-width="1.4" stroke-opacity="0.36"/>
<path d="M-133.0 -147.1A198.3 198.3 0 0 1 176.5 -90.4" stroke="#1a8a1a" stroke-width="1.0" stroke-opacity="0.12"/>
<path d="M-121.4 65.6A138.0 138.0 0 0 1 -129.7 47.2" stroke="#000" stroke-width="1.0" stroke-opacity="0.51"/>
<path d="M171.9 12.2A172.4 172.4 0 0 1 110.7 132.1" stroke="#000" stroke-width="1.5" stroke-opacity="0.35"/>
<path d="M-136.4 42.8A143.0 143.0 0 0 1 -142.6 -9.8" stroke="#000" stroke-width="1.0" stroke-opacity="0.24"/>
<path d="M71.2 54.6A89.7 89.7 0 0 1 59.1 67.5" stroke="#000" stroke-width="0.8" stroke-opacity="0.49"/>
<path d="M-90.8 -134.6A162.4 162.4 0 0 1 159.6 -29.6" stroke="#1a8a1a" stroke-width="1.0" stroke-opacity="0.13"/>
<path d="M120.5 -169.9A208.3 208.3 0 0 1 206.2 -29.4" stroke="#000" stroke-width="1.1" stroke-opacity="0.20"/>
<path d="M-114.0 30.9A118.1 118.1 0 0 1 -110.9 -40.6" stroke="#0f6a0f" stroke-width="1.6" stroke-opacity="0.09"/>
<path d="M-86.0 -20.1A88.4 88.4 0 0 1 11.8 -87.6" stroke="#1a8a1a" stroke-width="0.7" stroke-opacity="0.04"/>
<path d="M47.8 -160.1A167.0 167.0 0 0 1 150.3 -73.0" stroke="#000" stroke-width="0.8" stroke-opacity="0.50"/>
<path d="M184.6 -13.3A185.1 185.1 0 0 1 163.3 87.1" stroke="#1a8a1a" stroke-width="1.2" stroke-opacity="0.14"/>
<path d="M-140.5 150.1A205.6 205.6 0 0 1 -205.5 6.1" stroke="#000" stroke-width="1.3" stroke-opacity="0.21"/>
<path d="M-41.6 64.2A76.6 76.6 0 0 1 -51.3 56.8" stroke="#000" stroke-width="1.4" stroke-opacity="0.46"/>
<path d="M-73.8 -44.0A85.9 85.9 0 0 1 -26.7 -81.7" stroke="#000" stroke-width="1.2" stroke-opacity="0.35"/>
<path d="M-134.0 126.2A184.1 184.1 0 0 1 -183.0 -20.3" stroke="#000" stroke-width="0.9" stroke-opacity="0.27"/>
<path d="M163.7 -101.2A192.5 192.5 0 0 1 190.1 30.1" stroke="#000" stroke-width="1.3" stroke-opacity="0.22"/>
<path d="M-118.2 -29.3A121.8 121.8 0 0 1 115.4 -39.0" stroke="#168016" stroke-width="0.7" stroke-opacity="0.05"/>
<path d="M-148.5 -89.1A173.2 173.2 0 0 1 145.6 -93.8" stroke="#1a8a1a" stroke-width="1.4" stroke-opacity="0.08"/>
<path d="M34.3 -135.5A139.8 139.8 0 0 1 115.2 -79.2" stroke="#000" stroke-width="1.1" stroke-opacity="0.49"/>
<path d="M68.9 159.7A173.9 173.9 0 0 1 -150.3 87.4" stroke="#0f6a0f" stroke-width="1.3" stroke-opacity="0.11"/>
<path d="M-106.7 -162.2A194.2 194.2 0 0 1 -81.2 -176.4" stroke="#000" stroke-width="0.9" stroke-opacity="0.41"/>
<path d="M88.3 -65.0A109.7 109.7 0 0 1 95.2 -54.5" stroke="#000" stroke-width="1.2" stroke-opacity="0.54"/>
<path d="M-146.5 78.1A166.0 166.0 0 0 1 26.9 -163.8" stroke="#1a8a1a" stroke-width="1.5" stroke-opacity="0.07"/>
<path d="M65.6 -176.0A187.8 187.8 0 0 1 112.4 -150.4" stroke="#000" stroke-width="1.1" stroke-opacity="0.49"/>
<path d="M87.2 -96.5A130.0 130.0 0 0 1 90.1 93.7" stroke="#0f6a0f" stroke-width="1.4" stroke-opacity="0.05"/>
<path d="M-72.6 12.6A73.7 73.7 0 0 1 -64.8 -35.2" stroke="#000" stroke-width="0.9" stroke-opacity="0.39"/>
<path d="M-196.1 2.3A196.1 196.1 0 0 1 -195.1 -20.2" stroke="#000" stroke-width="0.7" stroke-opacity="0.23"/>
<path d="M-48.1 -184.1A190.3 190.3 0 0 1 99.8 -162.0" stroke="#000" stroke-width="0.9" stroke-opacity="0.42"/>
<path d="M36.7 -183.2A186.9 186.9 0 0 1 151.8 -109.0" stroke="#000" stroke-width="0.9" stroke-opacity="0.27"/>
<path d="M26.2 46.8A53.7 53.7 0 0 1 -1.8 53.7" stroke="#168016" stroke-width="1.3" stroke-opacity="0.02"/>
<path d="M-114.2 173.6A207.7 207.7 0 0 1 -185.6 93.3" stroke="#000" stroke-width="0.7" stroke-opacity="0.55"/>
<path d="M48.8 -41.9A64.3 64.3 0 0 1 56.7 -30.3" stroke="#000" stroke-width="1.2" stroke-opacity="0.40"/>
<path d="M112.5 -60.7A127.8 127.8 0 0 1 127.5 9.4" stroke="#000" stroke-width="1.2" stroke-opacity="0.44"/>
<path d="M107.7 -51.4A119.3 119.3 0 0 1 116.2 27.0" stroke="#000" stroke-width="1.5" stroke-opacity="0.47"/>
<path d="M-30.0 -135.5A138.8 138.8 0 0 1 120.0 -69.6" stroke="#1a8a1a" stroke-width="1.5" stroke-opacity="0.05"/>
<path d="M-55.9 33.7A65.3 65.3 0 0 1 -63.5 14.9" stroke="#000" stroke-width="1.0" stroke-opacity="0.55"/>
<path d="M-142.7 2.4A142.7 142.7 0 0 1 113.7 -86.3" stroke="#1a8a1a" stroke-width="1.0" stroke-opacity="0.03"/>
<path d="M42.1 -106.4A114.4 114.4 0 0 1 59.6 -97.7" stroke="#000" stroke-width="1.5" stroke-opacity="0.54"/>
<path d="M-109.7 -100.5A148.8 148.8 0 0 1 -37.9 -143.9" stroke="#000" stroke-width="0.7" stroke-opacity="0.40"/>
<path d="M17.5 101.8A103.3 103.3 0 0 1 -10.8 102.7" stroke="#000" stroke-width="1.2" stroke-opacity="0.22"/>
<path d="M-31.1 202.5A204.9 204.9 0 0 1 -138.1 151.3" stroke="#0f6a0f" stroke-width="1.1" stroke-opacity="0.18"/>
<path d="M190.8 -72.3A204.0 204.0 0 0 1 186.2 83.4" stroke="#000" stroke-width="1.2" stroke-opacity="0.26"/>
<path d="M74.7 74.7A105.6 105.6 0 0 1 -3.4 105.6" stroke="#000" stroke-width="1.5" stroke-opacity="0.33"/>
<path d="M196.6 57.1A204.8 204.8 0 0 1 107.4 174.4" stroke="#000" stroke-width="1.4" stroke-opacity="0.37"/>
<path d="M-12.0 177.1A177.5 177.5 0 0 1 -124.9 126.2" stroke="#000" stroke-width="0.6" stroke-opacity="0.43"/>
<path d="M-157.8 -88.2A180.8 180.8 0 0 1 -123.5 -132.0" stroke="#000" stroke-width="1.0" stroke-opacity="0.51"/>
<path d="M55.3 -195.2A202.9 202.9 0 0 1 116.7 -166.0" stroke="#000" stroke-width="0.7" stroke-opacity="0.36"/>
<path d="M127.7 -26.5A130.5 130.5 0 0 1 116.8 58.2" stroke="#000" stroke-width="1.3" stroke-opacity="0.55"/>
<path d="M-19.1 -208.4A209.2 209.2 0 0 1 191.5 -84.3" stroke="#1a8a1a" stroke-width="1.6" stroke-opacity="0.20"/>
<path d="M141.1 118.0A183.9 183.9 0 0 1 4.9 183.9" stroke="#000" stroke-width="1.2" stroke-opacity="0.53"/>
<path d="M18.4 167.2A168.2 168.2 0 0 1 -38.0 163.8" stroke="#000" stroke-width="1.0" stroke-opacity="0.24"/>
<path d="M-26.6 154.7A157.0 157.0 0 0 1 -82.0 -133.9" stroke="#168016" stroke-width="1.4" stroke-opacity="0.06"/>
<path d="M117.6 -90.1A148.1 148.1 0 0 1 57.1 136.7" stroke="#0f6a0f" stroke-width="0.9" stroke-opacity="0.11"/>
<path d="M17.8 -94.3A96.0 96.0 0 0 1 77.4 -56.8" stroke="#000" stroke-width="1.2" stroke-opacity="0.45"/>
<path d="M-109.6 -70.2A130.2 130.2 0 0 1 -53.8 -118.5" stroke="#000" stroke-width="1.5" stroke-opacity="0.23"/>
<path d="M-188.4 -23.2A189.8 189.8 0 0 1 -170.7 -82.9" stroke="#000" stroke-width="0.9" stroke-opacity="0.46"/>
<path d="M46.9 28.4A54.9 54.9 0 0 1 -53.3 13.0" stroke="#0f6a0f" stroke-width="1.2" stroke-opacity="0.02"/>
<path d="M-110.3 -96.7A146.7 146.7 0 0 1 -40.9 -140.8" stroke="#000" stroke-width="1.2" stroke-opacity="0.48"/>
<path d="M158.1 -106.9A190.8 190.8 0 0 1 97.1 164.3" stroke="#0f6a0f" stroke-width="0.8" stroke-opacity="0.12"/>
<path d="M204.8 20.7A205.8 205.8 0 0 1 191.7 75.0" stroke="#000" stroke-width="0.7" stroke-opacity="0.39"/>
<path d="M-118.1 77.0A141.0 141.0 0 0 1 -136.8 34.3" stroke="#000" stroke-width="1.5" stroke-opacity="0.52"/>
<path d="M144.0 -138.5A199.8 199.8 0 0 1 170.8 -103.7" stroke="#000" stroke-width="0.7" stroke-opacity="0.21"/>
<path d="M35.1 56.0A66.1 66.1 0 0 1 -3.7 66.0" stroke="#000" stroke-width="0.8" stroke-opacity="0.37"/>
<path d="M-179.2 -29.0A181.6 181.6 0 0 1 -171.7 -59.0" stroke="#000" stroke-width="0.6" stroke-opacity="0.44"/>
<path d="M-21.3 155.1A156.6 156.6 0 0 1 -144.2 -61.1" stroke="#0f6a0f" stroke-width="1.1" stroke-opacity="0.07"/>
<path d="M-102.4 92.8A138.2 138.2 0 0 1 -137.4 -14.4" stroke="#000" stroke-width="1.0" stroke-opacity="0.35"/>
<path d="M-96.4 32.6A101.7 101.7 0 0 1 -58.1 -83.5" stroke="#0f6a0f" stroke-width="1.6" stroke-opacity="0.03"/>
<path d="M-139.3 -140.7A198.0 198.0 0 0 1 33.8 -195.1" stroke="#168016" stroke-width="0.8" stroke-opacity="0.09"/>
<path d="M5.6 -49.2A49.6 49.6 0 0 1 39.4 30.0" stroke="#0f6a0f" stroke-width="1.3" stroke-opacity="0.01"/>
<path d="M-163.4 -79.0A181.5 181.5 0 0 1 179.4 -27.8" stroke="#0f6a0f" stroke-width="1.5" stroke-opacity="0.13"/>
<path d="M-60.9 -155.5A167.0 167.0 0 0 1 51.1 -159.0" stroke="#000" stroke-width="0.9" stroke-opacity="0.39"/>
<path d="M77.0 -148.1A166.9 166.9 0 0 1 155.3 -61.3" stroke="#1a8a1a" stroke-width="1.1" stroke-opacity="0.11"/>
<path d="M70.3 0.0A70.3 70.3 0 0 1 3.4 70.2" stroke="#168016" stroke-width="1.0" stroke-opacity="0.02"/>
<path d="M49.7 -42.5A65.4 65.4 0 0 1 57.3 -31.4" stroke="#000" stroke-width="1.5" stroke-opacity="0.44"/>
<path d="M-75.9 28.7A81.2 81.2 0 0 1 -80.6 9.1" stroke="#000" stroke-width="0.7" stroke-opacity="0.48"/>
<path d="M52.5 97.3A110.5 110.5 0 0 1 18.8 108.9" stroke="#000" stroke-width="1.5" stroke-opacity="0.40"/>
<path d="M-52.3 -160.7A169.0 169.0 0 0 1 97.4 -138.1" stroke="#168016" stroke-width="1.0" stroke-opacity="0.05"/>
<path d="M68.3 20.8A71.4 71.4 0 0 1 49.3 51.6" stroke="#000" stroke-width="0.8" stroke-opacity="0.21"/>
<path d="M-17.2 -70.0A72.1 72.1 0 0 1 -7.5 -71.7" stroke="#000" stroke-width="0.8" stroke-opacity="0.24"/>
<path d="M-19.4 50.0A53.6 53.6 0 0 1 -31.9 43.1" stroke="#000" stroke-width="0.7" stroke-opacity="0.53"/>
<path d="M-9.4 209.3A209.5 209.5 0 0 1 -157.0 138.7" stroke="#0f6a0f" stroke-width="0.7" stroke-opacity="0.15"/>
<path d="M-69.1 128.1A145.5 145.5 0 0 1 -137.8 46.7" stroke="#000" stroke-width="1.0" stroke-opacity="0.53"/>
<path d="M49.9 -90.3A103.2 103.2 0 0 1 92.2 -46.4" stroke="#000" stroke-width="0.6" stroke-opacity="0.53"/>
<path d="M95.0 131.2A162.0 162.0 0 0 1 -24.4 160.1" stroke="#000" stroke-width="0.9" stroke-opacity="0.54"/>
<path d="M-148.3 19.2A149.6 149.6 0 0 1 -113.7 -97.1" stroke="#1a8a1a" stroke-width="0.9" stroke-opacity="0.13"/>
<path d="M60.2 -7.7A60.7 60.7 0 0 1 -42.0 43.8" stroke="#0f6a0f" stroke-width="0.9" stroke-opacity="0.02"/>
<path d="M-12.2 -167.1A167.5 167.5 0 0 1 148.5 -77.5" stroke="#1a8a1a" stroke-width="1.1" stroke-opacity="0.16"/>
<path d="M75.0 -42.9A86.4 86.4 0 0 1 83.8 -20.7" stroke="#000" stroke-width="1.3" stroke-opacity="0.44"/>
<path d="M-129.0 1.2A129.0 129.0 0 0 1 -87.6 -94.7" stroke="#000" stroke-width="0.8" stroke-opacity="0.22"/>
<path d="M150.4 -44.6A156.9 156.9 0 0 1 137.3 75.8" stroke="#000" stroke-width="1.1" stroke-opacity="0.40"/>
<path d="M92.3 87.8A127.4 127.4 0 0 1 -62.8 110.8" stroke="#168016" stroke-width="0.7" stroke-opacity="0.09"/>
<path d="M81.8 46.3A94.0 94.0 0 0 1 60.2 72.2" stroke="#0f6a0f" stroke-width="0.9" stroke-opacity="0.04"/>
<path d="M25.0 -122.0A124.5 124.5 0 0 1 104.0 -68.5" stroke="#0f6a0f" stroke-width="1.3" stroke-opacity="0.09"/>
<path d="M83.9 -72.6A111.0 111.0 0 0 1 110.8 6.7" stroke="#000" stroke-width="1.4" stroke-opacity="0.52"/>
<path d="M61.4 150.2A162.3 162.3 0 0 1 -45.5 155.8" stroke="#000" stroke-width="1.4" stroke-opacity="0.23"/>
<path d="M-160.1 28.3A162.6 162.6 0 0 1 -162.6 1.3" stroke="#000" stroke-width="1.3" stroke-opacity="0.32"/>
<path d="M52.6 -108.0A120.1 120.1 0 0 1 79.7 -89.9" stroke="#000" stroke-width="1.1" stroke-opacity="0.55"/>
<path d="M186.5 77.3A201.9 201.9 0 0 1 148.1 137.2" stroke="#168016" stroke-width="0.8" stroke-opacity="0.09"/>
<path d="M-77.4 90.9A119.4 119.4 0 0 1 -119.3 4.2" stroke="#168016" stroke-width="1.4" stroke-opacity="0.06"/>
<path d="M84.4 -23.0A87.4 87.4 0 0 1 85.3 19.1" stroke="#000" stroke-width="1.0" stroke-opacity="0.24"/>
<path d="M-88.7 -187.9A207.8 207.8 0 0 1 182.4 -99.7" stroke="#0f6a0f" stroke-width="1.4" stroke-opacity="0.12"/>
<path d="M5.2 -188.6A188.6 188.6 0 0 1 46.4 -182.8" stroke="#000" stroke-width="1.4" stroke-opacity="0.24"/>
<path d="M-189.5 20.0A190.5 190.5 0 0 1 -173.3 -79.2" stroke="#000" stroke-width="1.2" stroke-opacity="0.38"/>
<path d="M85.9 -47.2A98.0 98.0 0 0 1 97.7 7.5" stroke="#000" stroke-width="0.7" stroke-opacity="0.40"/>
<path d="M178.4 108.8A208.9 208.9 0 0 1 35.5 205.9" stroke="#000" stroke-width="1.4" stroke-opacity="0.37"/>
<path d="M66.8 103.1A122.9 122.9 0 0 1 -34.1 118.1" stroke="#000" stroke-width="1.5" stroke-opacity="0.27"/>
<path d="M-43.3 -80.6A91.5 91.5 0 0 1 89.4 19.4" stroke="#168016" stroke-width="1.2" stroke-opacity="0.06"/>
<path d="M110.9 151.8A188.0 188.0 0 0 1 92.7 163.6" stroke="#000" stroke-width="0.7" stroke-opacity="0.30"/>
<path d="M69.4 -29.7A75.5 75.5 0 0 1 75.1 -7.8" stroke="#000" stroke-width="1.6" stroke-opacity="0.36"/>
<path d="M-137.4 -80.7A159.4 159.4 0 0 1 -51.4 -150.9" stroke="#000" stroke-width="1.6" stroke-opacity="0.34"/>
<path d="M50.2 48.5A69.8 69.8 0 0 1 -0.2 69.8" stroke="#000" stroke-width="1.3" stroke-opacity="0.35"/>
<path d="M55.0 -170.4A179.0 179.0 0 0 1 172.5 47.8" stroke="#1a8a1a" stroke-width="1.4" stroke-opacity="0.04"/>
<path d="M-101.0 77.8A127.5 127.5 0 0 1 -127.3 -6.2" stroke="#000" stroke-width="1.6" stroke-opacity="0.43"/>
<path d="M-90.4 -77.1A118.8 118.8 0 0 1 -81.3 -86.6" stroke="#000" stroke-width="1.1" stroke-opacity="0.39"/>
<path d="M-1.8 -178.6A178.6 178.6 0 0 1 125.9 -126.7" stroke="#000" stroke-width="0.8" stroke-opacity="0.27"/>
<path d="M1.1 153.0A153.0 153.0 0 0 1 -139.2 -63.6" stroke="#168016" stroke-width="1.3" stroke-opacity="0.03"/>
<path d="M-183.5 -9.3A183.8 183.8 0 0 1 -131.2 -128.6" stroke="#000" stroke-width="1.1" stroke-opacity="0.48"/>
<path d="M-112.3 -44.1A120.6 120.6 0 0 1 -104.5 -60.2" stroke="#000" stroke-width="1.2" stroke-opacity="0.42"/>
<path d="M-149.8 -143.9A207.7 207.7 0 0 1 128.2 -163.4" stroke="#0f6a0f" stroke-width="1.0" stroke-opacity="0.20"/>
<path d="M-115.8 121.3A167.8 167.8 0 0 1 -135.9 98.3" stroke="#000" stroke-width="1.0" stroke-opacity="0.37"/>
<path d="M-100.9 -77.5A127.2 127.2 0 0 1 63.6 -110.2" stroke="#1a8a1a" stroke-width="1.3" stroke-opacity="0.03"/>
<path d="M-37.9 187.1A190.9 190.9 0 0 1 -127.6 -142.0" stroke="#0f6a0f" stroke-width="1.4" stroke-opacity="0.15"/>
<path d="M-9.9 -141.7A142.1 142.1 0 0 1 12.3 -141.6" stroke="#000" stroke-width="1.1" stroke-opacity="0.53"/>
<path d="M-114.1 137.9A179.0 179.0 0 0 1 -178.4 14.2" stroke="#000" stroke-width="0.6" stroke-opacity="0.39"/>
<path d="M72.8 -50.7A88.7 88.7 0 0 1 86.7 -18.9" stroke="#000" stroke-width="1.5" stroke-opacity="0.38"/>
<path d="M138.7 112.4A178.5 178.5 0 0 1 86.6 156.1" stroke="#0f6a0f" stroke-width="1.5" stroke-opacity="0.15"/>
<path d="M-167.9 -95.4A193.1 193.1 0 0 1 -150.9 -120.4" stroke="#000" stroke-width="1.1" stroke-opacity="0.50"/>
<path d="M-115.1 46.3A124.1 124.1 0 0 1 -64.4 -106.0" stroke="#1a8a1a" stroke-width="1.5" stroke-opacity="0.05"/>
<path d="M27.6 -127.0A129.9 129.9 0 0 1 68.4 -110.4" stroke="#000" stroke-width="1.0" stroke-opacity="0.27"/>
<path d="M-73.7 -61.3A95.8 95.8 0 0 1 93.1 -22.6" stroke="#168016" stroke-width="1.1" stroke-opacity="0.04"/>
<path d="M107.5 83.0A135.8 135.8 0 0 1 -42.8 128.9" stroke="#1a8a1a" stroke-width="0.7" stroke-opacity="0.07"/>
<path d="M-142.3 151.6A207.9 207.9 0 0 1 -186.4 92.0" stroke="#000" stroke-width="0.9" stroke-opacity="0.53"/>
<path d="M170.9 -111.6A204.1 204.1 0 0 1 165.5 119.5" stroke="#168016" stroke-width="0.7" stroke-opacity="0.11"/>
<path d="M84.1 138.8A162.3 162.3 0 0 1 39.8 157.3" stroke="#000" stroke-width="0.9" stroke-opacity="0.20"/>
<path d="M43.1 153.3A159.2 159.2 0 0 1 -73.1 141.5" stroke="#000" stroke-width="1.3" stroke-opacity="0.50"/>
<path d="M-5.9 -201.4A201.5 201.5 0 0 1 29.1 -199.4" stroke="#000" stroke-width="1.0" stroke-opacity="0.35"/>
<path d="M-204.0 -38.9A207.7 207.7 0 0 1 -184.2 -95.8" stroke="#000" stroke-width="1.1" stroke-opacity="0.36"/>
<path d="M-117.8 -3.9A117.9 117.9 0 0 1 18.3 -116.5" stroke="#168016" stroke-width="1.3" stroke-opacity="0.03"/>
<path d="M-101.4 29.1A105.5 105.5 0 0 1 -104.9 11.2" stroke="#000" stroke-width="1.6" stroke-opacity="0.47"/>
<path d="M-160.7 74.9A177.3 177.3 0 0 1 -176.7 14.8" stroke="#000" stroke-width="1.3" stroke-opacity="0.41"/>
<path d="M191.2 -71.5A204.1 204.1 0 0 1 204.1 -5.7" stroke="#000" stroke-width="1.1" stroke-opacity="0.43"/>
<path d="M-148.2 -79.7A168.3 168.3 0 0 1 167.1 -19.9" stroke="#1a8a1a" stroke-width="0.8" stroke-opacity="0.13"/>
<path d="M137.5 133.4A191.5 191.5 0 0 1 -174.6 78.8" stroke="#168016" stroke-width="0.8" stroke-opacity="0.10"/>
<path d="M-48.7 157.3A164.7 164.7 0 0 1 -163.8 -17.5" stroke="#168016" stroke-width="1.0" stroke-opacity="0.11"/>
<path d="M-130.9 37.4A136.1 136.1 0 0 1 -126.7 -49.7" stroke="#000" stroke-width="1.0" stroke-opacity="0.49"/>
<path d="M63.7 -0.8A63.7 63.7 0 0 1 -6.7 63.4" stroke="#0f6a0f" stroke-width="1.0" stroke-opacity="0.01"/>
<path d="M-36.8 190.0A193.5 193.5 0 0 1 -80.8 175.8" stroke="#000" stroke-width="1.3" stroke-opacity="0.32"/>
<path d="M-101.5 174.0A201.5 201.5 0 0 1 -158.3 124.6" stroke="#000" stroke-width="0.7" stroke-opacity="0.23"/>
<path d="M50.9 86.7A100.5 100.5 0 0 1 2.9 100.5" stroke="#0f6a0f" stroke-width="1.6" stroke-opacity="0.02"/>
<path d="M-38.1 172.8A177.0 177.0 0 0 1 -99.2 146.6" stroke="#000" stroke-width="1.2" stroke-opacity="0.26"/>
<path d="M137.6 45.7A145.0 145.0 0 0 1 67.8 128.2" stroke="#000" stroke-width="0.7" stroke-opacity="0.35"/>
<path d="M-34.4 -58.1A67.5 67.5 0 0 1 6.0 -67.3" stroke="#0f6a0f" stroke-width="0.6" stroke-opacity="0.01"/>
<path d="M163.5 -11.0A163.9 163.9 0 0 1 145.6 75.2" stroke="#000" stroke-width="0.8" stroke-opacity="0.47"/>
<path d="M-4.7 108.2A108.3 108.3 0 0 1 -100.7 39.8" stroke="#168016" stroke-width="0.7" stroke-opacity="0.04"/>
<path d="M188.3 6.7A188.4 188.4 0 0 1 149.5 114.7" stroke="#000" stroke-width="1.0" stroke-opacity="0.38"/>
<path d="M188.6 -73.5A202.5 202.5 0 0 1 20.8 201.4" stroke="#1a8a1a" stroke-width="0.7" stroke-opacity="0.16"/>
<path d="M-16.4 97.5A98.9 98.9 0 0 1 -98.2 11.7" stroke="#1a8a1a" stroke-width="1.5" stroke-opacity="0.03"/>
<path d="M-69.5 -80.3A106.2 106.2 0 0 1 -46.4 -95.6" stroke="#000" stroke-width="1.2" stroke-opacity="0.26"/>
<path d="M-113.4 -154.9A191.9 191.9 0 0 1 -41.0 -187.5" stroke="#1a8a1a" stroke-width="1.5" stroke-opacity="0.09"/>
<path d="M61.0 -50.4A79.1 79.1 0 0 1 79.1 2.0" stroke="#000" stroke-width="0.9" stroke-opacity="0.30"/>
<path d="M155.6 133.9A205.3 205.3 0 0 1 6.0 205.2" stroke="#000" stroke-width="1.0" stroke-opacity="0.48"/>
<path d="M-74.7 28.1A79.8 79.8 0 0 1 -79.6 5.7" stroke="#000" stroke-width="0.7" stroke-opacity="0.47"/>
<path d="M140.5 123.0A186.7 186.7 0 0 1 76.7 170.3" stroke="#000" stroke-width="1.0" stroke-opacity="0.45"/>
<path d="M105.5 24.9A108.4 108.4 0 0 1 89.3 61.5" stroke="#168016" stroke-width="1.0" stroke-opacity="0.02"/>
<path d="M-62.1 51.4A80.6 80.6 0 0 1 -80.2 8.2" stroke="#1a8a1a" stroke-width="1.3" stroke-opacity="0.01"/>
<path d="M120.7 -44.6A128.6 128.6 0 0 1 -64.9 111.1" stroke="#1a8a1a" stroke-width="0.6" stroke-opacity="0.08"/>
<path d="M-200.1 -17.5A200.8 200.8 0 0 1 -193.6 -53.6" stroke="#000" stroke-width="1.1" stroke-opacity="0.44"/>
<path d="M203.4 -39.4A207.2 207.2 0 0 1 -62.3 197.6" stroke="#1a8a1a" stroke-width="0.8" stroke-opacity="0.22"/>
<path d="M-8.6 158.8A159.0 159.0 0 0 1 -123.7 99.9" stroke="#000" stroke-width="0.9" stroke-opacity="0.21"/>
<path d="M-202.7 -26.7A204.5 204.5 0 0 1 -160.9 -126.2" stroke="#000" stroke-width="1.3" stroke-opacity="0.45"/>
<path d="M-189.6 -7.8A189.8 189.8 0 0 1 128.5 -139.7" stroke="#1a8a1a" stroke-width="1.2" stroke-opacity="0.19"/>
<path d="M-84.9 20.2A87.3 87.3 0 0 1 -84.1 -23.5" stroke="#000" stroke-width="1.5" stroke-opacity="0.25"/>
<path d="M38.2 -43.0A57.5 57.5 0 0 1 47.9 31.9" stroke="#0f6a0f" stroke-width="1.1" stroke-opacity="0.02"/>
<path d="M19.1 -171.1A172.2 172.2 0 0 1 71.1 -156.8" stroke="#000" stroke-width="1.4" stroke-opacity="0.52"/>
<path d="M41.5 182.1A186.8 186.8 0 0 1 -181.1 45.6" stroke="#168016" stroke-width="0.9" stroke-opacity="0.06"/>
<path d="M-95.2 76.7A122.3 122.3 0 0 1 -121.7 -11.6" stroke="#0f6a0f" stroke-width="1.5" stroke-opacity="0.08"/>
<path d="M106.5 -162.1A194.0 194.0 0 0 1 181.1 69.5" stroke="#168016" stroke-width="0.9" stroke-opacity="0.05"/>
<path d="M124.2 -55.5A136.0 136.0 0 0 1 131.5 -34.9" stroke="#000" stroke-width="1.6" stroke-opacity="0.52"/>
<path d="M-9.2 148.4A148.6 148.6 0 0 1 -127.6 76.2" stroke="#168016" stroke-width="1.2" stroke-opacity="0.03"/>
<path d="M-119.4 -23.2A121.6 121.6 0 0 1 -79.1 -92.3" stroke="#000" stroke-width="1.2" stroke-opacity="0.40"/>
<path d="M-26.8 60.8A66.5 66.5 0 0 1 -57.4 33.6" stroke="#000" stroke-width="1.2" stroke-opacity="0.27"/>
<path d="M-24.1 -48.6A54.2 54.2 0 0 1 -6.0 -53.9" stroke="#000" stroke-width="0.7" stroke-opacity="0.28"/>
<path d="M95.4 170.9A195.7 195.7 0 0 1 -20.2 194.7" stroke="#000" stroke-width="1.2" stroke-opacity="0.50"/>
<path d="M78.0 -32.7A84.5 84.5 0 0 1 23.0 81.3" stroke="#1a8a1a" stroke-width="1.2" stroke-opacity="0.03"/>
<path d="M-119.7 116.9A167.3 167.3 0 0 1 -143.8 -85.5" stroke="#1a8a1a" stroke-width="0.7" stroke-opacity="0.16"/>
<path d="M-158.9 -128.8A204.6 204.6 0 0 1 194.5 -63.6" stroke="#0f6a0f" stroke-width="1.2" stroke-opacity="0.06"/>
<path d="M128.1 116.9A173.4 173.4 0 0 1 15.7 172.7" stroke="#000" stroke-width="0.9" stroke-opacity="0.46"/>
<path d="M142.5 -89.6A168.3 168.3 0 0 1 158.2 -57.5" stroke="#000" stroke-width="1.0" stroke-opacity="0.23"/>
<path d="M-178.7 -25.9A180.6 180.6 0 0 1 -110.1 -143.2" stroke="#000" stroke-width="0.9" stroke-opacity="0.42"/>
<path d="M100.0 135.2A168.2 168.2 0 0 1 -30.4 165.4" stroke="#000" stroke-width="1.0" stroke-opacity="0.37"/>
<path d="M-70.7 -99.1A121.7 121.7 0 0 1 62.2 -104.6" stroke="#0f6a0f" stroke-width="1.2" stroke-opacity="0.03"/>
<path d="M112.7 81.5A139.1 139.1 0 0 1 -78.1 115.1" stroke="#0f6a0f" stroke-width="1.3" stroke-opacity="0.03"/>
<path d="M28.6 -37.4A47.1 47.1 0 0 1 42.9 -19.4" stroke="#000" stroke-width="0.9" stroke-opacity="0.51"/>
<path d="M133.4 -152.9A202.9 202.9 0 0 1 202.4 -14.6" stroke="#1a8a1a" stroke-width="1.4" stroke-opacity="0.07"/>
<path d="M-172.6 -34.0A175.9 175.9 0 0 1 -26.3 -173.9" stroke="#168016" stroke-width="1.3" stroke-opacity="0.11"/>
<path d="M-152.6 -82.6A173.5 173.5 0 0 1 13.5 -173.0" stroke="#168016" stroke-width="1.4" stroke-opacity="0.16"/>
<path d="M-200.6 -51.7A207.2 207.2 0 0 1 -123.5 -166.4" stroke="#000" stroke-width="0.9" stroke-opacity="0.24"/>
<path d="M-176.6 15.0A177.2 177.2 0 0 1 -160.4 -75.4" stroke="#168016" stroke-width="1.6" stroke-opacity="0.04"/>
<path d="M-69.8 -163.3A177.6 177.6 0 0 1 42.4 -172.5" stroke="#000" stroke-width="1.1" stroke-opacity="0.48"/>
<path d="M56.4 -8.2A57.0 57.0 0 0 1 54.6 16.3" stroke="#000" stroke-width="1.6" stroke-opacity="0.47"/>
<path d="M71.6 183.8A197.3 197.3 0 0 1 -171.3 -97.9" stroke="#168016" stroke-width="1.5" stroke-opacity="0.17"/>
<path d="M-94.5 25.7A98.0 98.0 0 0 1 -60.4 -77.1" stroke="#1a8a1a" stroke-width="1.5" stroke-opacity="0.02"/>
<path d="M23.7 176.8A178.4 178.4 0 0 1 -91.8 153.0" stroke="#000" stroke-width="1.3" stroke-opacity="0.52"/>
<path d="M96.6 59.2A113.3 113.3 0 0 1 -30.1 109.2" stroke="#168016" stroke-width="1.6" stroke-opacity="0.05"/>
<path d="M132.2 -121.1A179.3 179.3 0 0 1 144.3 -106.5" stroke="#000" stroke-width="1.1" stroke-opacity="0.51"/>
<path d="M-42.7 164.9A170.4 170.4 0 0 1 -130.5 -109.5" stroke="#1a8a1a" stroke-width="1.3" stroke-opacity="0.04"/>
<path d="M93.6 115.6A148.7 148.7 0 0 1 22.9 146.9" stroke="#000" stroke-width="1.3" stroke-opacity="0.22"/>
<path d="M-44.4 -125.0A132.7 132.7 0 0 1 30.8 -129.0" stroke="#000" stroke-width="1.1" stroke-opacity="0.26"/>
<path d="M93.8 142.6A170.7 170.7 0 0 1 -148.2 84.7" stroke="#1a8a1a" stroke-width="0.6" stroke-opacity="0.07"/>
<path d="M129.3 -141.2A191.4 191.4 0 0 1 181.6 -60.5" stroke="#000" stroke-width="1.6" stroke-opacity="0.25"/>
<path d="M131.3 73.2A150.3 150.3 0 0 1 70.8 132.6" stroke="#000" stroke-width="1.2" stroke-opacity="0.23"/>
<path d="M-23.9 80.5A84.0 84.0 0 0 1 -57.1 61.6" stroke="#000" stroke-width="1.4" stroke-opacity="0.28"/>
<path d="M-89.6 135.2A162.2 162.2 0 0 1 -146.7 69.2" stroke="#000" stroke-width="1.3" stroke-opacity="0.27"/>
<path d="M-187.6 -54.3A195.3 195.3 0 0 1 -105.3 -164.5" stroke="#000" stroke-width="1.4" stroke-opacity="0.50"/>
<path d="M-181.6 -21.3A182.8 182.8 0 0 1 -139.9 -117.7" stroke="#000" stroke-width="1.2" stroke-opacity="0.51"/>
<path d="M-58.3 -62.0A85.1 85.1 0 0 1 -31.5 -79.1" stroke="#168016" stroke-width="0.7" stroke-opacity="0.05"/>
<path d="M88.2 -30.1A93.2 93.2 0 0 1 81.7 44.9" stroke="#000" stroke-width="0.7" stroke-opacity="0.45"/>
<path d="M-136.5 -80.7A158.5 158.5 0 0 1 106.3 -117.6" stroke="#0f6a0f" stroke-width="1.4" stroke-opacity="0.12"/>
<path d="M51.4 -145.2A154.1 154.1 0 0 1 141.0 -62.1" stroke="#000" stroke-width="1.0" stroke-opacity="0.27"/>
<path d="M-45.5 -124.6A132.7 132.7 0 0 1 46.9 -124.1" stroke="#000" stroke-width="0.9" stroke-opacity="0.53"/>
<path d="M24.6 -161.7A163.5 163.5 0 0 1 112.0 -119.2" stroke="#000" stroke-width="0.8" stroke-opacity="0.52"/>
<path d="M-29.5 74.1A79.7 79.7 0 0 1 -74.9 27.3" stroke="#000" stroke-width="1.5" stroke-opacity="0.51"/>
<path d="M-191.2 -39.8A195.3 195.3 0 0 1 75.8 -180.0" stroke="#1a8a1a" stroke-width="0.8" stroke-opacity="0.09"/>
<path d="M-39.0 -115.6A122.0 122.0 0 0 1 109.5 53.9" stroke="#168016" stroke-width="1.4" stroke-opacity="0.04"/>
<path d="M-41.4 28.4A50.2 50.2 0 0 1 -46.0 20.2" stroke="#000" stroke-width="0.9" stroke-opacity="0.34"/>
<path d="M-162.9 -10.6A163.3 163.3 0 0 1 3.8 -163.2" stroke="#1a8a1a" stroke-width="1.1" stroke-opacity="0.10"/>
<path d="M-176.2 24.8A177.9 177.9 0 0 1 66.9 -164.8" stroke="#0f6a0f" stroke-width="0.8" stroke-opacity="0.09"/>
<path d="M-124.4 84.2A150.2 150.2 0 0 1 -108.4 -104.0" stroke="#1a8a1a" stroke-width="1.4" stroke-opacity="0.13"/>
<path d="M-131.3 38.2A136.8 136.8 0 0 1 -66.8 -119.4" stroke="#0f6a0f" stroke-width="0.8" stroke-opacity="0.09"/>
<path d="M-30.2 -59.3A66.5 66.5 0 0 1 3.9 -66.4" stroke="#000" stroke-width="1.4" stroke-opacity="0.24"/>
<path d="M-110.5 174.4A206.5 206.5 0 0 1 -197.5 60.2" stroke="#000" stroke-width="1.4" stroke-opacity="0.34"/>
<path d="M-157.8 4.1A157.9 157.9 0 0 1 -145.3 -61.8" stroke="#000" stroke-width="1.6" stroke-opacity="0.27"/>
<path d="M-51.9 50.8A72.7 72.7 0 0 1 -67.7 26.4" stroke="#1a8a1a" stroke-width="1.5" stroke-opacity="0.01"/>
<path d="M-173.3 -19.8A174.5 174.5 0 0 1 31.3 -171.6" stroke="#168016" stroke-width="1.5" stroke-opacity="0.07"/>
<path d="M-195.5 -38.5A199.3 199.3 0 0 1 -173.2 -98.5" stroke="#000" stroke-width="0.9" stroke-opacity="0.49"/>
<path d="M-129.6 -3.8A129.7 129.7 0 0 1 -115.3 -59.3" stroke="#000" stroke-width="1.1" stroke-opacity="0.34"/>
<path d="M-13.7 134.9A135.6 135.6 0 0 1 -80.8 108.9" stroke="#000" stroke-width="1.1" stroke-opacity="0.50"/>
<path d="M57.1 28.7A63.9 63.9 0 0 1 -54.8 33.0" stroke="#1a8a1a" stroke-width="1.6" stroke-opacity="0.01"/>
<path d="M-140.3 2.8A140.3 140.3 0 0 1 -84.0 -112.4" stroke="#1a8a1a" stroke-width="1.2" stroke-opacity="0.03"/>
<path d="M-116.3 19.6A118.0 118.0 0 0 1 -96.5 -67.8" stroke="#000" stroke-width="1.4" stroke-opacity="0.41"/>
<path d="M-0.9 -178.7A178.7 178.7 0 0 1 171.6 49.8" stroke="#168016" stroke-width="0.8" stroke-opacity="0.11"/>
<path d="M68.7 -128.1A145.3 145.3 0 0 1 73.4 125.4" stroke="#1a8a1a" stroke-width="1.1" stroke-opacity="0.03"/>
<path d="M-40.1 133.7A139.5 139.5 0 0 1 -111.0 -84.5" stroke="#0f6a0f" stroke-width="1.3" stroke-opacity="0.03"/>
<path d="M143.5 36.9A148.1 148.1 0 0 1 -50.5 139.2" stroke="#1a8a1a" stroke-width="0.9" stroke-opacity="0.09"/>
<path d="M144.9 -31.3A148.3 148.3 0 0 1 136.1 58.7" stroke="#000" stroke-width="0.9" stroke-opacity="0.52"/>
<path d="M-79.3 -181.7A198.2 198.2 0 0 1 -58.2 -189.5" stroke="#000" stroke-width="0.9" stroke-opacity="0.20"/>
<path d="M-90.3 127.7A156.3 156.3 0 0 1 -136.6 76.0" stroke="#1a8a1a" stroke-width="1.4" stroke-opacity="0.11"/>
<path d="M13.4 192.8A193.2 193.2 0 0 1 -67.5 181.1" stroke="#0f6a0f" stroke-width="0.7" stroke-opacity="0.06"/>
<path d="M12.2 -63.6A64.8 64.8 0 0 1 44.3 47.2" stroke="#1a8a1a" stroke-width="0.8" stroke-opacity="0.03"/>
<path d="M-86.8 122.7A150.3 150.3 0 0 1 -133.8 68.5" stroke="#000" stroke-width="1.0" stroke-opacity="0.26"/>
<path d="M102.1 -75.7A127.1 127.1 0 0 1 115.6 -52.8" stroke="#000" stroke-width="1.1" stroke-opacity="0.22"/>
<path d="M58.2 197.2A205.6 205.6 0 0 1 -87.4 186.1" stroke="#000" stroke-width="1.1" stroke-opacity="0.55"/>
<path d="M-139.6 -48.6A147.8 147.8 0 0 1 -111.1 -97.4" stroke="#000" stroke-width="1.0" stroke-opacity="0.29"/>
<path d="M124.2 -117.7A171.1 171.1 0 0 1 117.5 124.4" stroke="#168016" stroke-width="1.0" stroke-opacity="0.07"/>
<path d="M90.1 167.5A190.2 190.2 0 0 1 -51.9 183.0" stroke="#000" stroke-width="1.6" stroke-opacity="0.30"/>
<path d="M-128.1 156.7A202.4 202.4 0 0 1 -71.4 -189.4" stroke="#168016" stroke-width="1.4" stroke-opacity="0.14"/>
<path d="M26.3 207.0A208.6 208.6 0 0 1 -17.4 207.9" stroke="#000" stroke-width="0.6" stroke-opacity="0.36"/>
<path d="M145.0 -110.0A182.0 182.0 0 0 1 150.2 102.7" stroke="#168016" stroke-width="1.2" stroke-opacity="0.10"/>
<path d="M105.0 150.7A183.7 183.7 0 0 1 76.5 167.0" stroke="#000" stroke-width="1.3" stroke-opacity="0.40"/>
</g>
<g filter="url(#b2b)"><path d="M-0.3 -101.0A101.0 101.0 0 0 1 5.5 -100.8" stroke="#1a9a1a" stroke-width="7" stroke-opacity="0.02"/><path d="M5.0 -100.9A101.0 101.0 0 0 1 10.8 -100.4" stroke="#1a9a1a" stroke-width="7" stroke-opacity="0.07"/><path d="M10.3 -100.5A101.0 101.0 0 0 1 16.1 -99.7" stroke="#1a9a1a" stroke-width="7" stroke-opacity="0.12"/><path d="M15.5 -99.8A101.0 101.0 0 0 1 21.3 -98.7" stroke="#1a9a1a" stroke-width="7" stroke-opacity="0.15"/><path d="M20.7 -98.8A101.0 101.0 0 0 1 26.4 -97.5" stroke="#1a9a1a" stroke-width="7" stroke-opacity="0.19"/><path d="M25.9 -97.6A101.0 101.0 0 0 1 31.5 -96.0" stroke="#1a9a1a" stroke-width="7" stroke-opacity="0.22"/><path d="M31.0 -96.1A101.0 101.0 0 0 1 36.4 -94.2" stroke="#1a9a1a" stroke-width="7" stroke-opacity="0.25"/><path d="M35.9 -94.4A101.0 101.0 0 0 1 41.3 -92.2" stroke="#1a9a1a" stroke-width="7" stroke-opacity="0.27"/><path d="M40.8 -92.4A101.0 101.0 0 0 1 46.1 -89.9" stroke="#1a9a1a" stroke-width="7" stroke-opacity="0.28"/><path d="M45.6 -90.1A100.8 100.8 0 0 1 50.5 -87.0" stroke="#1a9a1a" stroke-width="7" stroke-opacity="0.28"/><path d="M50.1 -87.3A100.4 100.4 0 0 1 54.8 -83.9" stroke="#1a9a1a" stroke-width="7" stroke-opacity="0.26"/><path d="M54.4 -84.2A100.0 100.0 0 0 1 58.9 -80.6" stroke="#1a9a1a" stroke-width="7" stroke-opacity="0.23"/><path d="M58.5 -80.9A99.6 99.6 0 0 1 62.8 -77.1" stroke="#1a9a1a" stroke-width="7" stroke-opacity="0.20"/><path d="M62.4 -77.4A99.2 99.2 0 0 1 66.4 -73.4" stroke="#1a9a1a" stroke-width="7" stroke-opacity="0.17"/><path d="M66.1 -73.8A98.8 98.8 0 0 1 69.9 -69.5" stroke="#1a9a1a" stroke-width="7" stroke-opacity="0.13"/><path d="M69.6 -69.9A98.4 98.4 0 0 1 73.2 -65.5" stroke="#1a9a1a" stroke-width="7" stroke-opacity="0.10"/><path d="M72.8 -65.9A98.0 98.0 0 0 1 76.2 -61.4" stroke="#1a9a1a" stroke-width="7" stroke-opacity="0.07"/><path d="M75.9 -61.8A97.6 97.6 0 0 1 79.0 -57.1" stroke="#1a9a1a" stroke-width="7" stroke-opacity="0.05"/><path d="M78.7 -57.5A97.2 97.2 0 0 1 81.5 -52.6" stroke="#1a9a1a" stroke-width="7" stroke-opacity="0.03"/><path d="M81.3 -53.1A96.9 96.9 0 0 1 83.8 -48.1" stroke="#1a9a1a" stroke-width="7" stroke-opacity="0.02"/><path d="M-139.0 -2.1A139.0 139.0 0 0 1 -138.6 -10.1" stroke="#22cc22" stroke-width="6" stroke-opacity="0.02"/><path d="M-138.7 -9.3A139.0 139.0 0 0 1 -137.9 -17.3" stroke="#22cc22" stroke-width="6" stroke-opacity="0.03"/><path d="M-138.0 -16.6A139.0 139.0 0 0 1 -136.8 -24.5" stroke="#22cc22" stroke-width="6" stroke-opacity="0.06"/><path d="M-137.0 -23.8A139.0 139.0 0 0 1 -135.4 -31.6" stroke="#22cc22" stroke-width="6" stroke-opacity="0.10"/><path d="M-135.5 -30.9A139.0 139.0 0 0 1 -133.5 -38.7" stroke="#22cc22" stroke-width="6" stroke-opacity="0.15"/><path d="M-133.7 -38.0A139.0 139.0 0 0 1 -131.3 -45.6" stroke="#22cc22" stroke-width="6" stroke-opacity="0.19"/><path d="M-131.5 -44.9A139.0 139.0 0 0 1 -128.7 -52.4" stroke="#22cc22" stroke-width="6" stroke-opacity="0.22"/><path d="M-129.0 -51.7A139.0 139.0 0 0 1 -125.8 -59.1" stroke="#22cc22" stroke-width="6" stroke-opacity="0.22"/><path d="M-126.1 -58.4A139.0 139.0 0 0 1 -122.6 -65.6" stroke="#22cc22" stroke-width="6" stroke-opacity="0.19"/><path d="M-122.9 -64.9A139.0 139.0 0 0 1 -119.0 -71.9" stroke="#22cc22" stroke-width="6" stroke-opacity="0.15"/><path d="M-119.3 -71.3A139.0 139.0 0 0 1 -115.0 -78.0" stroke="#22cc22" stroke-width="6" stroke-opacity="0.10"/><path d="M-115.4 -77.4A139.0 139.0 0 0 1 -110.8 -83.9" stroke="#22cc22" stroke-width="6" stroke-opacity="0.06"/><path d="M-111.2 -83.4A139.0 139.0 0 0 1 -106.2 -89.6" stroke="#22cc22" stroke-width="6" stroke-opacity="0.03"/><path d="M-106.7 -89.1A139.0 139.0 0 0 1 -101.4 -95.1" stroke="#22cc22" stroke-width="6" stroke-opacity="0.02"/><path d="M81.3 145.8A167.0 167.0 0 0 1 72.8 150.3" stroke="#1a9a1a" stroke-width="6" stroke-opacity="0.02"/><path d="M73.6 149.9A167.0 167.0 0 0 1 64.8 153.9" stroke="#1a9a1a" stroke-width="6" stroke-opacity="0.04"/><path d="M65.7 153.6A167.0 167.0 0 0 1 56.7 157.1" stroke="#1a9a1a" stroke-width="6" stroke-opacity="0.06"/><path d="M57.5 156.8A167.0 167.0 0 0 1 48.4 159.8" stroke="#1a9a1a" stroke-width="6" stroke-opacity="0.09"/><path d="M49.2 159.6A167.0 167.0 0 0 1 40.0 162.1" stroke="#1a9a1a" stroke-width="6" stroke-opacity="0.12"/><path d="M40.8 161.9A167.0 167.0 0 0 1 31.4 164.0" stroke="#1a9a1a" stroke-width="6" stroke-opacity="0.15"/><path d="M32.3 163.8A167.0 167.0 0 0 1 22.8 165.4" stroke="#1a9a1a" stroke-width="6" stroke-opacity="0.19"/><path d="M23.7 165.3A167.0 167.0 0 0 1 14.1 166.4" stroke="#1a9a1a" stroke-width="6" stroke-opacity="0.22"/><path d="M15.0 166.3A167.0 167.0 0 0 1 5.4 166.9" stroke="#1a9a1a" stroke-width="6" stroke-opacity="0.24"/><path d="M6.3 166.9A167.0 167.0 0 0 1 -3.4 167.0" stroke="#1a9a1a" stroke-width="6" stroke-opacity="0.25"/><path d="M-2.5 167.0A167.0 167.0 0 0 1 -12.1 166.6" stroke="#1a9a1a" stroke-width="6" stroke-opacity="0.25"/><path d="M-11.2 166.6A167.0 167.0 0 0 1 -20.8 165.7" stroke="#1a9a1a" stroke-width="6" stroke-opacity="0.23"/><path d="M-19.9 165.8A167.0 167.0 0 0 1 -29.4 164.4" stroke="#1a9a1a" stroke-width="6" stroke-opacity="0.20"/><path d="M-28.6 164.5A167.0 167.0 0 0 1 -38.0 162.6" stroke="#1a9a1a" stroke-width="6" stroke-opacity="0.17"/><path d="M-37.1 162.8A167.0 167.0 0 0 1 -46.5 160.4" stroke="#1a9a1a" stroke-width="6" stroke-opacity="0.13"/><path d="M-45.6 160.7A167.0 167.0 0 0 1 -54.8 157.8" stroke="#1a9a1a" stroke-width="6" stroke-opacity="0.10"/><path d="M-54.0 158.0A167.0 167.0 0 0 1 -63.0 154.7" stroke="#1a9a1a" stroke-width="6" stroke-opacity="0.07"/><path d="M-62.2 155.0A167.0 167.0 0 0 1 -71.0 151.2" stroke="#1a9a1a" stroke-width="6" stroke-opacity="0.05"/><path d="M-70.2 151.5A167.0 167.0 0 0 1 -78.8 147.2" stroke="#1a9a1a" stroke-width="6" stroke-opacity="0.03"/></g>
<g filter="url(#b1b)"><path d="M3.3 -100.9A101.0 101.0 0 0 1 9.1 -100.6" stroke="#22cc22" stroke-width="3.4" stroke-opacity="0.05"/><path d="M8.5 -100.6A101.0 101.0 0 0 1 14.3 -100.0" stroke="#22cc22" stroke-width="3.4" stroke-opacity="0.21"/><path d="M13.8 -100.1A101.0 101.0 0 0 1 19.5 -99.1" stroke="#22cc22" stroke-width="3.4" stroke-opacity="0.37"/><path d="M19.0 -99.2A101.0 101.0 0 0 1 24.7 -97.9" stroke="#22cc22" stroke-width="3.4" stroke-opacity="0.46"/><path d="M24.2 -98.1A101.0 101.0 0 0 1 29.8 -96.5" stroke="#22cc22" stroke-width="3.4" stroke-opacity="0.56"/><path d="M29.3 -96.7A101.0 101.0 0 0 1 34.8 -94.8" stroke="#22cc22" stroke-width="3.4" stroke-opacity="0.65"/><path d="M34.3 -95.0A101.0 101.0 0 0 1 39.7 -92.9" stroke="#22cc22" stroke-width="3.4" stroke-opacity="0.70"/><path d="M39.2 -93.1A101.0 101.0 0 0 1 44.5 -90.7" stroke="#22cc22" stroke-width="3.4" stroke-opacity="0.72"/><path d="M44.0 -90.9A100.9 100.9 0 0 1 49.1 -88.0" stroke="#22cc22" stroke-width="3.4" stroke-opacity="0.69"/><path d="M48.6 -88.3A100.5 100.5 0 0 1 53.4 -84.9" stroke="#22cc22" stroke-width="3.4" stroke-opacity="0.62"/><path d="M53.0 -85.3A100.1 100.1 0 0 1 57.5 -81.7" stroke="#22cc22" stroke-width="3.4" stroke-opacity="0.53"/><path d="M57.1 -82.0A99.8 99.8 0 0 1 61.5 -78.3" stroke="#22cc22" stroke-width="3.4" stroke-opacity="0.43"/><path d="M61.1 -78.6A99.4 99.4 0 0 1 65.2 -74.6" stroke="#22cc22" stroke-width="3.4" stroke-opacity="0.33"/><path d="M64.9 -75.0A99.0 99.0 0 0 1 68.8 -70.9" stroke="#22cc22" stroke-width="3.4" stroke-opacity="0.25"/><path d="M68.4 -71.2A98.6 98.6 0 0 1 72.1 -66.9" stroke="#22cc22" stroke-width="3.4" stroke-opacity="0.19"/><path d="M71.8 -67.3A98.2 98.2 0 0 1 75.2 -62.8" stroke="#22cc22" stroke-width="3.4" stroke-opacity="0.15"/><path d="M74.9 -63.2A97.8 97.8 0 0 1 78.1 -58.5" stroke="#22cc22" stroke-width="3.4" stroke-opacity="0.12"/><path d="M77.8 -58.9A97.4 97.4 0 0 1 80.7 -54.1" stroke="#22cc22" stroke-width="3.4" stroke-opacity="0.10"/><path d="M80.4 -54.6A97.0 97.0 0 0 1 83.1 -49.6" stroke="#22cc22" stroke-width="3.4" stroke-opacity="0.09"/><path d="M82.9 -50.1A96.6 96.6 0 0 1 85.2 -45.0" stroke="#22cc22" stroke-width="3.4" stroke-opacity="0.09"/><path d="M85.0 -45.5A96.2 96.2 0 0 1 87.1 -40.3" stroke="#22cc22" stroke-width="3.4" stroke-opacity="0.09"/><path d="M86.9 -40.8A96.0 96.0 0 0 1 89.0 -35.7" stroke="#22cc22" stroke-width="3.4" stroke-opacity="0.09"/><path d="M88.8 -36.2A95.9 95.9 0 0 1 90.7 -31.0" stroke="#22cc22" stroke-width="3.4" stroke-opacity="0.09"/><path d="M90.5 -31.4A95.8 95.8 0 0 1 92.1 -26.1" stroke="#22cc22" stroke-width="3.4" stroke-opacity="0.09"/><path d="M92.0 -26.6A95.7 95.7 0 0 1 93.3 -21.3" stroke="#22cc22" stroke-width="3.4" stroke-opacity="0.09"/><path d="M93.2 -21.8A95.6 95.6 0 0 1 94.2 -16.3" stroke="#22cc22" stroke-width="3.4" stroke-opacity="0.09"/><path d="M94.1 -16.8A95.5 95.5 0 0 1 94.8 -11.4" stroke="#22cc22" stroke-width="3.4" stroke-opacity="0.09"/><path d="M94.7 -11.9A95.4 95.4 0 0 1 95.2 -6.4" stroke="#22cc22" stroke-width="3.4" stroke-opacity="0.05"/><path d="M-135.9 29.3A139.0 139.0 0 0 1 -137.3 21.4" stroke="#2be02b" stroke-width="3.6" stroke-opacity="0.02"/><path d="M-137.2 22.1A139.0 139.0 0 0 1 -138.3 14.2" stroke="#2be02b" stroke-width="3.6" stroke-opacity="0.06"/><path d="M-138.2 14.9A139.0 139.0 0 0 1 -138.8 6.9" stroke="#2be02b" stroke-width="3.6" stroke-opacity="0.08"/><path d="M-138.8 7.6A139.0 139.0 0 0 1 -139.0 -0.4" stroke="#2be02b" stroke-width="3.6" stroke-opacity="0.10"/><path d="M-139.0 0.4A139.0 139.0 0 0 1 -138.8 -7.6" stroke="#2be02b" stroke-width="3.6" stroke-opacity="0.13"/><path d="M-138.8 -6.9A139.0 139.0 0 0 1 -138.2 -14.9" stroke="#2be02b" stroke-width="3.6" stroke-opacity="0.20"/><path d="M-138.3 -14.2A139.0 139.0 0 0 1 -137.2 -22.1" stroke="#2be02b" stroke-width="3.6" stroke-opacity="0.31"/><path d="M-137.3 -21.4A139.0 139.0 0 0 1 -135.9 -29.3" stroke="#2be02b" stroke-width="3.6" stroke-opacity="0.46"/><path d="M-136.0 -28.5A139.0 139.0 0 0 1 -134.2 -36.3" stroke="#2be02b" stroke-width="3.6" stroke-opacity="0.63"/><path d="M-134.4 -35.6A139.0 139.0 0 0 1 -132.1 -43.3" stroke="#2be02b" stroke-width="3.6" stroke-opacity="0.79"/><path d="M-132.3 -42.6A139.0 139.0 0 0 1 -129.6 -50.2" stroke="#2be02b" stroke-width="3.6" stroke-opacity="0.89"/><path d="M-129.9 -49.5A139.0 139.0 0 0 1 -126.8 -56.9" stroke="#2be02b" stroke-width="3.6" stroke-opacity="0.89"/><path d="M-127.1 -56.2A139.0 139.0 0 0 1 -123.7 -63.4" stroke="#2be02b" stroke-width="3.6" stroke-opacity="0.79"/><path d="M-124.0 -62.8A139.0 139.0 0 0 1 -120.2 -69.8" stroke="#2be02b" stroke-width="3.6" stroke-opacity="0.63"/><path d="M-120.6 -69.2A139.0 139.0 0 0 1 -116.4 -76.0" stroke="#2be02b" stroke-width="3.6" stroke-opacity="0.46"/><path d="M-116.8 -75.4A139.0 139.0 0 0 1 -112.2 -82.0" stroke="#2be02b" stroke-width="3.6" stroke-opacity="0.31"/><path d="M-112.7 -81.4A139.0 139.0 0 0 1 -107.8 -87.8" stroke="#2be02b" stroke-width="3.6" stroke-opacity="0.20"/><path d="M-108.3 -87.2A139.0 139.0 0 0 1 -103.1 -93.3" stroke="#2be02b" stroke-width="3.6" stroke-opacity="0.13"/><path d="M-103.5 -92.7A139.0 139.0 0 0 1 -98.0 -98.5" stroke="#2be02b" stroke-width="3.6" stroke-opacity="0.10"/><path d="M-98.5 -98.0A139.0 139.0 0 0 1 -92.7 -103.5" stroke="#2be02b" stroke-width="3.6" stroke-opacity="0.07"/><path d="M-93.3 -103.1A139.0 139.0 0 0 1 -87.2 -108.3" stroke="#2be02b" stroke-width="3.6" stroke-opacity="0.03"/><path d="M-17.5 36.1A40.0 40.0 0 0 1 -19.4 34.8" stroke="#1a9a1a" stroke-width="2.5" stroke-opacity="0.02"/><path d="M-19.2 34.9A39.7 39.7 0 0 1 -21.0 33.5" stroke="#1a9a1a" stroke-width="2.5" stroke-opacity="0.04"/><path d="M-20.9 33.6A39.4 39.4 0 0 1 -22.6 32.1" stroke="#1a9a1a" stroke-width="2.5" stroke-opacity="0.07"/><path d="M-22.4 32.2A39.1 39.1 0 0 1 -24.1 30.7" stroke="#1a9a1a" stroke-width="2.5" stroke-opacity="0.12"/><path d="M-23.9 30.8A38.9 38.9 0 0 1 -25.5 29.2" stroke="#1a9a1a" stroke-width="2.5" stroke-opacity="0.18"/><path d="M-25.3 29.3A38.6 38.6 0 0 1 -26.8 27.6" stroke="#1a9a1a" stroke-width="2.5" stroke-opacity="0.24"/><path d="M-26.6 27.7A38.3 38.3 0 0 1 -28.0 26.0" stroke="#1a9a1a" stroke-width="2.5" stroke-opacity="0.29"/><path d="M-27.9 26.1A38.0 38.0 0 0 1 -29.1 24.3" stroke="#1a9a1a" stroke-width="2.5" stroke-opacity="0.30"/><path d="M-29.0 24.5A37.8 37.8 0 0 1 -30.1 22.6" stroke="#1a9a1a" stroke-width="2.5" stroke-opacity="0.28"/><path d="M-30.0 22.7A37.5 37.5 0 0 1 -31.0 20.8" stroke="#1a9a1a" stroke-width="2.5" stroke-opacity="0.22"/><path d="M-30.9 21.0A37.2 37.2 0 0 1 -31.8 19.0" stroke="#1a9a1a" stroke-width="2.5" stroke-opacity="0.16"/><path d="M-31.8 19.2A37.0 37.0 0 0 1 -32.7 17.3" stroke="#1a9a1a" stroke-width="2.5" stroke-opacity="0.10"/><path d="M-32.6 17.5A37.0 37.0 0 0 1 -33.6 15.5" stroke="#1a9a1a" stroke-width="2.5" stroke-opacity="0.06"/><path d="M-33.5 15.7A37.0 37.0 0 0 1 -34.3 13.8" stroke="#1a9a1a" stroke-width="2.5" stroke-opacity="0.02"/><path d="M92.2 -77.8A120.3 120.3 0 0 1 96.1 -72.0" stroke="#22cc22" stroke-width="2.6" stroke-opacity="0.02"/><path d="M95.7 -72.5A119.8 119.8 0 0 1 99.3 -66.6" stroke="#22cc22" stroke-width="2.6" stroke-opacity="0.06"/><path d="M99.0 -67.1A119.3 119.3 0 0 1 102.1 -61.0" stroke="#22cc22" stroke-width="2.6" stroke-opacity="0.08"/><path d="M101.9 -61.6A118.7 118.7 0 0 1 104.7 -55.3" stroke="#22cc22" stroke-width="2.6" stroke-opacity="0.08"/><path d="M104.5 -55.9A118.2 118.2 0 0 1 107.0 -49.6" stroke="#22cc22" stroke-width="2.6" stroke-opacity="0.09"/><path d="M106.8 -50.1A117.7 117.7 0 0 1 109.0 -43.7" stroke="#22cc22" stroke-width="2.6" stroke-opacity="0.10"/><path d="M108.8 -44.3A117.1 117.1 0 0 1 110.6 -37.8" stroke="#22cc22" stroke-width="2.6" stroke-opacity="0.11"/><path d="M110.4 -38.3A116.6 116.6 0 0 1 111.9 -31.8" stroke="#22cc22" stroke-width="2.6" stroke-opacity="0.14"/><path d="M111.8 -32.4A116.1 116.1 0 0 1 112.9 -25.8" stroke="#22cc22" stroke-width="2.6" stroke-opacity="0.17"/><path d="M112.8 -26.4A115.5 115.5 0 0 1 113.6 -19.7" stroke="#22cc22" stroke-width="2.6" stroke-opacity="0.22"/><path d="M113.5 -20.3A115.0 115.0 0 0 1 113.9 -13.7" stroke="#22cc22" stroke-width="2.6" stroke-opacity="0.28"/><path d="M113.9 -14.3A114.5 114.5 0 0 1 113.9 -7.7" stroke="#22cc22" stroke-width="2.6" stroke-opacity="0.34"/><path d="M113.9 -8.3A113.9 113.9 0 0 1 113.6 -1.7" stroke="#22cc22" stroke-width="2.6" stroke-opacity="0.41"/><path d="M113.7 -2.3A113.5 113.5 0 0 1 113.3 4.3" stroke="#22cc22" stroke-width="2.6" stroke-opacity="0.46"/><path d="M113.4 3.7A113.3 113.3 0 0 1 112.8 10.2" stroke="#22cc22" stroke-width="2.6" stroke-opacity="0.49"/><path d="M112.9 9.6A113.2 113.2 0 0 1 112.0 16.0" stroke="#22cc22" stroke-width="2.6" stroke-opacity="0.50"/><path d="M112.1 15.5A113.1 113.1 0 0 1 110.9 21.9" stroke="#22cc22" stroke-width="2.6" stroke-opacity="0.48"/><path d="M111.0 21.3A113.0 113.0 0 0 1 109.5 27.6" stroke="#22cc22" stroke-width="2.6" stroke-opacity="0.44"/><path d="M109.6 27.0A112.8 112.8 0 0 1 107.8 33.3" stroke="#22cc22" stroke-width="2.6" stroke-opacity="0.39"/><path d="M107.9 32.7A112.7 112.7 0 0 1 105.7 38.8" stroke="#22cc22" stroke-width="2.6" stroke-opacity="0.32"/><path d="M106.0 38.3A112.6 112.6 0 0 1 103.4 44.2" stroke="#22cc22" stroke-width="2.6" stroke-opacity="0.26"/><path d="M103.7 43.7A112.5 112.5 0 0 1 100.9 49.5" stroke="#22cc22" stroke-width="2.6" stroke-opacity="0.21"/><path d="M101.1 49.0A112.3 112.3 0 0 1 98.0 54.7" stroke="#22cc22" stroke-width="2.6" stroke-opacity="0.16"/><path d="M98.3 54.2A112.2 112.2 0 0 1 94.9 59.7" stroke="#22cc22" stroke-width="2.6" stroke-opacity="0.13"/><path d="M95.3 59.2A112.1 112.1 0 0 1 91.6 64.5" stroke="#22cc22" stroke-width="2.6" stroke-opacity="0.11"/><path d="M91.9 64.0A112.0 112.0 0 0 1 88.1 69.2" stroke="#22cc22" stroke-width="2.6" stroke-opacity="0.09"/><path d="M88.4 68.7A112.0 112.0 0 0 1 84.3 73.7" stroke="#22cc22" stroke-width="2.6" stroke-opacity="0.08"/><path d="M84.7 73.3A112.0 112.0 0 0 1 80.4 78.0" stroke="#22cc22" stroke-width="2.6" stroke-opacity="0.03"/><path d="M88.9 141.4A167.0 167.0 0 0 1 80.6 146.3" stroke="#22cc22" stroke-width="2.8" stroke-opacity="0.03"/><path d="M81.3 145.8A167.0 167.0 0 0 1 72.8 150.3" stroke="#22cc22" stroke-width="2.8" stroke-opacity="0.10"/><path d="M73.6 149.9A167.0 167.0 0 0 1 64.8 153.9" stroke="#22cc22" stroke-width="2.8" stroke-opacity="0.15"/><path d="M65.7 153.6A167.0 167.0 0 0 1 56.7 157.1" stroke="#22cc22" stroke-width="2.8" stroke-opacity="0.17"/><path d="M57.5 156.8A167.0 167.0 0 0 1 48.4 159.8" stroke="#22cc22" stroke-width="2.8" stroke-opacity="0.21"/><path d="M49.2 159.6A167.0 167.0 0 0 1 40.0 162.1" stroke="#22cc22" stroke-width="2.8" stroke-opacity="0.27"/><path d="M40.8 161.9A167.0 167.0 0 0 1 31.4 164.0" stroke="#22cc22" stroke-width="2.8" stroke-opacity="0.35"/><path d="M32.3 163.8A167.0 167.0 0 0 1 22.8 165.4" stroke="#22cc22" stroke-width="2.8" stroke-opacity="0.44"/><path d="M23.7 165.3A167.0 167.0 0 0 1 14.1 166.4" stroke="#22cc22" stroke-width="2.8" stroke-opacity="0.52"/><path d="M15.0 166.3A167.0 167.0 0 0 1 5.4 166.9" stroke="#22cc22" stroke-width="2.8" stroke-opacity="0.59"/><path d="M6.3 166.9A167.0 167.0 0 0 1 -3.4 167.0" stroke="#22cc22" stroke-width="2.8" stroke-opacity="0.62"/><path d="M-2.5 167.0A167.0 167.0 0 0 1 -12.1 166.6" stroke="#22cc22" stroke-width="2.8" stroke-opacity="0.60"/><path d="M-11.2 166.6A167.0 167.0 0 0 1 -20.8 165.7" stroke="#22cc22" stroke-width="2.8" stroke-opacity="0.55"/><path d="M-19.9 165.8A167.0 167.0 0 0 1 -29.4 164.4" stroke="#22cc22" stroke-width="2.8" stroke-opacity="0.47"/><path d="M-28.6 164.5A167.0 167.0 0 0 1 -38.0 162.6" stroke="#22cc22" stroke-width="2.8" stroke-opacity="0.38"/><path d="M-37.1 162.8A167.0 167.0 0 0 1 -46.5 160.4" stroke="#22cc22" stroke-width="2.8" stroke-opacity="0.29"/><path d="M-45.6 160.7A167.0 167.0 0 0 1 -54.8 157.8" stroke="#22cc22" stroke-width="2.8" stroke-opacity="0.23"/><path d="M-54.0 158.0A167.0 167.0 0 0 1 -63.0 154.7" stroke="#22cc22" stroke-width="2.8" stroke-opacity="0.18"/><path d="M-62.2 155.0A167.0 167.0 0 0 1 -71.0 151.2" stroke="#22cc22" stroke-width="2.8" stroke-opacity="0.15"/><path d="M-70.2 151.5A167.0 167.0 0 0 1 -78.8 147.2" stroke="#22cc22" stroke-width="2.8" stroke-opacity="0.08"/><path d="M-78.0 147.7A167.0 167.0 0 0 1 -83.9 144.4" stroke="#22cc22" stroke-width="2.8" stroke-opacity="0.02"/><path d="M95.9 165.2A191.0 191.0 0 0 1 86.3 170.4" stroke="#1a9a1a" stroke-width="2.6" stroke-opacity="0.05"/><path d="M87.2 170.0A191.0 191.0 0 0 1 77.2 174.7" stroke="#1a9a1a" stroke-width="2.6" stroke-opacity="0.16"/><path d="M78.1 174.3A191.0 191.0 0 0 1 68.0 178.5" stroke="#1a9a1a" stroke-width="2.6" stroke-opacity="0.24"/><path d="M68.9 178.1A191.0 191.0 0 0 1 58.5 181.8" stroke="#1a9a1a" stroke-width="2.6" stroke-opacity="0.26"/><path d="M59.5 181.5A191.0 191.0 0 0 1 49.0 184.6" stroke="#1a9a1a" stroke-width="2.6" stroke-opacity="0.28"/><path d="M49.9 184.4A191.0 191.0 0 0 1 39.2 186.9" stroke="#1a9a1a" stroke-width="2.6" stroke-opacity="0.31"/><path d="M40.2 186.7A191.0 191.0 0 0 1 29.4 188.7" stroke="#1a9a1a" stroke-width="2.6" stroke-opacity="0.34"/><path d="M30.4 188.6A191.0 191.0 0 0 1 19.5 190.0" stroke="#1a9a1a" stroke-width="2.6" stroke-opacity="0.38"/><path d="M20.5 189.9A191.0 191.0 0 0 1 9.5 190.8" stroke="#1a9a1a" stroke-width="2.6" stroke-opacity="0.40"/><path d="M10.5 190.7A191.0 191.0 0 0 1 -0.5 191.0" stroke="#1a9a1a" stroke-width="2.6" stroke-opacity="0.43"/><path d="M0.5 191.0A191.0 191.0 0 0 1 -10.5 190.7" stroke="#1a9a1a" stroke-width="2.6" stroke-opacity="0.44"/><path d="M-9.5 190.8A191.0 191.0 0 0 1 -20.5 189.9" stroke="#1a9a1a" stroke-width="2.6" stroke-opacity="0.45"/><path d="M-19.5 190.0A191.0 191.0 0 0 1 -30.4 188.6" stroke="#1a9a1a" stroke-width="2.6" stroke-opacity="0.45"/><path d="M-29.4 188.7A191.0 191.0 0 0 1 -40.2 186.7" stroke="#1a9a1a" stroke-width="2.6" stroke-opacity="0.43"/><path d="M-39.2 186.9A191.0 191.0 0 0 1 -49.9 184.4" stroke="#1a9a1a" stroke-width="2.6" stroke-opacity="0.41"/><path d="M-49.0 184.6A191.0 191.0 0 0 1 -59.5 181.5" stroke="#1a9a1a" stroke-width="2.6" stroke-opacity="0.39"/><path d="M-58.5 181.8A191.0 191.0 0 0 1 -68.9 178.1" stroke="#1a9a1a" stroke-width="2.6" stroke-opacity="0.35"/><path d="M-68.0 178.5A191.0 191.0 0 0 1 -78.1 174.3" stroke="#1a9a1a" stroke-width="2.6" stroke-opacity="0.32"/><path d="M-77.2 174.7A191.0 191.0 0 0 1 -87.2 170.0" stroke="#1a9a1a" stroke-width="2.6" stroke-opacity="0.29"/><path d="M-86.3 170.4A191.0 191.0 0 0 1 -95.9 165.2" stroke="#1a9a1a" stroke-width="2.6" stroke-opacity="0.27"/><path d="M-95.1 165.7A191.0 191.0 0 0 1 -104.4 159.9" stroke="#1a9a1a" stroke-width="2.6" stroke-opacity="0.24"/><path d="M-103.6 160.5A191.0 191.0 0 0 1 -112.7 154.2" stroke="#1a9a1a" stroke-width="2.6" stroke-opacity="0.22"/><path d="M-111.9 154.8A191.0 191.0 0 0 1 -120.6 148.1" stroke="#1a9a1a" stroke-width="2.6" stroke-opacity="0.21"/><path d="M-119.8 148.7A191.0 191.0 0 0 1 -128.2 141.6" stroke="#1a9a1a" stroke-width="2.6" stroke-opacity="0.15"/><path d="M-127.4 142.3A191.0 191.0 0 0 1 -135.4 134.7" stroke="#1a9a1a" stroke-width="2.6" stroke-opacity="0.05"/><path d="M134.4 112.1A175.0 175.0 0 0 1 127.7 119.7" stroke="#1a9a1a" stroke-width="2.2" stroke-opacity="0.04"/><path d="M128.3 119.0A175.0 175.0 0 0 1 121.2 126.2" stroke="#1a9a1a" stroke-width="2.2" stroke-opacity="0.15"/><path d="M121.9 125.6A175.0 175.0 0 0 1 114.5 132.4" stroke="#1a9a1a" stroke-width="2.2" stroke-opacity="0.21"/><path d="M115.2 131.8A175.0 175.0 0 0 1 107.4 138.2" stroke="#1a9a1a" stroke-width="2.2" stroke-opacity="0.24"/><path d="M108.1 137.6A175.0 175.0 0 0 1 100.0 143.6" stroke="#1a9a1a" stroke-width="2.2" stroke-opacity="0.26"/><path d="M100.8 143.1A175.0 175.0 0 0 1 92.3 148.7" stroke="#1a9a1a" stroke-width="2.2" stroke-opacity="0.28"/><path d="M93.1 148.2A175.0 175.0 0 0 1 84.4 153.3" stroke="#1a9a1a" stroke-width="2.2" stroke-opacity="0.31"/><path d="M85.2 152.8A175.0 175.0 0 0 1 76.3 157.5" stroke="#1a9a1a" stroke-width="2.2" stroke-opacity="0.33"/><path d="M77.1 157.1A175.0 175.0 0 0 1 68.0 161.3" stroke="#1a9a1a" stroke-width="2.2" stroke-opacity="0.34"/><path d="M68.8 160.9A175.0 175.0 0 0 1 59.4 164.6" stroke="#1a9a1a" stroke-width="2.2" stroke-opacity="0.35"/><path d="M60.3 164.3A175.0 175.0 0 0 1 50.7 167.5" stroke="#1a9a1a" stroke-width="2.2" stroke-opacity="0.35"/><path d="M51.6 167.2A175.0 175.0 0 0 1 41.9 169.9" stroke="#1a9a1a" stroke-width="2.2" stroke-opacity="0.34"/><path d="M42.8 169.7A175.0 175.0 0 0 1 32.9 171.9" stroke="#1a9a1a" stroke-width="2.2" stroke-opacity="0.33"/><path d="M33.8 171.7A175.0 175.0 0 0 1 23.9 173.4" stroke="#1a9a1a" stroke-width="2.2" stroke-opacity="0.31"/><path d="M24.8 173.2A175.0 175.0 0 0 1 14.8 174.4" stroke="#1a9a1a" stroke-width="2.2" stroke-opacity="0.28"/><path d="M15.7 174.3A175.0 175.0 0 0 1 5.6 174.9" stroke="#1a9a1a" stroke-width="2.2" stroke-opacity="0.26"/><path d="M6.6 174.9A175.0 175.0 0 0 1 -3.5 175.0" stroke="#1a9a1a" stroke-width="2.2" stroke-opacity="0.24"/><path d="M-2.6 175.0A175.0 175.0 0 0 1 -12.7 174.5" stroke="#1a9a1a" stroke-width="2.2" stroke-opacity="0.21"/><path d="M-11.8 174.6A175.0 175.0 0 0 1 -21.8 173.6" stroke="#1a9a1a" stroke-width="2.2" stroke-opacity="0.19"/><path d="M-20.9 173.8A175.0 175.0 0 0 1 -30.8 172.3" stroke="#1a9a1a" stroke-width="2.2" stroke-opacity="0.18"/><path d="M-29.9 172.4A175.0 175.0 0 0 1 -39.8 170.4" stroke="#1a9a1a" stroke-width="2.2" stroke-opacity="0.17"/><path d="M-38.9 170.6A175.0 175.0 0 0 1 -48.7 168.1" stroke="#1a9a1a" stroke-width="2.2" stroke-opacity="0.14"/><path d="M-47.8 168.3A175.0 175.0 0 0 1 -57.4 165.3" stroke="#1a9a1a" stroke-width="2.2" stroke-opacity="0.06"/><path d="M128.7 -108.6A168.4 168.4 0 0 1 134.8 -101.0" stroke="#22cc22" stroke-width="2.6" stroke-opacity="0.02"/><path d="M134.2 -101.7A168.4 168.4 0 0 1 139.9 -93.8" stroke="#22cc22" stroke-width="2.6" stroke-opacity="0.07"/><path d="M139.4 -94.5A168.4 168.4 0 0 1 144.6 -86.4" stroke="#22cc22" stroke-width="2.6" stroke-opacity="0.10"/><path d="M144.1 -87.1A168.4 168.4 0 0 1 148.9 -78.7" stroke="#22cc22" stroke-width="2.6" stroke-opacity="0.11"/><path d="M148.5 -79.4A168.4 168.4 0 0 1 152.8 -70.8" stroke="#22cc22" stroke-width="2.6" stroke-opacity="0.12"/><path d="M152.4 -71.6A168.4 168.4 0 0 1 156.3 -62.7" stroke="#22cc22" stroke-width="2.6" stroke-opacity="0.13"/><path d="M156.0 -63.5A168.4 168.4 0 0 1 159.4 -54.4" stroke="#22cc22" stroke-width="2.6" stroke-opacity="0.15"/><path d="M159.1 -55.2A168.4 168.4 0 0 1 162.0 -46.0" stroke="#22cc22" stroke-width="2.6" stroke-opacity="0.17"/><path d="M161.8 -46.8A168.4 168.4 0 0 1 164.2 -37.5" stroke="#22cc22" stroke-width="2.6" stroke-opacity="0.20"/><path d="M164.0 -38.3A168.4 168.4 0 0 1 165.9 -28.8" stroke="#22cc22" stroke-width="2.6" stroke-opacity="0.23"/><path d="M165.8 -29.7A168.4 168.4 0 0 1 167.2 -20.1" stroke="#22cc22" stroke-width="2.6" stroke-opacity="0.26"/><path d="M167.1 -21.0A168.4 168.4 0 0 1 168.0 -11.3" stroke="#22cc22" stroke-width="2.6" stroke-opacity="0.30"/><path d="M168.0 -12.2A168.4 168.4 0 0 1 168.4 -2.5" stroke="#22cc22" stroke-width="2.6" stroke-opacity="0.34"/><path d="M168.4 -3.4A168.4 168.4 0 0 1 168.3 6.3" stroke="#22cc22" stroke-width="2.6" stroke-opacity="0.38"/><path d="M168.3 5.4A168.4 168.4 0 0 1 167.7 15.1" stroke="#22cc22" stroke-width="2.6" stroke-opacity="0.41"/><path d="M167.8 14.2A168.4 168.4 0 0 1 166.7 23.9" stroke="#22cc22" stroke-width="2.6" stroke-opacity="0.43"/><path d="M166.8 23.0A168.4 168.4 0 0 1 165.2 32.6" stroke="#22cc22" stroke-width="2.6" stroke-opacity="0.45"/><path d="M165.4 31.7A168.4 168.4 0 0 1 163.3 41.2" stroke="#22cc22" stroke-width="2.6" stroke-opacity="0.45"/><path d="M163.5 40.3A168.4 168.4 0 0 1 160.9 49.7" stroke="#22cc22" stroke-width="2.6" stroke-opacity="0.44"/><path d="M161.2 48.8A168.4 168.4 0 0 1 158.1 58.0" stroke="#22cc22" stroke-width="2.6" stroke-opacity="0.42"/><path d="M158.4 57.2A168.4 168.4 0 0 1 154.8 66.2" stroke="#22cc22" stroke-width="2.6" stroke-opacity="0.40"/><path d="M155.2 65.4A168.4 168.4 0 0 1 151.2 74.2" stroke="#22cc22" stroke-width="2.6" stroke-opacity="0.36"/><path d="M151.5 73.4A168.4 168.4 0 0 1 147.1 82.0" stroke="#22cc22" stroke-width="2.6" stroke-opacity="0.33"/><path d="M147.5 81.3A168.4 168.4 0 0 1 142.6 89.6" stroke="#22cc22" stroke-width="2.6" stroke-opacity="0.29"/><path d="M143.0 88.9A168.4 168.4 0 0 1 137.7 97.0" stroke="#22cc22" stroke-width="2.6" stroke-opacity="0.25"/><path d="M138.2 96.2A168.4 168.4 0 0 1 132.4 104.0" stroke="#22cc22" stroke-width="2.6" stroke-opacity="0.22"/><path d="M133.0 103.3A168.4 168.4 0 0 1 126.8 110.8" stroke="#22cc22" stroke-width="2.6" stroke-opacity="0.19"/><path d="M127.4 110.1A168.4 168.4 0 0 1 120.8 117.3" stroke="#22cc22" stroke-width="2.6" stroke-opacity="0.16"/><path d="M121.4 116.7A168.4 168.4 0 0 1 114.5 123.5" stroke="#22cc22" stroke-width="2.6" stroke-opacity="0.14"/><path d="M115.2 122.9A168.4 168.4 0 0 1 107.9 129.3" stroke="#22cc22" stroke-width="2.6" stroke-opacity="0.07"/><path d="M108.6 128.7A168.4 168.4 0 0 1 103.3 133.0" stroke="#22cc22" stroke-width="2.6" stroke-opacity="0.02"/><path d="M91.0 -109.0A142.0 142.0 0 0 1 97.1 -103.6" stroke="#1a9a1a" stroke-width="1.8" stroke-opacity="0.03"/><path d="M96.6 -104.1A142.0 142.0 0 0 1 102.4 -98.4" stroke="#1a9a1a" stroke-width="1.8" stroke-opacity="0.10"/><path d="M101.9 -98.9A142.0 142.0 0 0 1 107.4 -92.9" stroke="#1a9a1a" stroke-width="1.8" stroke-opacity="0.15"/><path d="M106.9 -93.4A142.0 142.0 0 0 1 112.1 -87.1" stroke="#1a9a1a" stroke-width="1.8" stroke-opacity="0.16"/><path d="M111.7 -87.7A142.0 142.0 0 0 1 116.5 -81.1" stroke="#1a9a1a" stroke-width="1.8" stroke-opacity="0.18"/><path d="M116.1 -81.8A142.0 142.0 0 0 1 120.6 -74.9" stroke="#1a9a1a" stroke-width="1.8" stroke-opacity="0.19"/><path d="M120.2 -75.6A142.0 142.0 0 0 1 124.4 -68.5" stroke="#1a9a1a" stroke-width="1.8" stroke-opacity="0.21"/><path d="M124.0 -69.2A142.0 142.0 0 0 1 127.8 -61.9" stroke="#1a9a1a" stroke-width="1.8" stroke-opacity="0.22"/><path d="M127.5 -62.6A142.0 142.0 0 0 1 130.9 -55.1" stroke="#1a9a1a" stroke-width="1.8" stroke-opacity="0.23"/><path d="M130.6 -55.8A142.0 142.0 0 0 1 133.6 -48.2" stroke="#1a9a1a" stroke-width="1.8" stroke-opacity="0.24"/><path d="M133.3 -48.9A142.0 142.0 0 0 1 135.9 -41.2" stroke="#1a9a1a" stroke-width="1.8" stroke-opacity="0.24"/><path d="M135.7 -41.9A142.0 142.0 0 0 1 137.9 -34.0" stroke="#1a9a1a" stroke-width="1.8" stroke-opacity="0.24"/><path d="M137.7 -34.7A142.0 142.0 0 0 1 139.5 -26.7" stroke="#1a9a1a" stroke-width="1.8" stroke-opacity="0.23"/><path d="M139.3 -27.5A142.0 142.0 0 0 1 140.7 -19.4" stroke="#1a9a1a" stroke-width="1.8" stroke-opacity="0.22"/><path d="M140.6 -20.1A142.0 142.0 0 0 1 141.5 -12.0" stroke="#1a9a1a" stroke-width="1.8" stroke-opacity="0.21"/><path d="M141.4 -12.7A142.0 142.0 0 0 1 141.9 -4.6" stroke="#1a9a1a" stroke-width="1.8" stroke-opacity="0.20"/><path d="M141.9 -5.3A142.0 142.0 0 0 1 142.0 2.8" stroke="#1a9a1a" stroke-width="1.8" stroke-opacity="0.18"/><path d="M142.0 2.1A142.0 142.0 0 0 1 141.6 10.3" stroke="#1a9a1a" stroke-width="1.8" stroke-opacity="0.17"/><path d="M141.7 9.5A142.0 142.0 0 0 1 140.9 17.7" stroke="#1a9a1a" stroke-width="1.8" stroke-opacity="0.16"/><path d="M141.0 16.9A142.0 142.0 0 0 1 139.8 25.0" stroke="#1a9a1a" stroke-width="1.8" stroke-opacity="0.14"/><path d="M139.9 24.3A142.0 142.0 0 0 1 138.3 32.3" stroke="#1a9a1a" stroke-width="1.8" stroke-opacity="0.13"/><path d="M138.4 31.6A142.0 142.0 0 0 1 136.4 39.5" stroke="#1a9a1a" stroke-width="1.8" stroke-opacity="0.11"/><path d="M136.6 38.8A142.0 142.0 0 0 1 134.1 46.6" stroke="#1a9a1a" stroke-width="1.8" stroke-opacity="0.05"/><path d="M52.0 -143.9A153.0 153.0 0 0 1 60.2 -140.7" stroke="#1a9a1a" stroke-width="1.8" stroke-opacity="0.03"/><path d="M59.4 -141.0A153.0 153.0 0 0 1 67.4 -137.3" stroke="#1a9a1a" stroke-width="1.8" stroke-opacity="0.09"/><path d="M66.7 -137.7A153.0 153.0 0 0 1 74.5 -133.6" stroke="#1a9a1a" stroke-width="1.8" stroke-opacity="0.13"/><path d="M73.8 -134.0A153.0 153.0 0 0 1 81.4 -129.5" stroke="#1a9a1a" stroke-width="1.8" stroke-opacity="0.15"/><path d="M80.7 -130.0A153.0 153.0 0 0 1 88.1 -125.1" stroke="#1a9a1a" stroke-width="1.8" stroke-opacity="0.16"/><path d="M87.4 -125.6A153.0 153.0 0 0 1 94.5 -120.3" stroke="#1a9a1a" stroke-width="1.8" stroke-opacity="0.17"/><path d="M93.9 -120.8A153.0 153.0 0 0 1 100.7 -115.2" stroke="#1a9a1a" stroke-width="1.8" stroke-opacity="0.18"/><path d="M100.1 -115.7A153.0 153.0 0 0 1 106.6 -109.8" stroke="#1a9a1a" stroke-width="1.8" stroke-opacity="0.19"/><path d="M106.0 -110.3A153.0 153.0 0 0 1 112.2 -104.1" stroke="#1a9a1a" stroke-width="1.8" stroke-opacity="0.20"/><path d="M111.6 -104.6A153.0 153.0 0 0 1 117.5 -98.0" stroke="#1a9a1a" stroke-width="1.8" stroke-opacity="0.20"/><path d="M116.9 -98.7A153.0 153.0 0 0 1 122.4 -91.8" stroke="#1a9a1a" stroke-width="1.8" stroke-opacity="0.20"/><path d="M121.9 -92.4A153.0 153.0 0 0 1 127.1 -85.2" stroke="#1a9a1a" stroke-width="1.8" stroke-opacity="0.20"/><path d="M126.6 -85.9A153.0 153.0 0 0 1 131.4 -78.5" stroke="#1a9a1a" stroke-width="1.8" stroke-opacity="0.19"/><path d="M130.9 -79.1A153.0 153.0 0 0 1 135.3 -71.5" stroke="#1a9a1a" stroke-width="1.8" stroke-opacity="0.18"/><path d="M134.9 -72.2A153.0 153.0 0 0 1 138.8 -64.3" stroke="#1a9a1a" stroke-width="1.8" stroke-opacity="0.17"/><path d="M138.5 -65.0A153.0 153.0 0 0 1 142.0 -56.9" stroke="#1a9a1a" stroke-width="1.8" stroke-opacity="0.16"/><path d="M141.7 -57.7A153.0 153.0 0 0 1 144.8 -49.4" stroke="#1a9a1a" stroke-width="1.8" stroke-opacity="0.15"/><path d="M144.5 -50.2A153.0 153.0 0 0 1 147.2 -41.8" stroke="#1a9a1a" stroke-width="1.8" stroke-opacity="0.13"/><path d="M147.0 -42.6A153.0 153.0 0 0 1 149.2 -34.0" stroke="#1a9a1a" stroke-width="1.8" stroke-opacity="0.12"/><path d="M149.0 -34.8A153.0 153.0 0 0 1 150.7 -26.2" stroke="#1a9a1a" stroke-width="1.8" stroke-opacity="0.11"/><path d="M150.6 -27.0A153.0 153.0 0 0 1 151.9 -18.2" stroke="#1a9a1a" stroke-width="1.8" stroke-opacity="0.10"/><path d="M151.8 -19.0A153.0 153.0 0 0 1 152.7 -10.3" stroke="#1a9a1a" stroke-width="1.8" stroke-opacity="0.09"/><path d="M152.6 -11.1A153.0 153.0 0 0 1 153.0 -2.3" stroke="#1a9a1a" stroke-width="1.8" stroke-opacity="0.04"/><path d="M31.3 -180.3A183.0 183.0 0 0 1 41.6 -178.2" stroke="#1a9a1a" stroke-width="1.8" stroke-opacity="0.03"/><path d="M40.7 -178.4A183.0 183.0 0 0 1 50.9 -175.8" stroke="#1a9a1a" stroke-width="1.8" stroke-opacity="0.10"/><path d="M50.0 -176.0A183.0 183.0 0 0 1 60.0 -172.9" stroke="#1a9a1a" stroke-width="1.8" stroke-opacity="0.14"/><path d="M59.1 -173.2A183.0 183.0 0 0 1 69.0 -169.5" stroke="#1a9a1a" stroke-width="1.8" stroke-opacity="0.15"/><path d="M68.1 -169.9A183.0 183.0 0 0 1 77.8 -165.7" stroke="#1a9a1a" stroke-width="1.8" stroke-opacity="0.16"/><path d="M76.9 -166.1A183.0 183.0 0 0 1 86.3 -161.4" stroke="#1a9a1a" stroke-width="1.8" stroke-opacity="0.17"/><path d="M85.5 -161.8A183.0 183.0 0 0 1 94.7 -156.6" stroke="#1a9a1a" stroke-width="1.8" stroke-opacity="0.17"/><path d="M93.8 -157.1A183.0 183.0 0 0 1 102.7 -151.4" stroke="#1a9a1a" stroke-width="1.8" stroke-opacity="0.18"/><path d="M101.9 -152.0A183.0 183.0 0 0 1 110.5 -145.9" stroke="#1a9a1a" stroke-width="1.8" stroke-opacity="0.19"/><path d="M109.7 -146.4A183.0 183.0 0 0 1 118.0 -139.9" stroke="#1a9a1a" stroke-width="1.8" stroke-opacity="0.20"/><path d="M117.3 -140.5A183.0 183.0 0 0 1 125.2 -133.5" stroke="#1a9a1a" stroke-width="1.8" stroke-opacity="0.20"/><path d="M124.5 -134.2A183.0 183.0 0 0 1 132.0 -126.8" stroke="#1a9a1a" stroke-width="1.8" stroke-opacity="0.21"/><path d="M131.3 -127.5A183.0 183.0 0 0 1 138.4 -119.7" stroke="#1a9a1a" stroke-width="1.8" stroke-opacity="0.22"/><path d="M137.8 -120.4A183.0 183.0 0 0 1 144.5 -112.3" stroke="#1a9a1a" stroke-width="1.8" stroke-opacity="0.22"/><path d="M143.9 -113.0A183.0 183.0 0 0 1 150.2 -104.6" stroke="#1a9a1a" stroke-width="1.8" stroke-opacity="0.22"/><path d="M149.6 -105.4A183.0 183.0 0 0 1 155.4 -96.6" stroke="#1a9a1a" stroke-width="1.8" stroke-opacity="0.22"/><path d="M154.9 -97.4A183.0 183.0 0 0 1 160.3 -88.3" stroke="#1a9a1a" stroke-width="1.8" stroke-opacity="0.22"/><path d="M159.8 -89.1A183.0 183.0 0 0 1 164.7 -79.8" stroke="#1a9a1a" stroke-width="1.8" stroke-opacity="0.22"/><path d="M164.3 -80.7A183.0 183.0 0 0 1 168.6 -71.1" stroke="#1a9a1a" stroke-width="1.8" stroke-opacity="0.21"/><path d="M168.3 -71.9A183.0 183.0 0 0 1 172.1 -62.1" stroke="#1a9a1a" stroke-width="1.8" stroke-opacity="0.20"/><path d="M171.8 -63.0A183.0 183.0 0 0 1 175.1 -53.0" stroke="#1a9a1a" stroke-width="1.8" stroke-opacity="0.20"/><path d="M174.9 -54.0A183.0 183.0 0 0 1 177.7 -43.8" stroke="#1a9a1a" stroke-width="1.8" stroke-opacity="0.19"/><path d="M177.4 -44.7A183.0 183.0 0 0 1 179.7 -34.4" stroke="#1a9a1a" stroke-width="1.8" stroke-opacity="0.18"/><path d="M179.5 -35.4A183.0 183.0 0 0 1 181.3 -25.0" stroke="#1a9a1a" stroke-width="1.8" stroke-opacity="0.17"/><path d="M181.2 -25.9A183.0 183.0 0 0 1 182.3 -15.5" stroke="#1a9a1a" stroke-width="1.8" stroke-opacity="0.17"/><path d="M182.3 -16.4A183.0 183.0 0 0 1 182.9 -5.9" stroke="#1a9a1a" stroke-width="1.8" stroke-opacity="0.16"/><path d="M182.9 -6.9A183.0 183.0 0 0 1 183.0 3.7" stroke="#1a9a1a" stroke-width="1.8" stroke-opacity="0.15"/><path d="M183.0 2.7A183.0 183.0 0 0 1 182.5 13.2" stroke="#1a9a1a" stroke-width="1.8" stroke-opacity="0.14"/><path d="M182.6 12.3A183.0 183.0 0 0 1 181.6 22.8" stroke="#1a9a1a" stroke-width="1.8" stroke-opacity="0.14"/><path d="M181.7 21.8A183.0 183.0 0 0 1 180.1 32.2" stroke="#1a9a1a" stroke-width="1.8" stroke-opacity="0.13"/><path d="M180.3 31.3A183.0 183.0 0 0 1 178.2 41.6" stroke="#1a9a1a" stroke-width="1.8" stroke-opacity="0.13"/><path d="M178.4 40.7A183.0 183.0 0 0 1 175.8 50.9" stroke="#1a9a1a" stroke-width="1.8" stroke-opacity="0.11"/><path d="M176.0 50.0A183.0 183.0 0 0 1 172.9 60.0" stroke="#1a9a1a" stroke-width="1.8" stroke-opacity="0.05"/><path d="M-67.6 187.2A199.0 199.0 0 0 1 -78.2 183.0" stroke="#1a9a1a" stroke-width="2.2" stroke-opacity="0.03"/><path d="M-77.3 183.4A199.0 199.0 0 0 1 -87.7 178.6" stroke="#1a9a1a" stroke-width="2.2" stroke-opacity="0.11"/><path d="M-86.8 179.1A199.0 199.0 0 0 1 -96.9 173.8" stroke="#1a9a1a" stroke-width="2.2" stroke-opacity="0.15"/><path d="M-96.0 174.3A199.0 199.0 0 0 1 -105.9 168.5" stroke="#1a9a1a" stroke-width="2.2" stroke-opacity="0.15"/><path d="M-105.0 169.0A199.0 199.0 0 0 1 -114.6 162.7" stroke="#1a9a1a" stroke-width="2.2" stroke-opacity="0.16"/><path d="M-113.7 163.3A199.0 199.0 0 0 1 -122.9 156.5" stroke="#1a9a1a" stroke-width="2.2" stroke-opacity="0.16"/><path d="M-122.1 157.1A199.0 199.0 0 0 1 -130.9 149.8" stroke="#1a9a1a" stroke-width="2.2" stroke-opacity="0.17"/><path d="M-130.2 150.5A199.0 199.0 0 0 1 -138.6 142.8" stroke="#1a9a1a" stroke-width="2.2" stroke-opacity="0.17"/><path d="M-137.9 143.5A199.0 199.0 0 0 1 -145.9 135.3" stroke="#1a9a1a" stroke-width="2.2" stroke-opacity="0.18"/><path d="M-145.2 136.1A199.0 199.0 0 0 1 -152.8 127.5" stroke="#1a9a1a" stroke-width="2.2" stroke-opacity="0.18"/><path d="M-152.1 128.3A199.0 199.0 0 0 1 -159.2 119.3" stroke="#1a9a1a" stroke-width="2.2" stroke-opacity="0.19"/><path d="M-158.6 120.2A199.0 199.0 0 0 1 -165.3 110.8" stroke="#1a9a1a" stroke-width="2.2" stroke-opacity="0.19"/><path d="M-164.7 111.7A199.0 199.0 0 0 1 -170.8 102.0" stroke="#1a9a1a" stroke-width="2.2" stroke-opacity="0.20"/><path d="M-170.3 102.9A199.0 199.0 0 0 1 -176.0 93.0" stroke="#1a9a1a" stroke-width="2.2" stroke-opacity="0.20"/><path d="M-175.5 93.9A199.0 199.0 0 0 1 -180.6 83.6" stroke="#1a9a1a" stroke-width="2.2" stroke-opacity="0.21"/><path d="M-180.1 84.6A199.0 199.0 0 0 1 -184.7 74.1" stroke="#1a9a1a" stroke-width="2.2" stroke-opacity="0.21"/><path d="M-184.3 75.0A199.0 199.0 0 0 1 -188.3 64.3" stroke="#1a9a1a" stroke-width="2.2" stroke-opacity="0.22"/><path d="M-188.0 65.3A199.0 199.0 0 0 1 -191.4 54.4" stroke="#1a9a1a" stroke-width="2.2" stroke-opacity="0.22"/><path d="M-191.1 55.4A199.0 199.0 0 0 1 -194.0 44.3" stroke="#1a9a1a" stroke-width="2.2" stroke-opacity="0.22"/><path d="M-193.8 45.3A199.0 199.0 0 0 1 -196.1 34.0" stroke="#1a9a1a" stroke-width="2.2" stroke-opacity="0.22"/><path d="M-195.9 35.1A199.0 199.0 0 0 1 -197.6 23.7" stroke="#1a9a1a" stroke-width="2.2" stroke-opacity="0.22"/><path d="M-197.5 24.8A199.0 199.0 0 0 1 -198.6 13.4" stroke="#1a9a1a" stroke-width="2.2" stroke-opacity="0.22"/><path d="M-198.5 14.4A199.0 199.0 0 0 1 -199.0 3.0" stroke="#1a9a1a" stroke-width="2.2" stroke-opacity="0.22"/><path d="M-199.0 4.0A199.0 199.0 0 0 1 -198.9 -7.5" stroke="#1a9a1a" stroke-width="2.2" stroke-opacity="0.22"/><path d="M-198.9 -6.4A199.0 199.0 0 0 1 -198.2 -17.9" stroke="#1a9a1a" stroke-width="2.2" stroke-opacity="0.21"/><path d="M-198.3 -16.8A199.0 199.0 0 0 1 -197.0 -28.2" stroke="#1a9a1a" stroke-width="2.2" stroke-opacity="0.21"/><path d="M-197.1 -27.2A199.0 199.0 0 0 1 -195.2 -38.5" stroke="#1a9a1a" stroke-width="2.2" stroke-opacity="0.20"/><path d="M-195.4 -37.5A199.0 199.0 0 0 1 -193.0 -48.6" stroke="#1a9a1a" stroke-width="2.2" stroke-opacity="0.20"/><path d="M-193.2 -47.6A199.0 199.0 0 0 1 -190.2 -58.7" stroke="#1a9a1a" stroke-width="2.2" stroke-opacity="0.19"/><path d="M-190.5 -57.7A199.0 199.0 0 0 1 -186.8 -68.6" stroke="#1a9a1a" stroke-width="2.2" stroke-opacity="0.19"/><path d="M-187.2 -67.6A199.0 199.0 0 0 1 -183.0 -78.2" stroke="#1a9a1a" stroke-width="2.2" stroke-opacity="0.18"/><path d="M-183.4 -77.3A199.0 199.0 0 0 1 -178.6 -87.7" stroke="#1a9a1a" stroke-width="2.2" stroke-opacity="0.18"/><path d="M-179.1 -86.8A199.0 199.0 0 0 1 -173.8 -96.9" stroke="#1a9a1a" stroke-width="2.2" stroke-opacity="0.17"/><path d="M-174.3 -96.0A199.0 199.0 0 0 1 -168.5 -105.9" stroke="#1a9a1a" stroke-width="2.2" stroke-opacity="0.17"/><path d="M-169.0 -105.0A199.0 199.0 0 0 1 -162.7 -114.6" stroke="#1a9a1a" stroke-width="2.2" stroke-opacity="0.16"/><path d="M-163.3 -113.7A199.0 199.0 0 0 1 -156.5 -122.9" stroke="#1a9a1a" stroke-width="2.2" stroke-opacity="0.16"/><path d="M-157.1 -122.1A199.0 199.0 0 0 1 -149.8 -130.9" stroke="#1a9a1a" stroke-width="2.2" stroke-opacity="0.15"/><path d="M-150.5 -130.2A199.0 199.0 0 0 1 -142.8 -138.6" stroke="#1a9a1a" stroke-width="2.2" stroke-opacity="0.15"/><path d="M-143.5 -137.9A199.0 199.0 0 0 1 -135.3 -145.9" stroke="#1a9a1a" stroke-width="2.2" stroke-opacity="0.14"/><path d="M-136.1 -145.2A199.0 199.0 0 0 1 -127.5 -152.8" stroke="#1a9a1a" stroke-width="2.2" stroke-opacity="0.14"/><path d="M-128.3 -152.1A199.0 199.0 0 0 1 -119.3 -159.2" stroke="#1a9a1a" stroke-width="2.2" stroke-opacity="0.13"/><path d="M-120.2 -158.6A199.0 199.0 0 0 1 -110.8 -165.3" stroke="#1a9a1a" stroke-width="2.2" stroke-opacity="0.13"/><path d="M-111.7 -164.7A199.0 199.0 0 0 1 -102.0 -170.8" stroke="#1a9a1a" stroke-width="2.2" stroke-opacity="0.13"/><path d="M-102.9 -170.3A199.0 199.0 0 0 1 -93.0 -176.0" stroke="#1a9a1a" stroke-width="2.2" stroke-opacity="0.13"/><path d="M-93.9 -175.5A199.0 199.0 0 0 1 -83.6 -180.6" stroke="#1a9a1a" stroke-width="2.2" stroke-opacity="0.12"/><path d="M-84.6 -180.1A199.0 199.0 0 0 1 -74.1 -184.7" stroke="#1a9a1a" stroke-width="2.2" stroke-opacity="0.07"/><path d="M-75.0 -184.3A199.0 199.0 0 0 1 -67.6 -187.2" stroke="#1a9a1a" stroke-width="2.2" stroke-opacity="0.02"/><path d="M-105.7 151.8A185.0 185.0 0 0 1 -114.3 145.5" stroke="#1a9a1a" stroke-width="2.4" stroke-opacity="0.06"/><path d="M-113.5 146.1A185.0 185.0 0 0 1 -121.7 139.3" stroke="#1a9a1a" stroke-width="2.4" stroke-opacity="0.18"/><path d="M-121.0 139.9A185.0 185.0 0 0 1 -128.9 132.7" stroke="#1a9a1a" stroke-width="2.4" stroke-opacity="0.24"/><path d="M-128.2 133.4A185.0 185.0 0 0 1 -135.6 125.8" stroke="#1a9a1a" stroke-width="2.4" stroke-opacity="0.25"/><path d="M-135.0 126.5A185.0 185.0 0 0 1 -142.0 118.5" stroke="#1a9a1a" stroke-width="2.4" stroke-opacity="0.26"/><path d="M-141.4 119.3A185.0 185.0 0 0 1 -148.0 110.9" stroke="#1a9a1a" stroke-width="2.4" stroke-opacity="0.27"/><path d="M-147.5 111.7A185.0 185.0 0 0 1 -153.6 103.0" stroke="#1a9a1a" stroke-width="2.4" stroke-opacity="0.28"/><path d="M-153.1 103.9A185.0 185.0 0 0 1 -158.8 94.9" stroke="#1a9a1a" stroke-width="2.4" stroke-opacity="0.29"/><path d="M-158.3 95.7A185.0 185.0 0 0 1 -163.6 86.4" stroke="#1a9a1a" stroke-width="2.4" stroke-opacity="0.29"/><path d="M-163.1 87.3A185.0 185.0 0 0 1 -167.9 77.7" stroke="#1a9a1a" stroke-width="2.4" stroke-opacity="0.30"/><path d="M-167.5 78.6A185.0 185.0 0 0 1 -171.7 68.9" stroke="#1a9a1a" stroke-width="2.4" stroke-opacity="0.30"/><path d="M-171.3 69.8A185.0 185.0 0 0 1 -175.1 59.8" stroke="#1a9a1a" stroke-width="2.4" stroke-opacity="0.30"/><path d="M-174.8 60.7A185.0 185.0 0 0 1 -178.0 50.5" stroke="#1a9a1a" stroke-width="2.4" stroke-opacity="0.30"/><path d="M-177.7 51.5A185.0 185.0 0 0 1 -180.4 41.1" stroke="#1a9a1a" stroke-width="2.4" stroke-opacity="0.30"/><path d="M-180.1 42.1A185.0 185.0 0 0 1 -182.3 31.6" stroke="#1a9a1a" stroke-width="2.4" stroke-opacity="0.29"/><path d="M-182.1 32.6A185.0 185.0 0 0 1 -183.7 22.1" stroke="#1a9a1a" stroke-width="2.4" stroke-opacity="0.29"/><path d="M-183.6 23.0A185.0 185.0 0 0 1 -184.6 12.4" stroke="#1a9a1a" stroke-width="2.4" stroke-opacity="0.28"/><path d="M-184.5 13.4A185.0 185.0 0 0 1 -185.0 2.7" stroke="#1a9a1a" stroke-width="2.4" stroke-opacity="0.27"/><path d="M-185.0 3.7A185.0 185.0 0 0 1 -184.9 -6.9" stroke="#1a9a1a" stroke-width="2.4" stroke-opacity="0.27"/><path d="M-184.9 -6.0A185.0 185.0 0 0 1 -184.3 -16.6" stroke="#1a9a1a" stroke-width="2.4" stroke-opacity="0.26"/><path d="M-184.3 -15.6A185.0 185.0 0 0 1 -183.1 -26.2" stroke="#1a9a1a" stroke-width="2.4" stroke-opacity="0.25"/><path d="M-183.3 -25.3A185.0 185.0 0 0 1 -181.5 -35.8" stroke="#1a9a1a" stroke-width="2.4" stroke-opacity="0.24"/><path d="M-181.7 -34.8A185.0 185.0 0 0 1 -179.4 -45.2" stroke="#1a9a1a" stroke-width="2.4" stroke-opacity="0.23"/><path d="M-179.6 -44.3A185.0 185.0 0 0 1 -176.8 -54.6" stroke="#1a9a1a" stroke-width="2.4" stroke-opacity="0.22"/><path d="M-177.1 -53.6A185.0 185.0 0 0 1 -173.7 -63.7" stroke="#1a9a1a" stroke-width="2.4" stroke-opacity="0.21"/><path d="M-174.0 -62.8A185.0 185.0 0 0 1 -170.1 -72.7" stroke="#1a9a1a" stroke-width="2.4" stroke-opacity="0.20"/><path d="M-170.5 -71.8A185.0 185.0 0 0 1 -166.1 -81.5" stroke="#1a9a1a" stroke-width="2.4" stroke-opacity="0.19"/><path d="M-166.5 -80.7A185.0 185.0 0 0 1 -161.6 -90.1" stroke="#1a9a1a" stroke-width="2.4" stroke-opacity="0.19"/><path d="M-162.0 -89.3A185.0 185.0 0 0 1 -156.6 -98.4" stroke="#1a9a1a" stroke-width="2.4" stroke-opacity="0.18"/><path d="M-157.1 -97.6A185.0 185.0 0 0 1 -151.3 -106.5" stroke="#1a9a1a" stroke-width="2.4" stroke-opacity="0.18"/><path d="M-151.8 -105.7A185.0 185.0 0 0 1 -145.5 -114.3" stroke="#1a9a1a" stroke-width="2.4" stroke-opacity="0.17"/><path d="M-146.1 -113.5A185.0 185.0 0 0 1 -139.3 -121.7" stroke="#1a9a1a" stroke-width="2.4" stroke-opacity="0.17"/><path d="M-139.9 -121.0A185.0 185.0 0 0 1 -132.7 -128.9" stroke="#1a9a1a" stroke-width="2.4" stroke-opacity="0.16"/><path d="M-133.4 -128.2A185.0 185.0 0 0 1 -125.8 -135.6" stroke="#1a9a1a" stroke-width="2.4" stroke-opacity="0.16"/><path d="M-126.5 -135.0A185.0 185.0 0 0 1 -118.5 -142.0" stroke="#1a9a1a" stroke-width="2.4" stroke-opacity="0.16"/><path d="M-119.3 -141.4A185.0 185.0 0 0 1 -110.9 -148.0" stroke="#1a9a1a" stroke-width="2.4" stroke-opacity="0.16"/><path d="M-111.7 -147.5A185.0 185.0 0 0 1 -103.0 -153.6" stroke="#1a9a1a" stroke-width="2.4" stroke-opacity="0.14"/><path d="M-103.9 -153.1A185.0 185.0 0 0 1 -94.9 -158.8" stroke="#1a9a1a" stroke-width="2.4" stroke-opacity="0.06"/><path d="M-121.3 121.9A172.0 172.0 0 0 1 -128.1 114.8" stroke="#1a9a1a" stroke-width="2.2" stroke-opacity="0.04"/><path d="M-127.5 115.4A172.0 172.0 0 0 1 -134.0 107.9" stroke="#1a9a1a" stroke-width="2.2" stroke-opacity="0.14"/><path d="M-133.4 108.6A172.0 172.0 0 0 1 -139.4 100.7" stroke="#1a9a1a" stroke-width="2.2" stroke-opacity="0.20"/><path d="M-138.9 101.5A172.0 172.0 0 0 1 -144.5 93.3" stroke="#1a9a1a" stroke-width="2.2" stroke-opacity="0.21"/><path d="M-144.0 94.1A172.0 172.0 0 0 1 -149.2 85.6" stroke="#1a9a1a" stroke-width="2.2" stroke-opacity="0.22"/><path d="M-148.7 86.4A172.0 172.0 0 0 1 -153.5 77.7" stroke="#1a9a1a" stroke-width="2.2" stroke-opacity="0.23"/><path d="M-153.0 78.5A172.0 172.0 0 0 1 -157.3 69.5" stroke="#1a9a1a" stroke-width="2.2" stroke-opacity="0.24"/><path d="M-156.9 70.4A172.0 172.0 0 0 1 -160.7 61.2" stroke="#1a9a1a" stroke-width="2.2" stroke-opacity="0.24"/><path d="M-160.4 62.1A172.0 172.0 0 0 1 -163.7 52.7" stroke="#1a9a1a" stroke-width="2.2" stroke-opacity="0.25"/><path d="M-163.4 53.6A172.0 172.0 0 0 1 -166.3 44.1" stroke="#1a9a1a" stroke-width="2.2" stroke-opacity="0.25"/><path d="M-166.0 45.0A172.0 172.0 0 0 1 -168.3 35.3" stroke="#1a9a1a" stroke-width="2.2" stroke-opacity="0.25"/><path d="M-168.1 36.2A172.0 172.0 0 0 1 -170.0 26.5" stroke="#1a9a1a" stroke-width="2.2" stroke-opacity="0.25"/><path d="M-169.8 27.4A172.0 172.0 0 0 1 -171.1 17.5" stroke="#1a9a1a" stroke-width="2.2" stroke-opacity="0.24"/><path d="M-171.0 18.4A172.0 172.0 0 0 1 -171.8 8.6" stroke="#1a9a1a" stroke-width="2.2" stroke-opacity="0.24"/><path d="M-171.7 9.5A172.0 172.0 0 0 1 -172.0 -0.5" stroke="#1a9a1a" stroke-width="2.2" stroke-opacity="0.23"/><path d="M-172.0 0.5A172.0 172.0 0 0 1 -171.7 -9.5" stroke="#1a9a1a" stroke-width="2.2" stroke-opacity="0.22"/><path d="M-171.8 -8.6A172.0 172.0 0 0 1 -171.0 -18.4" stroke="#1a9a1a" stroke-width="2.2" stroke-opacity="0.21"/><path d="M-171.1 -17.5A172.0 172.0 0 0 1 -169.8 -27.4" stroke="#1a9a1a" stroke-width="2.2" stroke-opacity="0.20"/><path d="M-170.0 -26.5A172.0 172.0 0 0 1 -168.1 -36.2" stroke="#1a9a1a" stroke-width="2.2" stroke-opacity="0.19"/><path d="M-168.3 -35.3A172.0 172.0 0 0 1 -166.0 -45.0" stroke="#1a9a1a" stroke-width="2.2" stroke-opacity="0.18"/><path d="M-166.3 -44.1A172.0 172.0 0 0 1 -163.4 -53.6" stroke="#1a9a1a" stroke-width="2.2" stroke-opacity="0.17"/><path d="M-163.7 -52.7A172.0 172.0 0 0 1 -160.4 -62.1" stroke="#1a9a1a" stroke-width="2.2" stroke-opacity="0.16"/><path d="M-160.7 -61.2A172.0 172.0 0 0 1 -156.9 -70.4" stroke="#1a9a1a" stroke-width="2.2" stroke-opacity="0.15"/><path d="M-157.3 -69.5A172.0 172.0 0 0 1 -153.0 -78.5" stroke="#1a9a1a" stroke-width="2.2" stroke-opacity="0.11"/><path d="M-153.5 -77.7A172.0 172.0 0 0 1 -148.7 -86.4" stroke="#1a9a1a" stroke-width="2.2" stroke-opacity="0.04"/><path d="M-92.7 25.1A96.0 96.0 0 0 1 -94.0 19.7" stroke="#1a9a1a" stroke-width="2.5" stroke-opacity="0.02"/><path d="M-93.8 20.2A96.0 96.0 0 0 1 -94.9 14.8" stroke="#1a9a1a" stroke-width="2.5" stroke-opacity="0.06"/><path d="M-94.8 15.3A96.0 96.0 0 0 1 -95.5 9.8" stroke="#1a9a1a" stroke-width="2.5" stroke-opacity="0.10"/><path d="M-95.4 10.3A96.0 96.0 0 0 1 -95.9 4.8" stroke="#1a9a1a" stroke-width="2.5" stroke-opacity="0.12"/><path d="M-95.9 5.3A96.0 96.0 0 0 1 -96.0 -0.3" stroke="#1a9a1a" stroke-width="2.5" stroke-opacity="0.14"/><path d="M-96.0 0.3A96.0 96.0 0 0 1 -95.9 -5.3" stroke="#1a9a1a" stroke-width="2.5" stroke-opacity="0.17"/><path d="M-95.9 -4.8A96.0 96.0 0 0 1 -95.4 -10.3" stroke="#1a9a1a" stroke-width="2.5" stroke-opacity="0.19"/><path d="M-95.5 -9.8A96.0 96.0 0 0 1 -94.8 -15.3" stroke="#1a9a1a" stroke-width="2.5" stroke-opacity="0.21"/><path d="M-94.9 -14.8A96.0 96.0 0 0 1 -93.8 -20.2" stroke="#1a9a1a" stroke-width="2.5" stroke-opacity="0.22"/><path d="M-94.0 -19.7A96.0 96.0 0 0 1 -92.7 -25.1" stroke="#1a9a1a" stroke-width="2.5" stroke-opacity="0.22"/><path d="M-92.8 -24.6A96.0 96.0 0 0 1 -91.2 -29.9" stroke="#1a9a1a" stroke-width="2.5" stroke-opacity="0.21"/><path d="M-91.4 -29.4A96.0 96.0 0 0 1 -89.5 -34.6" stroke="#1a9a1a" stroke-width="2.5" stroke-opacity="0.19"/><path d="M-89.7 -34.2A96.0 96.0 0 0 1 -87.6 -39.3" stroke="#1a9a1a" stroke-width="2.5" stroke-opacity="0.17"/><path d="M-87.8 -38.8A96.0 96.0 0 0 1 -85.4 -43.8" stroke="#1a9a1a" stroke-width="2.5" stroke-opacity="0.14"/><path d="M-85.7 -43.4A96.0 96.0 0 0 1 -83.0 -48.2" stroke="#1a9a1a" stroke-width="2.5" stroke-opacity="0.12"/><path d="M-83.3 -47.8A96.0 96.0 0 0 1 -80.4 -52.5" stroke="#1a9a1a" stroke-width="2.5" stroke-opacity="0.10"/><path d="M-80.6 -52.1A96.0 96.0 0 0 1 -77.5 -56.6" stroke="#1a9a1a" stroke-width="2.5" stroke-opacity="0.07"/><path d="M-77.8 -56.2A96.0 96.0 0 0 1 -74.4 -60.6" stroke="#1a9a1a" stroke-width="2.5" stroke-opacity="0.03"/><path d="M-6.0 119.9A120.0 120.0 0 0 1 -12.9 119.3" stroke="#1a9a1a" stroke-width="2.0" stroke-opacity="0.03"/><path d="M-12.2 119.4A120.0 120.0 0 0 1 -19.1 118.5" stroke="#1a9a1a" stroke-width="2.0" stroke-opacity="0.04"/><path d="M-18.5 118.6A120.0 120.0 0 0 1 -25.3 117.3" stroke="#1a9a1a" stroke-width="2.0" stroke-opacity="0.05"/><path d="M-24.6 117.4A120.0 120.0 0 0 1 -31.4 115.8" stroke="#1a9a1a" stroke-width="2.0" stroke-opacity="0.05"/><path d="M-30.8 116.0A120.0 120.0 0 0 1 -37.4 114.0" stroke="#1a9a1a" stroke-width="2.0" stroke-opacity="0.06"/><path d="M-36.8 114.2A120.0 120.0 0 0 1 -43.3 111.9" stroke="#1a9a1a" stroke-width="2.0" stroke-opacity="0.06"/><path d="M-42.7 112.1A120.0 120.0 0 0 1 -49.1 109.5" stroke="#1a9a1a" stroke-width="2.0" stroke-opacity="0.07"/><path d="M-48.5 109.8A120.0 120.0 0 0 1 -54.8 106.8" stroke="#1a9a1a" stroke-width="2.0" stroke-opacity="0.07"/><path d="M-54.2 107.1A120.0 120.0 0 0 1 -60.3 103.8" stroke="#1a9a1a" stroke-width="2.0" stroke-opacity="0.08"/><path d="M-59.7 104.1A120.0 120.0 0 0 1 -65.6 100.5" stroke="#1a9a1a" stroke-width="2.0" stroke-opacity="0.08"/><path d="M-65.1 100.8A120.0 120.0 0 0 1 -70.8 96.9" stroke="#1a9a1a" stroke-width="2.0" stroke-opacity="0.08"/><path d="M-70.3 97.3A120.0 120.0 0 0 1 -75.8 93.1" stroke="#1a9a1a" stroke-width="2.0" stroke-opacity="0.08"/><path d="M-75.3 93.5A120.0 120.0 0 0 1 -80.5 89.0" stroke="#1a9a1a" stroke-width="2.0" stroke-opacity="0.08"/><path d="M-80.1 89.4A120.0 120.0 0 0 1 -85.1 84.6" stroke="#1a9a1a" stroke-width="2.0" stroke-opacity="0.07"/><path d="M-84.6 85.1A120.0 120.0 0 0 1 -89.4 80.1" stroke="#1a9a1a" stroke-width="2.0" stroke-opacity="0.07"/><path d="M-89.0 80.5A120.0 120.0 0 0 1 -93.5 75.3" stroke="#1a9a1a" stroke-width="2.0" stroke-opacity="0.06"/><path d="M-93.1 75.8A120.0 120.0 0 0 1 -97.3 70.3" stroke="#1a9a1a" stroke-width="2.0" stroke-opacity="0.06"/><path d="M-96.9 70.8A120.0 120.0 0 0 1 -100.8 65.1" stroke="#1a9a1a" stroke-width="2.0" stroke-opacity="0.05"/><path d="M-100.5 65.6A120.0 120.0 0 0 1 -104.1 59.7" stroke="#1a9a1a" stroke-width="2.0" stroke-opacity="0.05"/><path d="M-103.8 60.3A120.0 120.0 0 0 1 -107.1 54.2" stroke="#1a9a1a" stroke-width="2.0" stroke-opacity="0.04"/><path d="M-106.8 54.8A120.0 120.0 0 0 1 -109.8 48.5" stroke="#1a9a1a" stroke-width="2.0" stroke-opacity="0.03"/><path d="M13.8 -100.1A101.0 101.0 0 0 1 19.5 -99.1" stroke="#3cf03c" stroke-width="1.6" stroke-opacity="0.02"/><path d="M19.0 -99.2A101.0 101.0 0 0 1 24.7 -97.9" stroke="#3cf03c" stroke-width="1.6" stroke-opacity="0.14"/><path d="M24.2 -98.1A101.0 101.0 0 0 1 29.8 -96.5" stroke="#3cf03c" stroke-width="1.6" stroke-opacity="0.29"/><path d="M29.3 -96.7A101.0 101.0 0 0 1 34.8 -94.8" stroke="#3cf03c" stroke-width="1.6" stroke-opacity="0.40"/><path d="M34.3 -95.0A101.0 101.0 0 0 1 39.7 -92.9" stroke="#3cf03c" stroke-width="1.6" stroke-opacity="0.45"/><path d="M39.2 -93.1A101.0 101.0 0 0 1 44.5 -90.7" stroke="#3cf03c" stroke-width="1.6" stroke-opacity="0.42"/><path d="M44.0 -90.9A100.9 100.9 0 0 1 49.1 -88.0" stroke="#3cf03c" stroke-width="1.6" stroke-opacity="0.33"/><path d="M48.6 -88.3A100.5 100.5 0 0 1 53.4 -84.9" stroke="#3cf03c" stroke-width="1.6" stroke-opacity="0.22"/><path d="M53.0 -85.3A100.1 100.1 0 0 1 57.5 -81.7" stroke="#3cf03c" stroke-width="1.6" stroke-opacity="0.12"/><path d="M57.1 -82.0A99.8 99.8 0 0 1 61.5 -78.3" stroke="#3cf03c" stroke-width="1.6" stroke-opacity="0.05"/><path d="M61.1 -78.6A99.4 99.4 0 0 1 65.2 -74.6" stroke="#3cf03c" stroke-width="1.6" stroke-opacity="0.02"/><path d="M-138.8 -11.8A139.3 139.3 0 0 1 -137.9 -19.7" stroke="#5cff5c" stroke-width="2.2" stroke-opacity="0.09"/><path d="M-138.0 -19.0A139.3 139.3 0 0 1 -136.7 -26.9" stroke="#5cff5c" stroke-width="2.2" stroke-opacity="0.26"/><path d="M-136.8 -26.2A139.3 139.3 0 0 1 -135.1 -34.1" stroke="#5cff5c" stroke-width="2.2" stroke-opacity="0.47"/><path d="M-135.2 -33.3A139.3 139.3 0 0 1 -133.1 -41.1" stroke="#5cff5c" stroke-width="2.2" stroke-opacity="0.69"/><path d="M-133.3 -40.4A139.3 139.3 0 0 1 -130.8 -48.0" stroke="#5cff5c" stroke-width="2.2" stroke-opacity="0.80"/><path d="M-131.0 -47.3A139.3 139.3 0 0 1 -128.1 -54.8" stroke="#5cff5c" stroke-width="2.2" stroke-opacity="0.74"/><path d="M-128.4 -54.1A139.3 139.3 0 0 1 -125.0 -61.4" stroke="#5cff5c" stroke-width="2.2" stroke-opacity="0.55"/><path d="M-125.4 -60.7A139.3 139.3 0 0 1 -121.7 -67.9" stroke="#5cff5c" stroke-width="2.2" stroke-opacity="0.33"/><path d="M-122.0 -67.2A139.3 139.3 0 0 1 -117.9 -74.1" stroke="#5cff5c" stroke-width="2.2" stroke-opacity="0.16"/><path d="M-118.3 -73.5A139.3 139.3 0 0 1 -113.9 -80.2" stroke="#5cff5c" stroke-width="2.2" stroke-opacity="0.04"/></g>
</g>
<circle r="208.9" fill="none" stroke="#000" stroke-opacity="0.55" stroke-width="1.4"/>
<path d="M0 0L-29.76 -207.78A209.5 209.5 0 0 1 -0.00 -209.90Z" fill="#4d4d4d"/>
<g stroke="#2b2b2b" stroke-opacity="0.72" stroke-width="1.05" fill="none">
<path d="M0 0L0.00 -208.00"/>
<path d="M0 0L53.83 -200.91"/>
<path d="M0 0L104.00 -180.13"/>
<path d="M0 0L147.08 -147.08"/>
<path d="M0 0L180.13 -104.00"/>
<path d="M0 0L200.91 -53.83"/>
<path d="M0 0L208.00 -0.00"/>
<path d="M0 0L200.91 53.83"/>
<path d="M0 0L180.13 104.00"/>
<path d="M0 0L147.08 147.08"/>
<path d="M0 0L104.00 180.13"/>
<path d="M0 0L53.83 200.91"/>
<path d="M0 0L0.00 208.00"/>
<path d="M0 0L-53.83 200.91"/>
<path d="M0 0L-104.00 180.13"/>
<path d="M0 0L-147.08 147.08"/>
<path d="M0 0L-180.13 104.00"/>
<path d="M0 0L-200.91 53.83"/>
<path d="M0 0L-208.00 0.00"/>
<path d="M0 0L-200.91 -53.83"/>
<path d="M0 0L-180.13 -104.00"/>
<path d="M0 0L-147.08 -147.08"/>
<path d="M0 0L-104.00 -180.13"/>
<path d="M0 0L-53.83 -200.91"/>
<circle r="52.00"/>
<circle r="104.00"/>
<circle r="156.00"/>
</g>
<circle r="209.1" fill="none" stroke="#141414" stroke-opacity="0.75" stroke-width="1.2"/>
<circle cx="-189.6" cy="-89.2" r="2.1" fill="#0b820b"/>
<g font-family="Liberation Sans, sans-serif" font-size="9" fill="#b6b6b6" text-anchor="middle">
<text x="-0.7" y="-220.9">0°</text>
<text x="56.4" y="-213.4">15°</text>
<text x="109.5" y="-191.4">30°</text>
<text x="155.2" y="-156.3">45°</text>
<text x="190.3" y="-110.7">60°</text>
<text x="212.3" y="-57.5">75°</text>
<text x="219.8" y="-0.4">90°</text>
<text x="212.3" y="56.7">105°</text>
<text x="190.3" y="109.8">120°</text>
<text x="155.2" y="155.5">135°</text>
<text x="109.5" y="190.6">150°</text>
<text x="56.4" y="212.6">165°</text>
<text x="-0.7" y="220.1">180°</text>
<text x="-57.8" y="212.6">195°</text>
<text x="-111.0" y="190.6">210°</text>
<text x="-156.6" y="155.5">225°</text>
<text x="-191.7" y="109.9">240°</text>
<text x="-213.7" y="56.7">255°</text>
<text x="-221.2" y="-0.4">270°</text>
<text x="-213.7" y="-57.5">285°</text>
<text x="-191.7" y="-110.7">300°</text>
<text x="-156.6" y="-156.3">315°</text>
<text x="-111.0" y="-191.4">330°</text>
<text x="-57.8" y="-213.4">345°</text>
</g>
<g font-family="Liberation Sans, sans-serif" font-size="9" fill="#c8c8c8" text-anchor="middle">
<text x="-0.5" y="-42.7" stroke="#1a1a1a" stroke-width="1" stroke-opacity="0.3" paint-order="stroke">2.4 m</text>
<text x="-0.5" y="-94.7" stroke="#1a1a1a" stroke-width="1" stroke-opacity="0.3" paint-order="stroke">4.8 m</text>
<text x="-0.5" y="-146.7" stroke="#1a1a1a" stroke-width="1" stroke-opacity="0.3" paint-order="stroke">7.2 m</text>
<text x="-0.5" y="-199.7" stroke="#1a1a1a" stroke-width="1" stroke-opacity="0.3" paint-order="stroke">9.6 m</text>
</g>
</svg></div>

<div class="lbl" style="left:580px;top:511px">Step</div>
<div class="sel" style="left:680px;top:508px;width:151px">STC</div>
<div class="lbl" style="left:881px;top:511px">Data</div>
<div class="sel" style="left:982px;top:508px;width:151px">Amplitude</div>
<div class="lbl" style="left:580px;top:533px">Min Range</div>
<div class="inp" style="left:680px;top:531px;width:151px"></div>
<div class="lbl" style="left:881px;top:533px">Max Range</div>
<div class="inp" style="left:982px;top:531px;width:151px"></div>
<div class="lbl" style="left:580px;top:556px">Auto</div>
<div class="chk" style="left:680.3px;top:556.3px"><svg width="12.4" height="12.4" viewBox="0 0 12.4 12.4"><path d="M3 6.4L5.6 8.9L9.7 4.5" stroke="#4a3826" stroke-width="1.7" fill="none"/></svg></div>
<div class="lbl" style="left:580px;top:578px">Min Amp</div>
<div class="val" style="left:680px;top:578px">3.756</div>
<div class="lbl" style="left:881px;top:578px">Max Amp</div>
<div class="val" style="left:982px;top:578px">868399.61</div>
<div class="lbl" style="left:580px;top:601px">Min Amp</div>
<div class="inp dis" style="left:680px;top:598px;width:151px"></div>
<div class="lbl" style="left:881px;top:601px">Max Amp</div>
<div class="inp dis" style="left:982px;top:598px;width:151px"></div>
<div class="btn" style="left:580px;top:630px;width:100.5px">Clear</div>
<div class="btn" style="left:680.5px;top:630px;width:100.5px">Redraw</div>

<!-- Panel 3 -->
<div class="panel" style="left:1235px;top:6px;width:357px;height:565px">
  <div class="title">Controls<svg width="11" height="9" viewBox="0 0 11 9"><path d="M2.6 0.9L7 8M9.6 0.8L0.8 7.8" stroke="#560000" stroke-width="2" fill="none"/></svg></div>
</div>
<div class="teal" style="left:1242.5px;top:44.5px">Suppress DC</div>
<div class="rad" style="left:1242px;top:66.5px"></div>
<div class="inp dis" style="left:1242px;top:87px;width:157px">20</div>
<div class="teal" style="left:1242.5px;top:116px">STC</div>
<div class="chk" style="left:1242px;top:138.3px"><svg width="12.4" height="12.4" viewBox="0 0 12.4 12.4"><path d="M3 6.4L5.6 8.9L9.7 4.5" stroke="#4a3826" stroke-width="1.7" fill="none"/></svg></div>
<div class="val" style="left:1242px;top:160.5px">2.00</div>
<div style="position:absolute;left:1241.5px;top:180.5px;width:342.5px;height:20px;border:1px solid #4b78c6;border-radius:2.5px;box-shadow:inset 0 0 0 1px rgba(20,25,40,.5)"></div>
<div style="position:absolute;left:1243px;top:187px;width:332px;height:6px;background:#e9e3db;border-top:1px solid #1c1c1c;border-bottom:1px solid #2a2a2a"></div>
<div style="position:absolute;left:1574px;top:181.5px;width:9.5px;height:18px;background:linear-gradient(#f2f2f2,#dcdcdc);border:1px solid #b8b8b8;border-radius:2px"><svg width="8" height="16" viewBox="0 0 8 16" style="position:absolute;left:0;top:0"><path d="M2 6.5h4M2 8.5h4M2 10.5h4" stroke="#8a8a8a" stroke-width="1"/></svg></div>
</body></html>
